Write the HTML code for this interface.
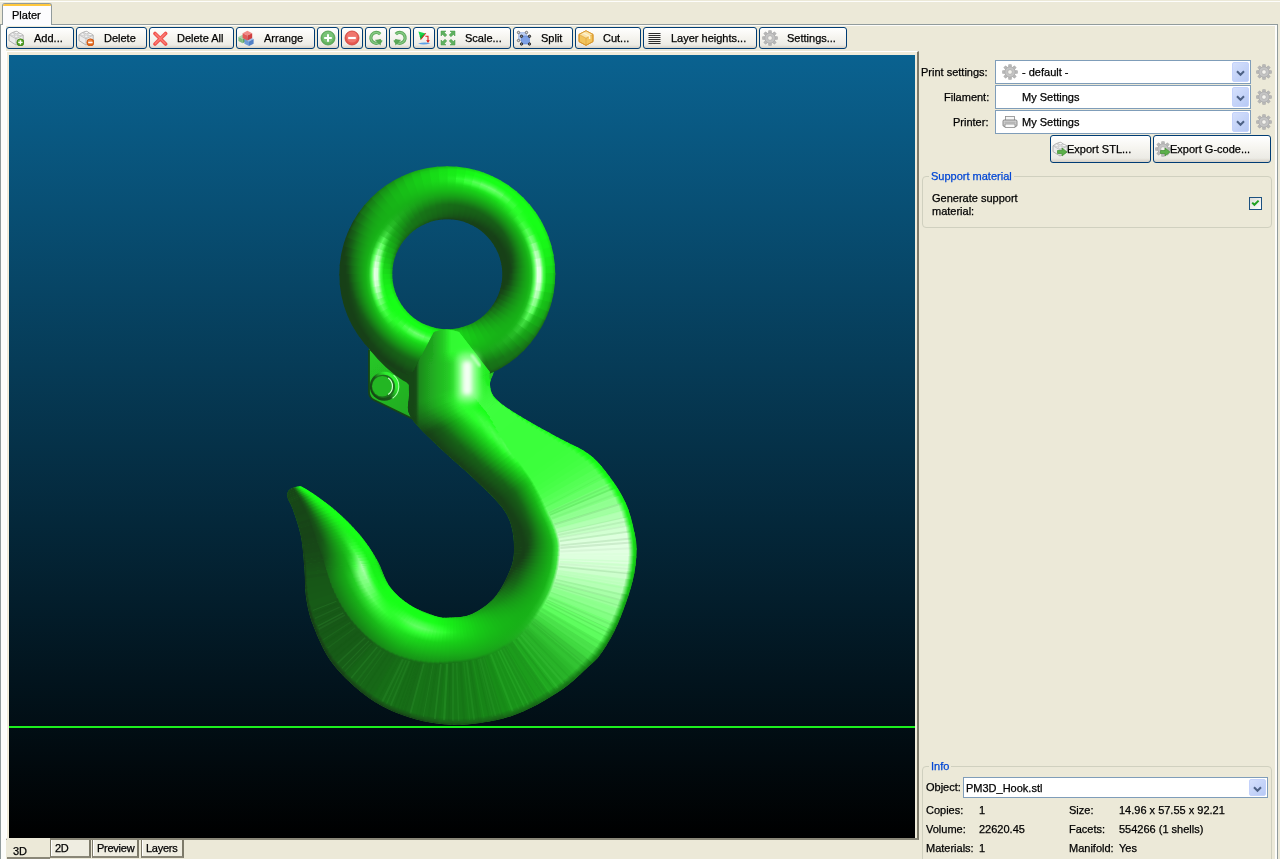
<!DOCTYPE html>
<html>
<head>
<meta charset="utf-8">
<title>Slic3r</title>
<style>
*{box-sizing:border-box;margin:0;padding:0}
html,body{width:1280px;height:859px;overflow:hidden;background:#ece9d8}
body{will-change:transform;-webkit-text-stroke:0.25px currentColor;font-family:"Liberation Sans",sans-serif;font-size:11px;color:#000;position:relative}
.abs{position:absolute}
/* top notebook */
#topline{left:0;top:1px;width:1280px;height:1px;background:#fdfdfb}
#pageborder{left:0;top:24px;width:1278px;height:1px;background:#919b9c}
#pagehl{left:1px;top:25px;width:1276px;height:1px;background:#fcfcfa}
#rightb{left:1277px;top:24px;width:1px;height:835px;background:#919b9c}
#rightw{left:1275px;top:25px;width:2px;height:834px;background:#fdfdfb}
#leftb{left:0;top:24px;width:1px;height:835px;background:#919b9c}
#leftw{left:1px;top:25px;width:5px;height:834px;background:#fdfdfb}
#tab{left:2px;top:3px;width:50px;height:22px;background:#fcfcfe;border:1px solid #919b9c;border-bottom:none;border-radius:3px 3px 0 0;overflow:hidden}
#tab i{position:absolute;left:-1px;top:-1px;width:50px;height:3px;background:#ffc73c;border-top:1px solid #e68b2c;border-radius:3px 3px 0 0}
#tab span{position:absolute;left:9px;top:5px;font-size:11px}
/* toolbar buttons */
.btn{position:absolute;top:27px;height:22px;border:1px solid #003c74;border-radius:3px;background:linear-gradient(#ffffff 0%,#f6f5f0 45%,#ecebe5 85%,#d6d0c5 100%);font-size:11px;line-height:20px;white-space:nowrap}
.btn span{position:absolute;top:0;left:0}
.btn svg{position:absolute;left:2px;top:2px}
/* canvas */
#cvwrap{left:6px;top:51px;width:913px;height:789px;background:#f1ecda;border-top:1px solid #fff;border-left:1px solid #fff;border-right:2px solid #7d7a6a;border-bottom:2px solid #8a8778}
#cvin{left:7px;top:838px;width:43px;height:3px;background:#ece9d8}
#cv{left:9px;top:55px;width:906px;height:783px;overflow:hidden;background:linear-gradient(#0a6290 0%,#000 100%)}
/* bottom tabs */
.btab{position:absolute;top:840px;height:18px;border-left:1px solid #7d7a6a;border-right:2px solid #7d7a6a;border-bottom:2px solid #8a8778;box-shadow:inset 1px 0 0 #fff;font-size:11px;letter-spacing:-0.25px;line-height:17px;padding-left:4px;background:#efede1}
/* right panel */
.lbl{position:absolute;font-size:11px;white-space:nowrap}
.combo{position:absolute;left:995px;width:256px;height:24px;background:#fff;border:1px solid #7f9db9}
.combo .dd{position:absolute;right:1px;top:1px;width:17px;height:20px;border-radius:2px;background:linear-gradient(135deg,#d5e0fc,#b7c9f5);border:1px solid #c4d2fb}
.combo .t{position:absolute;left:26px;top:5px;font-size:11px}
.grp{position:absolute;border:1px solid #d0d0bf;border-radius:4px}
.grp b{position:absolute;left:6px;top:-7px;background:#ece9d8;color:#0046d5;font-weight:normal;padding:0 2px;font-size:11px}
</style>
</head>
<body>
<div class="abs" id="topline"></div>
<div class="abs" id="pageborder"></div>
<div class="abs" id="pagehl"></div>
<div class="abs" id="leftb"></div>
<div class="abs" id="leftw"></div>
<div class="abs" id="rightw"></div>
<div class="abs" id="rightb"></div>
<div class="abs" id="tab"><i></i><span>Plater</span></div>

<!-- TOOLBAR -->
<div id="toolbar">
<div class="btn" style="left:6px;width:68px"><span style="left:27px">Add...</span><svg width="16" height="16" viewBox="0 0 16 16" style="left:1px;top:2px"><path d="M1 4.8L1 10.6L8 15L15.2 11L15.2 5.2L11.6 3.2L8.2 1.2L4.4 2.6Z" fill="#ececec" stroke="#a9a9a9" stroke-width=".9" stroke-linejoin="round"/><path d="M1 4.8L8 8.8L15.2 5.2M8 8.8L8 15" fill="none" stroke="#b9b9b9" stroke-width=".8"/><ellipse cx="4.6" cy="4.2" rx="2" ry="1.1" fill="#fbfbfb" stroke="#b0b0b0" stroke-width=".6"/><ellipse cx="8.4" cy="2.6" rx="2" ry="1.1" fill="#fbfbfb" stroke="#b0b0b0" stroke-width=".6"/><ellipse cx="8.2" cy="6.2" rx="2" ry="1.1" fill="#fbfbfb" stroke="#b0b0b0" stroke-width=".6"/><ellipse cx="12" cy="4.6" rx="2" ry="1.1" fill="#fbfbfb" stroke="#b0b0b0" stroke-width=".6"/><circle cx="12.4" cy="12.4" r="3.6" fill="#4e9c22" stroke="#3a7d14" stroke-width=".6"/><circle cx="12" cy="11.8" r="2.2" fill="#86c85a" opacity=".7"/><path d="M12.4 10.2V14.6M10.2 12.4H14.6" stroke="#fff" stroke-width="1.3"/></svg></div>
<div class="btn" style="left:76px;width:71px"><span style="left:27px">Delete</span><svg width="16" height="16" viewBox="0 0 16 16" style="left:1px;top:2px"><path d="M1 4.8L1 10.6L8 15L15.2 11L15.2 5.2L11.6 3.2L8.2 1.2L4.4 2.6Z" fill="#ececec" stroke="#a9a9a9" stroke-width=".9" stroke-linejoin="round"/><path d="M1 4.8L8 8.8L15.2 5.2M8 8.8L8 15" fill="none" stroke="#b9b9b9" stroke-width=".8"/><ellipse cx="4.6" cy="4.2" rx="2" ry="1.1" fill="#fbfbfb" stroke="#b0b0b0" stroke-width=".6"/><ellipse cx="8.4" cy="2.6" rx="2" ry="1.1" fill="#fbfbfb" stroke="#b0b0b0" stroke-width=".6"/><ellipse cx="8.2" cy="6.2" rx="2" ry="1.1" fill="#fbfbfb" stroke="#b0b0b0" stroke-width=".6"/><ellipse cx="12" cy="4.6" rx="2" ry="1.1" fill="#fbfbfb" stroke="#b0b0b0" stroke-width=".6"/><circle cx="12.4" cy="12.4" r="3.6" fill="#e2661a" stroke="#c2500e" stroke-width=".6"/><circle cx="12" cy="11.6" r="2.2" fill="#f49a5c" opacity=".7"/><path d="M10.2 12.5H14.6" stroke="#fff" stroke-width="1.5"/></svg></div>
<div class="btn" style="left:149px;width:85px"><span style="left:27px">Delete All</span><svg width="16" height="16" viewBox="0 0 16 16" style="left:2px;top:2px"><path d="M3 3.4L13.6 14M13.6 3.4L3 14" stroke="#f0534c" stroke-width="3.6" stroke-linecap="round"/><path d="M3.4 3.8L13.2 13.6M13.2 3.8L3.4 13.6" stroke="#fb7d77" stroke-width="1.4" stroke-linecap="round"/></svg></div>
<div class="btn" style="left:236px;width:79px"><span style="left:27px">Arrange</span><svg width="16" height="16" viewBox="0 0 16 16" style="left:1px;top:2px"><path d="M4.6 4.8L8.8 6.9L4.6 9.0L0.4 6.9Z" fill="#a8d4a8"/><path d="M0.4 6.9L4.6 9.0L4.6 13.2L0.4 11.1Z" fill="#7dbb80"/><path d="M8.8 6.9L4.6 9.0L4.6 13.2L8.8 11.1Z" fill="#5fa565"/><path d="M11.0 6.8L15.6 9.1L11.0 11.4L6.4 9.1Z" fill="#9fc0ea"/><path d="M6.4 9.1L11.0 11.4L11.0 16.0L6.4 13.7Z" fill="#6f9bd8"/><path d="M15.6 9.1L11.0 11.4L11.0 16.0L15.6 13.7Z" fill="#4f7fc6"/><path d="M9.4 0.8L14.2 3.2L9.4 5.6L4.6 3.2Z" fill="#f08a86"/><path d="M4.6 3.2L9.4 5.6L9.4 10.4L4.6 8.0Z" fill="#e25a58"/><path d="M14.2 3.2L9.4 5.6L9.4 10.4L14.2 8.0Z" fill="#cf4040"/></svg></div>
<div class="btn" style="left:317px;width:22px"><svg width="16" height="16" viewBox="0 0 16 16" style="left:2px;top:2px"><circle cx="8" cy="8" r="7" fill="#63b35f" stroke="#4d9a4a" stroke-width=".8"/><circle cx="8" cy="7" r="5.6" fill="#8ed08a" opacity=".55"/><path d="M8 4.2V11.8M4.2 8H11.8" stroke="#fff" stroke-width="2"/></svg></div>
<div class="btn" style="left:341px;width:22px"><svg width="16" height="16" viewBox="0 0 16 16" style="left:2px;top:2px"><circle cx="8" cy="8" r="7" fill="#e6574f" stroke="#cc4038" stroke-width=".8"/><circle cx="8" cy="7" r="5.6" fill="#f59089" opacity=".55"/><path d="M4.2 8H11.8" stroke="#fff" stroke-width="2.2"/></svg></div>
<div class="btn" style="left:365px;width:22px"><svg width="16" height="16" viewBox="0 0 16 16" style="left:2px;top:2px"><path d="M12.2 4.2A5.4 5.4 0 1 0 13.2 10" fill="none" stroke="#5aa858" stroke-width="3.2"/><path d="M12.2 4.2A5.4 5.4 0 1 0 13.2 10" fill="none" stroke="#86c884" stroke-width="1.4"/><path d="M7.4 10.2L12.6 9.4L12.4 15Z" fill="#5aa858" stroke="#4a9848" stroke-width=".5"/></svg></div>
<div class="btn" style="left:389px;width:22px"><svg width="16" height="16" viewBox="0 0 16 16" style="left:2px;top:2px"><path d="M3.8 4.2A5.4 5.4 0 1 1 2.8 10" fill="none" stroke="#5aa858" stroke-width="3.2"/><path d="M3.8 4.2A5.4 5.4 0 1 1 2.8 10" fill="none" stroke="#86c884" stroke-width="1.4"/><path d="M8.6 10.2L3.4 9.4L3.6 15Z" fill="#5aa858" stroke="#4a9848" stroke-width=".5"/></svg></div>
<div class="btn" style="left:413px;width:22px"><svg width="16" height="16" viewBox="0 0 16 16" style="left:2px;top:2px"><path d="M2.4 1.6L9.6 3.4L4.8 9.6Z" fill="#19d84a"/><path d="M9.6 3.4L4.8 9.6L3.6 6Z" fill="#13b03c"/><path d="M4.8 9.6L9.8 3.2" stroke="#e22" stroke-width="1"/><path d="M9.4 6.2H12V11" fill="none" stroke="#d81e1e" stroke-width="1.1"/><path d="M10.2 10.2H13.8L12 13Z" fill="#d81e1e"/><path d="M2 13.6Q8 11.6 14.4 13.2Q8 15.8 2 13.6Z" fill="#5da0e6"/></svg></div>
<div class="btn" style="left:437px;width:74px"><span style="left:27px">Scale...</span><svg width="16" height="16" viewBox="0 0 16 16" style="left:2px;top:2px"><g fill="#5fb160" stroke="#479a49" stroke-width=".5"><path d="M1 1H6L4.4 2.6L6.8 5L5 6.8L2.6 4.4L1 6Z"/><path d="M15 1V6L13.4 4.4L11 6.8L9.2 5L11.6 2.6L10 1Z"/><path d="M1 15V10L2.6 11.6L5 9.2L6.8 11L4.4 13.4L6 15Z"/><path d="M15 15H10L11.6 13.4L9.2 11L11 9.2L13.4 11.6L15 10Z"/></g></svg></div>
<div class="btn" style="left:513px;width:60px"><span style="left:27px">Split</span><svg width="16" height="16" viewBox="0 0 16 16" style="left:2px;top:2px"><rect x="2.5" y="2.5" width="8" height="8" fill="#b9cdf2" stroke="#9fb6e6" stroke-width=".6"/><rect x="5.5" y="6" width="8" height="8" fill="#7fa2e6" stroke="#5f86d6" stroke-width=".6"/><g fill="#ddd" stroke="#666" stroke-width=".9"><circle cx="2.5" cy="2.5" r="1.2"/><circle cx="10.5" cy="2.5" r="1.2"/><circle cx="2.5" cy="10.5" r="1.2"/></g><g fill="#888" stroke="#222" stroke-width=".9"><circle cx="5.5" cy="6.3" r="1.2"/><circle cx="13.5" cy="6.3" r="1.2"/><circle cx="5.5" cy="14" r="1.2"/><circle cx="13.5" cy="14" r="1.2"/></g></svg></div>
<div class="btn" style="left:575px;width:66px"><span style="left:27px">Cut...</span><svg width="16" height="16" viewBox="0 0 16 16" style="left:2px;top:2px"><path d="M8 .8L15 4.4V11.6L8 15.4L1 11.6V4.4Z" fill="#f2c45c" stroke="#d9972b" stroke-width=".9" stroke-linejoin="round"/><path d="M8 .8L15 4.4L8 8.2L1 4.4Z" fill="#fbe3a6"/><path d="M1 4.4L8 8.2V15.4" fill="none" stroke="#e0a43c" stroke-width=".7"/><path d="M8 8.2L15 4.4" stroke="#e0a43c" stroke-width=".7"/><path d="M4.6 2.6L11.6 6.2V9" fill="none" stroke="#fdf2d0" stroke-width="1.5"/><path d="M8 .8L15 4.4V11.6L8 15.4L1 11.6V4.4Z" fill="none" stroke="#d9972b" stroke-width=".9" stroke-linejoin="round"/></svg></div>
<div class="btn" style="left:643px;width:114px"><span style="left:27px">Layer heights...</span><svg width="16" height="16" viewBox="0 0 16 16" style="left:2px;top:2px"><path d="M2.5 3.5H14.5M2.5 5.5H14.5M2.5 7.5H14.5M2.5 9.5H14.5M2.5 11.5H14.5M2.5 13.5H14.5" stroke="#2c2c2c" stroke-width="1"/></svg></div>
<div class="btn" style="left:759px;width:88px"><span style="left:27px">Settings...</span><svg width="16" height="16" viewBox="0 0 16 16" style="left:2px;top:2px"><g transform="translate(8 8)"><g fill="#b8b8b8" stroke="#a0a0a0" stroke-width=".4"><rect x="-1.5" y="-7.6" width="3" height="4" rx=".6" transform="rotate(0)"/><rect x="-1.5" y="-7.6" width="3" height="4" rx=".6" transform="rotate(45)"/><rect x="-1.5" y="-7.6" width="3" height="4" rx=".6" transform="rotate(90)"/><rect x="-1.5" y="-7.6" width="3" height="4" rx=".6" transform="rotate(135)"/><rect x="-1.5" y="-7.6" width="3" height="4" rx=".6" transform="rotate(180)"/><rect x="-1.5" y="-7.6" width="3" height="4" rx=".6" transform="rotate(225)"/><rect x="-1.5" y="-7.6" width="3" height="4" rx=".6" transform="rotate(270)"/><rect x="-1.5" y="-7.6" width="3" height="4" rx=".6" transform="rotate(315)"/></g><circle r="5.2" fill="#c4c4c4" stroke="#a4a4a4" stroke-width=".6"/><circle r="2.3" fill="#f4f3ee" stroke="#a4a4a4" stroke-width=".6"/></g></svg></div>
</div>

<!-- CANVAS -->
<div class="abs" id="cvwrap"></div>
<div class="abs" id="cvin"></div>
<div class="abs" id="cv">
<!--HOOK-->
<svg class="abs" style="left:0;top:0" width="906" height="783" viewBox="9 55 906 783">
<defs><linearGradient id="lp" gradientUnits="userSpaceOnUse" x1="369" y1="355" x2="411" y2="415"><stop offset="0" stop-color="#26c826"/><stop offset="1" stop-color="#20aa20"/></linearGradient>
<clipPath id="clp"><path d="M369 348L369 392Q369 397.5 374 400L412 418.5L412 376L396 352Z"/></clipPath>
<filter id="bl2" x="-20%" y="-20%" width="140%" height="140%"><feGaussianBlur stdDeviation="2"/></filter>
<filter id="bl1" x="-20%" y="-20%" width="140%" height="140%"><feGaussianBlur stdDeviation="1"/></filter>
<filter id="bl07" x="-20%" y="-20%" width="140%" height="140%"><feGaussianBlur stdDeviation="0.7"/></filter>
<linearGradient id="bo" gradientUnits="userSpaceOnUse" x1="372" y1="396" x2="397" y2="377"><stop offset="0" stop-color="#144414"/><stop offset=".42" stop-color="#185818"/><stop offset=".6" stop-color="#22b022"/><stop offset=".78" stop-color="#2eea2e"/><stop offset="1" stop-color="#34f834"/></linearGradient>
<linearGradient id="b0" gradientUnits="userSpaceOnUse" x1="390.0" y1="395.2" x2="469.0" y2="362.2"><stop offset="0.000" stop-color="#174017"/><stop offset="0.044" stop-color="#174417"/><stop offset="0.096" stop-color="#174e17"/><stop offset="0.155" stop-color="#175817"/><stop offset="0.221" stop-color="#176a17"/><stop offset="0.291" stop-color="#178817"/><stop offset="0.363" stop-color="#17a517"/><stop offset="0.436" stop-color="#1bc31b"/><stop offset="0.509" stop-color="#2ae92a"/><stop offset="0.578" stop-color="#2eff2e"/><stop offset="0.643" stop-color="#2aff2a"/><stop offset="0.702" stop-color="#1dff1d"/><stop offset="0.753" stop-color="#17ff17"/><stop offset="0.763" stop-color="#46ff46"/><stop offset="0.975" stop-color="#46ff46"/><stop offset="0.993" stop-color="#19ff19"/><stop offset="1.000" stop-color="#17f617"/></linearGradient>
<linearGradient id="b1" gradientUnits="userSpaceOnUse" x1="396.0" y1="401.8" x2="475.0" y2="368.8"><stop offset="0.000" stop-color="#174017"/><stop offset="0.044" stop-color="#174417"/><stop offset="0.096" stop-color="#174e17"/><stop offset="0.155" stop-color="#175717"/><stop offset="0.221" stop-color="#176a17"/><stop offset="0.291" stop-color="#178817"/><stop offset="0.363" stop-color="#17a517"/><stop offset="0.436" stop-color="#1bc31b"/><stop offset="0.509" stop-color="#2ae92a"/><stop offset="0.578" stop-color="#2eff2e"/><stop offset="0.643" stop-color="#29ff29"/><stop offset="0.702" stop-color="#1cff1c"/><stop offset="0.753" stop-color="#17ff17"/><stop offset="0.763" stop-color="#47ff47"/><stop offset="0.975" stop-color="#47ff47"/><stop offset="0.993" stop-color="#18ff18"/><stop offset="1.000" stop-color="#17f317"/></linearGradient>
<linearGradient id="b2" gradientUnits="userSpaceOnUse" x1="402.0" y1="408.2" x2="481.0" y2="375.2"><stop offset="0.000" stop-color="#174017"/><stop offset="0.044" stop-color="#174417"/><stop offset="0.096" stop-color="#174e17"/><stop offset="0.155" stop-color="#175717"/><stop offset="0.221" stop-color="#176a17"/><stop offset="0.291" stop-color="#178817"/><stop offset="0.363" stop-color="#17a517"/><stop offset="0.436" stop-color="#1bc31b"/><stop offset="0.509" stop-color="#2bea2b"/><stop offset="0.578" stop-color="#2fff2f"/><stop offset="0.643" stop-color="#28ff28"/><stop offset="0.702" stop-color="#1cff1c"/><stop offset="0.753" stop-color="#17ff17"/><stop offset="0.763" stop-color="#48ff48"/><stop offset="0.975" stop-color="#48ff48"/><stop offset="0.993" stop-color="#18ff18"/><stop offset="1.000" stop-color="#17fa17"/></linearGradient>
<linearGradient id="b3" gradientUnits="userSpaceOnUse" x1="408.0" y1="414.8" x2="487.0" y2="381.8"><stop offset="0.000" stop-color="#174017"/><stop offset="0.044" stop-color="#174417"/><stop offset="0.096" stop-color="#174e17"/><stop offset="0.155" stop-color="#175717"/><stop offset="0.221" stop-color="#176a17"/><stop offset="0.291" stop-color="#178817"/><stop offset="0.363" stop-color="#17a517"/><stop offset="0.436" stop-color="#1bc31b"/><stop offset="0.509" stop-color="#2ae92a"/><stop offset="0.578" stop-color="#2eff2e"/><stop offset="0.643" stop-color="#29ff29"/><stop offset="0.702" stop-color="#1cff1c"/><stop offset="0.753" stop-color="#17ff17"/><stop offset="0.763" stop-color="#47ff47"/><stop offset="0.975" stop-color="#47ff47"/><stop offset="0.993" stop-color="#18ff18"/><stop offset="1.000" stop-color="#17f217"/></linearGradient>
<linearGradient id="b4" gradientUnits="userSpaceOnUse" x1="413.1" y1="420.1" x2="490.5" y2="386.5"><stop offset="0.000" stop-color="#174017"/><stop offset="0.044" stop-color="#174417"/><stop offset="0.096" stop-color="#174e17"/><stop offset="0.156" stop-color="#175717"/><stop offset="0.222" stop-color="#176a17"/><stop offset="0.292" stop-color="#178817"/><stop offset="0.365" stop-color="#17a517"/><stop offset="0.439" stop-color="#1bc31b"/><stop offset="0.511" stop-color="#2ae92a"/><stop offset="0.581" stop-color="#2eff2e"/><stop offset="0.646" stop-color="#2aff2a"/><stop offset="0.706" stop-color="#1dff1d"/><stop offset="0.757" stop-color="#17ff17"/><stop offset="0.767" stop-color="#46ff46"/><stop offset="0.976" stop-color="#46ff46"/><stop offset="0.993" stop-color="#19ff19"/><stop offset="1.000" stop-color="#17f917"/></linearGradient>
<linearGradient id="b5" gradientUnits="userSpaceOnUse" x1="417.4" y1="424.4" x2="491.5" y2="389.5"><stop offset="0.000" stop-color="#174017"/><stop offset="0.044" stop-color="#174417"/><stop offset="0.097" stop-color="#174e17"/><stop offset="0.158" stop-color="#175817"/><stop offset="0.225" stop-color="#176a17"/><stop offset="0.296" stop-color="#178817"/><stop offset="0.369" stop-color="#17a517"/><stop offset="0.444" stop-color="#1bc31b"/><stop offset="0.517" stop-color="#2ae82a"/><stop offset="0.588" stop-color="#2eff2e"/><stop offset="0.654" stop-color="#2aff2a"/><stop offset="0.714" stop-color="#1dff1d"/><stop offset="0.766" stop-color="#17ff17"/><stop offset="0.775" stop-color="#46ff46"/><stop offset="0.977" stop-color="#46ff46"/><stop offset="0.993" stop-color="#19ff19"/><stop offset="1.000" stop-color="#17f617"/></linearGradient>
<linearGradient id="b6" gradientUnits="userSpaceOnUse" x1="421.6" y1="428.6" x2="492.5" y2="392.5"><stop offset="0.000" stop-color="#174017"/><stop offset="0.045" stop-color="#174417"/><stop offset="0.098" stop-color="#174e17"/><stop offset="0.160" stop-color="#175817"/><stop offset="0.227" stop-color="#176a17"/><stop offset="0.299" stop-color="#178817"/><stop offset="0.373" stop-color="#17a517"/><stop offset="0.449" stop-color="#1bc31b"/><stop offset="0.523" stop-color="#29e829"/><stop offset="0.594" stop-color="#2eff2e"/><stop offset="0.661" stop-color="#2aff2a"/><stop offset="0.722" stop-color="#1dff1d"/><stop offset="0.775" stop-color="#17ff17"/><stop offset="0.784" stop-color="#46ff46"/><stop offset="0.977" stop-color="#46ff46"/><stop offset="0.993" stop-color="#19ff19"/><stop offset="1.000" stop-color="#17f217"/></linearGradient>
<linearGradient id="b7" gradientUnits="userSpaceOnUse" x1="425.9" y1="432.9" x2="493.5" y2="395.5"><stop offset="0.000" stop-color="#174017"/><stop offset="0.045" stop-color="#174517"/><stop offset="0.100" stop-color="#174e17"/><stop offset="0.162" stop-color="#175817"/><stop offset="0.230" stop-color="#176a17"/><stop offset="0.303" stop-color="#178817"/><stop offset="0.378" stop-color="#17a517"/><stop offset="0.454" stop-color="#1bc31b"/><stop offset="0.529" stop-color="#28e728"/><stop offset="0.601" stop-color="#2dff2d"/><stop offset="0.669" stop-color="#2cff2c"/><stop offset="0.730" stop-color="#1eff1e"/><stop offset="0.784" stop-color="#17ff17"/><stop offset="0.792" stop-color="#44ff44"/><stop offset="0.978" stop-color="#44ff44"/><stop offset="0.994" stop-color="#19ff19"/><stop offset="1.000" stop-color="#17f917"/></linearGradient>
<linearGradient id="b8" gradientUnits="userSpaceOnUse" x1="430.1" y1="437.1" x2="494.6" y2="397.5"><stop offset="0.000" stop-color="#174017"/><stop offset="0.045" stop-color="#174517"/><stop offset="0.100" stop-color="#174f17"/><stop offset="0.162" stop-color="#175817"/><stop offset="0.231" stop-color="#176a17"/><stop offset="0.303" stop-color="#178817"/><stop offset="0.379" stop-color="#17a517"/><stop offset="0.455" stop-color="#1bc31b"/><stop offset="0.531" stop-color="#27e627"/><stop offset="0.603" stop-color="#2dff2d"/><stop offset="0.671" stop-color="#2eff2e"/><stop offset="0.732" stop-color="#1fff1f"/><stop offset="0.786" stop-color="#17ff17"/><stop offset="0.794" stop-color="#43ff43"/><stop offset="0.979" stop-color="#43ff43"/><stop offset="0.994" stop-color="#19ff19"/><stop offset="1.000" stop-color="#17f217"/></linearGradient>
<linearGradient id="b9" gradientUnits="userSpaceOnUse" x1="434.4" y1="441.4" x2="495.9" y2="398.5"><stop offset="0.000" stop-color="#174017"/><stop offset="0.045" stop-color="#174617"/><stop offset="0.099" stop-color="#174f17"/><stop offset="0.161" stop-color="#175817"/><stop offset="0.229" stop-color="#176a17"/><stop offset="0.302" stop-color="#178817"/><stop offset="0.377" stop-color="#17a517"/><stop offset="0.453" stop-color="#1bc31b"/><stop offset="0.528" stop-color="#26e526"/><stop offset="0.600" stop-color="#2cff2c"/><stop offset="0.667" stop-color="#31ff31"/><stop offset="0.728" stop-color="#20ff20"/><stop offset="0.781" stop-color="#18ff18"/><stop offset="0.790" stop-color="#42ff42"/><stop offset="0.978" stop-color="#42ff42"/><stop offset="0.993" stop-color="#19ff19"/><stop offset="1.000" stop-color="#17f817"/></linearGradient>
<linearGradient id="b10" gradientUnits="userSpaceOnUse" x1="438.6" y1="445.6" x2="497.1" y2="399.5"><stop offset="0.000" stop-color="#174017"/><stop offset="0.045" stop-color="#174617"/><stop offset="0.099" stop-color="#175017"/><stop offset="0.160" stop-color="#175917"/><stop offset="0.228" stop-color="#176917"/><stop offset="0.300" stop-color="#178817"/><stop offset="0.375" stop-color="#17a517"/><stop offset="0.450" stop-color="#1ac21a"/><stop offset="0.525" stop-color="#24e424"/><stop offset="0.596" stop-color="#2cfe2c"/><stop offset="0.663" stop-color="#35ff35"/><stop offset="0.724" stop-color="#23ff23"/><stop offset="0.777" stop-color="#18ff18"/><stop offset="0.786" stop-color="#40ff40"/><stop offset="0.978" stop-color="#40ff40"/><stop offset="0.993" stop-color="#1aff1a"/><stop offset="1.000" stop-color="#17f317"/></linearGradient>
<linearGradient id="b11" gradientUnits="userSpaceOnUse" x1="442.9" y1="449.9" x2="498.4" y2="400.5"><stop offset="0.000" stop-color="#174017"/><stop offset="0.045" stop-color="#174717"/><stop offset="0.098" stop-color="#175117"/><stop offset="0.159" stop-color="#175917"/><stop offset="0.227" stop-color="#176917"/><stop offset="0.298" stop-color="#178817"/><stop offset="0.373" stop-color="#17a517"/><stop offset="0.448" stop-color="#1ac21a"/><stop offset="0.522" stop-color="#23e223"/><stop offset="0.593" stop-color="#2cff2c"/><stop offset="0.660" stop-color="#3bff3b"/><stop offset="0.720" stop-color="#26ff26"/><stop offset="0.773" stop-color="#18ff18"/><stop offset="0.782" stop-color="#3eff3e"/><stop offset="0.977" stop-color="#3eff3e"/><stop offset="0.993" stop-color="#1aff1a"/><stop offset="1.000" stop-color="#17f317"/></linearGradient>
<linearGradient id="b12" gradientUnits="userSpaceOnUse" x1="446.6" y1="453.5" x2="501.6" y2="402.9"><stop offset="0.000" stop-color="#174017"/><stop offset="0.043" stop-color="#174717"/><stop offset="0.094" stop-color="#175017"/><stop offset="0.153" stop-color="#175917"/><stop offset="0.218" stop-color="#176617"/><stop offset="0.288" stop-color="#178417"/><stop offset="0.360" stop-color="#17a117"/><stop offset="0.434" stop-color="#19be19"/><stop offset="0.506" stop-color="#21dd21"/><stop offset="0.576" stop-color="#2afa2a"/><stop offset="0.642" stop-color="#40ff40"/><stop offset="0.702" stop-color="#2dff2d"/><stop offset="0.755" stop-color="#19ff19"/><stop offset="0.764" stop-color="#3dff3d"/><stop offset="0.975" stop-color="#3dff3d"/><stop offset="0.993" stop-color="#1bff1b"/><stop offset="1.000" stop-color="#17f817"/></linearGradient>
<linearGradient id="b13" gradientUnits="userSpaceOnUse" x1="449.9" y1="456.5" x2="506.9" y2="406.6"><stop offset="0.000" stop-color="#174017"/><stop offset="0.039" stop-color="#174617"/><stop offset="0.086" stop-color="#174f17"/><stop offset="0.141" stop-color="#175817"/><stop offset="0.203" stop-color="#176017"/><stop offset="0.268" stop-color="#177d17"/><stop offset="0.337" stop-color="#179a17"/><stop offset="0.408" stop-color="#18b718"/><stop offset="0.478" stop-color="#1ed41e"/><stop offset="0.546" stop-color="#25f025"/><stop offset="0.610" stop-color="#40ff40"/><stop offset="0.669" stop-color="#3bff3b"/><stop offset="0.722" stop-color="#1dff1d"/><stop offset="0.733" stop-color="#3cff3c"/><stop offset="0.972" stop-color="#3cff3c"/><stop offset="0.992" stop-color="#1cff1c"/><stop offset="1.000" stop-color="#17fe17"/></linearGradient>
<linearGradient id="b14" gradientUnits="userSpaceOnUse" x1="453.1" y1="459.5" x2="512.1" y2="410.4"><stop offset="0.000" stop-color="#174017"/><stop offset="0.035" stop-color="#174417"/><stop offset="0.079" stop-color="#174d17"/><stop offset="0.130" stop-color="#175617"/><stop offset="0.188" stop-color="#175e17"/><stop offset="0.250" stop-color="#177517"/><stop offset="0.316" stop-color="#179317"/><stop offset="0.383" stop-color="#18af18"/><stop offset="0.450" stop-color="#1ccc1c"/><stop offset="0.516" stop-color="#22e822"/><stop offset="0.579" stop-color="#39ff39"/><stop offset="0.638" stop-color="#46ff46"/><stop offset="0.690" stop-color="#23ff23"/><stop offset="0.702" stop-color="#3cff3c"/><stop offset="0.969" stop-color="#3cff3c"/><stop offset="0.991" stop-color="#1cff1c"/><stop offset="1.000" stop-color="#17f317"/></linearGradient>
<linearGradient id="b15" gradientUnits="userSpaceOnUse" x1="456.4" y1="462.5" x2="517.4" y2="414.1"><stop offset="0.000" stop-color="#174017"/><stop offset="0.032" stop-color="#174217"/><stop offset="0.072" stop-color="#174b17"/><stop offset="0.120" stop-color="#175417"/><stop offset="0.174" stop-color="#175c17"/><stop offset="0.232" stop-color="#176e17"/><stop offset="0.295" stop-color="#178c17"/><stop offset="0.359" stop-color="#17a817"/><stop offset="0.424" stop-color="#1ac51a"/><stop offset="0.488" stop-color="#20e020"/><stop offset="0.549" stop-color="#30ff30"/><stop offset="0.607" stop-color="#4bff4b"/><stop offset="0.659" stop-color="#2eff2e"/><stop offset="0.672" stop-color="#3cff3c"/><stop offset="0.966" stop-color="#3cff3c"/><stop offset="0.990" stop-color="#1cff1c"/><stop offset="1.000" stop-color="#17f517"/></linearGradient>
<linearGradient id="b16" gradientUnits="userSpaceOnUse" x1="459.8" y1="465.6" x2="522.5" y2="417.4"><stop offset="0.000" stop-color="#174017"/><stop offset="0.029" stop-color="#174017"/><stop offset="0.066" stop-color="#174917"/><stop offset="0.110" stop-color="#175217"/><stop offset="0.160" stop-color="#175b17"/><stop offset="0.216" stop-color="#176617"/><stop offset="0.275" stop-color="#178417"/><stop offset="0.336" stop-color="#17a117"/><stop offset="0.399" stop-color="#19bd19"/><stop offset="0.461" stop-color="#1ed91e"/><stop offset="0.521" stop-color="#28f728"/><stop offset="0.577" stop-color="#4aff4a"/><stop offset="0.628" stop-color="#3aff3a"/><stop offset="0.643" stop-color="#3bff3b"/><stop offset="0.963" stop-color="#3bff3b"/><stop offset="0.989" stop-color="#1dff1d"/><stop offset="1.000" stop-color="#17fb17"/></linearGradient>
<linearGradient id="b17" gradientUnits="userSpaceOnUse" x1="463.2" y1="468.9" x2="527.5" y2="420.1"><stop offset="0.000" stop-color="#174017"/><stop offset="0.026" stop-color="#174017"/><stop offset="0.060" stop-color="#174817"/><stop offset="0.100" stop-color="#175017"/><stop offset="0.148" stop-color="#175917"/><stop offset="0.200" stop-color="#176117"/><stop offset="0.256" stop-color="#177d17"/><stop offset="0.315" stop-color="#179a17"/><stop offset="0.375" stop-color="#18b518"/><stop offset="0.435" stop-color="#1dd21d"/><stop offset="0.493" stop-color="#23ed23"/><stop offset="0.548" stop-color="#42ff42"/><stop offset="0.599" stop-color="#47ff47"/><stop offset="0.615" stop-color="#3bff3b"/><stop offset="0.960" stop-color="#3bff3b"/><stop offset="0.988" stop-color="#1dff1d"/><stop offset="1.000" stop-color="#17ff17"/></linearGradient>
<linearGradient id="b18" gradientUnits="userSpaceOnUse" x1="466.8" y1="472.1" x2="532.5" y2="422.9"><stop offset="0.000" stop-color="#174017"/><stop offset="0.023" stop-color="#174017"/><stop offset="0.054" stop-color="#174617"/><stop offset="0.092" stop-color="#174e17"/><stop offset="0.136" stop-color="#175717"/><stop offset="0.185" stop-color="#175f17"/><stop offset="0.238" stop-color="#177517"/><stop offset="0.294" stop-color="#179217"/><stop offset="0.352" stop-color="#18ae18"/><stop offset="0.410" stop-color="#1bca1b"/><stop offset="0.467" stop-color="#20e420"/><stop offset="0.521" stop-color="#37ff37"/><stop offset="0.571" stop-color="#4fff4f"/><stop offset="0.588" stop-color="#3bff3b"/><stop offset="0.957" stop-color="#3bff3b"/><stop offset="0.987" stop-color="#1dff1d"/><stop offset="1.000" stop-color="#17fa17"/></linearGradient>
<linearGradient id="b19" gradientUnits="userSpaceOnUse" x1="470.2" y1="475.4" x2="537.5" y2="425.6"><stop offset="0.000" stop-color="#174017"/><stop offset="0.020" stop-color="#174017"/><stop offset="0.048" stop-color="#174417"/><stop offset="0.083" stop-color="#174c17"/><stop offset="0.124" stop-color="#175517"/><stop offset="0.171" stop-color="#175d17"/><stop offset="0.221" stop-color="#176e17"/><stop offset="0.275" stop-color="#178b17"/><stop offset="0.330" stop-color="#17a717"/><stop offset="0.386" stop-color="#1ac21a"/><stop offset="0.441" stop-color="#1edd1e"/><stop offset="0.494" stop-color="#2dfe2d"/><stop offset="0.544" stop-color="#4fff4f"/><stop offset="0.562" stop-color="#3bff3b"/><stop offset="0.954" stop-color="#3bff3b"/><stop offset="0.986" stop-color="#1dff1d"/><stop offset="1.000" stop-color="#17f717"/></linearGradient>
<linearGradient id="b20" gradientUnits="userSpaceOnUse" x1="473.9" y1="478.8" x2="542.2" y2="428.2"><stop offset="0.000" stop-color="#174017"/><stop offset="0.018" stop-color="#174017"/><stop offset="0.044" stop-color="#174217"/><stop offset="0.076" stop-color="#174a17"/><stop offset="0.115" stop-color="#175317"/><stop offset="0.159" stop-color="#175b17"/><stop offset="0.207" stop-color="#176617"/><stop offset="0.258" stop-color="#178317"/><stop offset="0.312" stop-color="#179f17"/><stop offset="0.366" stop-color="#19ba19"/><stop offset="0.420" stop-color="#1dd61d"/><stop offset="0.472" stop-color="#26f226"/><stop offset="0.522" stop-color="#49ff49"/><stop offset="0.541" stop-color="#3bff3b"/><stop offset="0.952" stop-color="#3bff3b"/><stop offset="0.986" stop-color="#1dff1d"/><stop offset="1.000" stop-color="#17ff17"/></linearGradient>
<linearGradient id="b21" gradientUnits="userSpaceOnUse" x1="477.6" y1="482.2" x2="546.8" y2="430.8"><stop offset="0.000" stop-color="#174017"/><stop offset="0.016" stop-color="#174017"/><stop offset="0.039" stop-color="#174017"/><stop offset="0.069" stop-color="#174817"/><stop offset="0.106" stop-color="#175117"/><stop offset="0.148" stop-color="#175917"/><stop offset="0.194" stop-color="#176117"/><stop offset="0.244" stop-color="#177c17"/><stop offset="0.296" stop-color="#179817"/><stop offset="0.350" stop-color="#18b318"/><stop offset="0.403" stop-color="#1cce1c"/><stop offset="0.455" stop-color="#21e821"/><stop offset="0.504" stop-color="#3eff3e"/><stop offset="0.524" stop-color="#3bff3b"/><stop offset="0.950" stop-color="#3bff3b"/><stop offset="0.985" stop-color="#1dff1d"/><stop offset="1.000" stop-color="#17f117"/></linearGradient>
<linearGradient id="b22" gradientUnits="userSpaceOnUse" x1="481.4" y1="485.8" x2="551.2" y2="433.2"><stop offset="0.000" stop-color="#174017"/><stop offset="0.014" stop-color="#174017"/><stop offset="0.035" stop-color="#174017"/><stop offset="0.063" stop-color="#174617"/><stop offset="0.098" stop-color="#174f17"/><stop offset="0.138" stop-color="#175717"/><stop offset="0.182" stop-color="#175f17"/><stop offset="0.231" stop-color="#177417"/><stop offset="0.281" stop-color="#179017"/><stop offset="0.334" stop-color="#17ab17"/><stop offset="0.386" stop-color="#1ac71a"/><stop offset="0.438" stop-color="#1fe11f"/><stop offset="0.487" stop-color="#32ff32"/><stop offset="0.508" stop-color="#3bff3b"/><stop offset="0.949" stop-color="#3bff3b"/><stop offset="0.985" stop-color="#1dff1d"/><stop offset="1.000" stop-color="#17fe17"/></linearGradient>
<linearGradient id="b23" gradientUnits="userSpaceOnUse" x1="485.1" y1="489.2" x2="555.8" y2="435.8"><stop offset="0.000" stop-color="#174017"/><stop offset="0.012" stop-color="#174017"/><stop offset="0.031" stop-color="#174017"/><stop offset="0.057" stop-color="#174417"/><stop offset="0.090" stop-color="#174c17"/><stop offset="0.128" stop-color="#175517"/><stop offset="0.171" stop-color="#175c17"/><stop offset="0.217" stop-color="#176c17"/><stop offset="0.267" stop-color="#178917"/><stop offset="0.318" stop-color="#17a417"/><stop offset="0.370" stop-color="#19bf19"/><stop offset="0.421" stop-color="#1eda1e"/><stop offset="0.470" stop-color="#29f729"/><stop offset="0.492" stop-color="#3bff3b"/><stop offset="0.947" stop-color="#3bff3b"/><stop offset="0.984" stop-color="#1dff1d"/><stop offset="1.000" stop-color="#17f517"/></linearGradient>
<linearGradient id="b24" gradientUnits="userSpaceOnUse" x1="488.4" y1="492.5" x2="560.4" y2="438.2"><stop offset="0.000" stop-color="#174017"/><stop offset="0.010" stop-color="#174017"/><stop offset="0.027" stop-color="#174017"/><stop offset="0.051" stop-color="#174117"/><stop offset="0.082" stop-color="#174a17"/><stop offset="0.118" stop-color="#175217"/><stop offset="0.159" stop-color="#175a17"/><stop offset="0.204" stop-color="#176417"/><stop offset="0.252" stop-color="#178117"/><stop offset="0.303" stop-color="#179c17"/><stop offset="0.354" stop-color="#18b718"/><stop offset="0.404" stop-color="#1dd31d"/><stop offset="0.454" stop-color="#23ed23"/><stop offset="0.476" stop-color="#3cff3c"/><stop offset="0.945" stop-color="#3cff3c"/><stop offset="0.984" stop-color="#1cff1c"/><stop offset="1.000" stop-color="#17f317"/></linearGradient>
<linearGradient id="b25" gradientUnits="userSpaceOnUse" x1="491.1" y1="495.5" x2="565.1" y2="440.8"><stop offset="0.000" stop-color="#174017"/><stop offset="0.008" stop-color="#174017"/><stop offset="0.023" stop-color="#174017"/><stop offset="0.046" stop-color="#174017"/><stop offset="0.074" stop-color="#174717"/><stop offset="0.109" stop-color="#174f17"/><stop offset="0.148" stop-color="#175817"/><stop offset="0.192" stop-color="#175f17"/><stop offset="0.239" stop-color="#177917"/><stop offset="0.288" stop-color="#179517"/><stop offset="0.338" stop-color="#18b018"/><stop offset="0.388" stop-color="#1ccb1c"/><stop offset="0.438" stop-color="#21e621"/><stop offset="0.460" stop-color="#3cff3c"/><stop offset="0.944" stop-color="#3cff3c"/><stop offset="0.983" stop-color="#1cff1c"/><stop offset="1.000" stop-color="#17f317"/></linearGradient>
<linearGradient id="b26" gradientUnits="userSpaceOnUse" x1="493.9" y1="498.5" x2="569.9" y2="443.2"><stop offset="0.000" stop-color="#174017"/><stop offset="0.006" stop-color="#174017"/><stop offset="0.020" stop-color="#174017"/><stop offset="0.040" stop-color="#174017"/><stop offset="0.067" stop-color="#174417"/><stop offset="0.100" stop-color="#174d17"/><stop offset="0.137" stop-color="#175517"/><stop offset="0.180" stop-color="#175d17"/><stop offset="0.225" stop-color="#177117"/><stop offset="0.274" stop-color="#178d17"/><stop offset="0.323" stop-color="#17a817"/><stop offset="0.373" stop-color="#1ac31a"/><stop offset="0.423" stop-color="#20df20"/><stop offset="0.446" stop-color="#3cff3c"/><stop offset="0.942" stop-color="#3cff3c"/><stop offset="0.983" stop-color="#1cff1c"/><stop offset="1.000" stop-color="#17f617"/></linearGradient>
<linearGradient id="b27" gradientUnits="userSpaceOnUse" x1="496.6" y1="501.5" x2="574.6" y2="445.8"><stop offset="0.000" stop-color="#174017"/><stop offset="0.004" stop-color="#174017"/><stop offset="0.016" stop-color="#174017"/><stop offset="0.035" stop-color="#174017"/><stop offset="0.060" stop-color="#174117"/><stop offset="0.091" stop-color="#174a17"/><stop offset="0.127" stop-color="#175217"/><stop offset="0.168" stop-color="#175a17"/><stop offset="0.213" stop-color="#176917"/><stop offset="0.260" stop-color="#178517"/><stop offset="0.309" stop-color="#17a017"/><stop offset="0.359" stop-color="#19bb19"/><stop offset="0.408" stop-color="#20d820"/><stop offset="0.432" stop-color="#3dff3d"/><stop offset="0.941" stop-color="#3dff3d"/><stop offset="0.982" stop-color="#1bff1b"/><stop offset="1.000" stop-color="#17fe17"/></linearGradient>
<linearGradient id="b28" gradientUnits="userSpaceOnUse" x1="499.0" y1="504.6" x2="579.4" y2="448.8"><stop offset="0.000" stop-color="#174017"/><stop offset="0.004" stop-color="#174017"/><stop offset="0.014" stop-color="#174017"/><stop offset="0.032" stop-color="#174017"/><stop offset="0.055" stop-color="#174017"/><stop offset="0.085" stop-color="#174817"/><stop offset="0.120" stop-color="#175017"/><stop offset="0.160" stop-color="#175917"/><stop offset="0.203" stop-color="#176517"/><stop offset="0.249" stop-color="#178117"/><stop offset="0.297" stop-color="#179c17"/><stop offset="0.346" stop-color="#18b718"/><stop offset="0.395" stop-color="#1fd51f"/><stop offset="0.419" stop-color="#3fff3f"/><stop offset="0.939" stop-color="#3fff3f"/><stop offset="0.982" stop-color="#1aff1a"/><stop offset="1.000" stop-color="#17f417"/></linearGradient>
<linearGradient id="b29" gradientUnits="userSpaceOnUse" x1="501.0" y1="507.9" x2="584.1" y2="452.2"><stop offset="0.000" stop-color="#174017"/><stop offset="0.003" stop-color="#174017"/><stop offset="0.014" stop-color="#174017"/><stop offset="0.031" stop-color="#174017"/><stop offset="0.054" stop-color="#174017"/><stop offset="0.083" stop-color="#174717"/><stop offset="0.117" stop-color="#175017"/><stop offset="0.155" stop-color="#175817"/><stop offset="0.197" stop-color="#176517"/><stop offset="0.242" stop-color="#178117"/><stop offset="0.289" stop-color="#179c17"/><stop offset="0.336" stop-color="#18b718"/><stop offset="0.383" stop-color="#20d620"/><stop offset="0.408" stop-color="#40ff40"/><stop offset="0.938" stop-color="#40ff40"/><stop offset="0.981" stop-color="#1aff1a"/><stop offset="1.000" stop-color="#17fa17"/></linearGradient>
<linearGradient id="b30" gradientUnits="userSpaceOnUse" x1="503.0" y1="511.1" x2="588.9" y2="455.8"><stop offset="0.000" stop-color="#174017"/><stop offset="0.003" stop-color="#174017"/><stop offset="0.013" stop-color="#174017"/><stop offset="0.030" stop-color="#174017"/><stop offset="0.052" stop-color="#174017"/><stop offset="0.080" stop-color="#174617"/><stop offset="0.113" stop-color="#174f17"/><stop offset="0.151" stop-color="#175717"/><stop offset="0.191" stop-color="#176517"/><stop offset="0.235" stop-color="#178117"/><stop offset="0.280" stop-color="#179c17"/><stop offset="0.326" stop-color="#18b718"/><stop offset="0.372" stop-color="#21d621"/><stop offset="0.397" stop-color="#43ff43"/><stop offset="0.937" stop-color="#43ff43"/><stop offset="0.981" stop-color="#19ff19"/><stop offset="1.000" stop-color="#17fb17"/></linearGradient>
<linearGradient id="b31" gradientUnits="userSpaceOnUse" x1="505.0" y1="514.4" x2="593.6" y2="459.2"><stop offset="0.000" stop-color="#174017"/><stop offset="0.003" stop-color="#174017"/><stop offset="0.013" stop-color="#174017"/><stop offset="0.029" stop-color="#174017"/><stop offset="0.051" stop-color="#174017"/><stop offset="0.078" stop-color="#174517"/><stop offset="0.110" stop-color="#174e17"/><stop offset="0.146" stop-color="#175717"/><stop offset="0.186" stop-color="#176517"/><stop offset="0.228" stop-color="#178217"/><stop offset="0.272" stop-color="#179d17"/><stop offset="0.317" stop-color="#18b718"/><stop offset="0.361" stop-color="#23d823"/><stop offset="0.387" stop-color="#47ff47"/><stop offset="0.936" stop-color="#47ff47"/><stop offset="0.981" stop-color="#18ff18"/><stop offset="1.000" stop-color="#17f617"/></linearGradient>
<linearGradient id="b32" gradientUnits="userSpaceOnUse" x1="506.8" y1="517.5" x2="598.1" y2="463.6"><stop offset="0.000" stop-color="#174017"/><stop offset="0.003" stop-color="#174017"/><stop offset="0.013" stop-color="#174017"/><stop offset="0.028" stop-color="#174017"/><stop offset="0.049" stop-color="#174017"/><stop offset="0.076" stop-color="#174417"/><stop offset="0.107" stop-color="#174d17"/><stop offset="0.143" stop-color="#175617"/><stop offset="0.182" stop-color="#176617"/><stop offset="0.223" stop-color="#178217"/><stop offset="0.266" stop-color="#179d17"/><stop offset="0.309" stop-color="#18b718"/><stop offset="0.353" stop-color="#24d924"/><stop offset="0.379" stop-color="#4cff4c"/><stop offset="0.935" stop-color="#4cff4c"/><stop offset="0.981" stop-color="#18ff18"/><stop offset="1.000" stop-color="#17f817"/></linearGradient>
<linearGradient id="b33" gradientUnits="userSpaceOnUse" x1="508.3" y1="520.6" x2="602.3" y2="468.7"><stop offset="0.000" stop-color="#174017"/><stop offset="0.003" stop-color="#174017"/><stop offset="0.012" stop-color="#174017"/><stop offset="0.028" stop-color="#174017"/><stop offset="0.048" stop-color="#174017"/><stop offset="0.075" stop-color="#174317"/><stop offset="0.105" stop-color="#174c17"/><stop offset="0.140" stop-color="#175517"/><stop offset="0.178" stop-color="#176617"/><stop offset="0.218" stop-color="#178217"/><stop offset="0.260" stop-color="#179d17"/><stop offset="0.303" stop-color="#18b718"/><stop offset="0.346" stop-color="#26db26"/><stop offset="0.372" stop-color="#54ff54"/><stop offset="0.935" stop-color="#54ff54"/><stop offset="0.980" stop-color="#18ff18"/><stop offset="1.000" stop-color="#17ef17"/></linearGradient>
<linearGradient id="b34" gradientUnits="userSpaceOnUse" x1="509.9" y1="523.7" x2="606.5" y2="473.8"><stop offset="0.000" stop-color="#174017"/><stop offset="0.003" stop-color="#174017"/><stop offset="0.012" stop-color="#174017"/><stop offset="0.027" stop-color="#174017"/><stop offset="0.047" stop-color="#174017"/><stop offset="0.073" stop-color="#174217"/><stop offset="0.103" stop-color="#174b17"/><stop offset="0.137" stop-color="#175517"/><stop offset="0.174" stop-color="#176717"/><stop offset="0.214" stop-color="#178317"/><stop offset="0.255" stop-color="#179d17"/><stop offset="0.297" stop-color="#19b719"/><stop offset="0.339" stop-color="#28dd28"/><stop offset="0.365" stop-color="#5bff5b"/><stop offset="0.934" stop-color="#5bff5b"/><stop offset="0.980" stop-color="#17ff17"/><stop offset="1.000" stop-color="#17ee17"/></linearGradient>
<linearGradient id="b35" gradientUnits="userSpaceOnUse" x1="511.4" y1="526.8" x2="610.7" y2="478.9"><stop offset="0.000" stop-color="#174017"/><stop offset="0.003" stop-color="#174017"/><stop offset="0.012" stop-color="#174017"/><stop offset="0.026" stop-color="#174017"/><stop offset="0.047" stop-color="#174017"/><stop offset="0.072" stop-color="#174117"/><stop offset="0.101" stop-color="#174b17"/><stop offset="0.134" stop-color="#175417"/><stop offset="0.171" stop-color="#176817"/><stop offset="0.210" stop-color="#178317"/><stop offset="0.250" stop-color="#179d17"/><stop offset="0.291" stop-color="#19b719"/><stop offset="0.332" stop-color="#2ade2a"/><stop offset="0.358" stop-color="#66ff66"/><stop offset="0.933" stop-color="#66ff66"/><stop offset="0.980" stop-color="#17ff17"/><stop offset="1.000" stop-color="#17ee17"/></linearGradient>
<linearGradient id="b36" gradientUnits="userSpaceOnUse" x1="512.6" y1="529.8" x2="614.9" y2="484.8"><stop offset="0.000" stop-color="#174017"/><stop offset="0.003" stop-color="#174017"/><stop offset="0.012" stop-color="#174017"/><stop offset="0.026" stop-color="#174017"/><stop offset="0.046" stop-color="#174017"/><stop offset="0.071" stop-color="#174017"/><stop offset="0.100" stop-color="#174a17"/><stop offset="0.133" stop-color="#175317"/><stop offset="0.170" stop-color="#176917"/><stop offset="0.208" stop-color="#178417"/><stop offset="0.248" stop-color="#179e17"/><stop offset="0.289" stop-color="#19b719"/><stop offset="0.330" stop-color="#2de02d"/><stop offset="0.356" stop-color="#74ff74"/><stop offset="0.933" stop-color="#74ff74"/><stop offset="0.980" stop-color="#17ff17"/><stop offset="1.000" stop-color="#17f217"/></linearGradient>
<linearGradient id="b37" gradientUnits="userSpaceOnUse" x1="513.3" y1="532.5" x2="619.1" y2="491.4"><stop offset="0.000" stop-color="#174017"/><stop offset="0.003" stop-color="#174017"/><stop offset="0.012" stop-color="#174017"/><stop offset="0.027" stop-color="#174017"/><stop offset="0.047" stop-color="#174017"/><stop offset="0.072" stop-color="#174017"/><stop offset="0.101" stop-color="#174917"/><stop offset="0.134" stop-color="#175317"/><stop offset="0.171" stop-color="#176a17"/><stop offset="0.210" stop-color="#178517"/><stop offset="0.250" stop-color="#179e17"/><stop offset="0.291" stop-color="#19b719"/><stop offset="0.332" stop-color="#30e330"/><stop offset="0.359" stop-color="#83ff83"/><stop offset="0.933" stop-color="#83ff83"/><stop offset="0.980" stop-color="#17fe17"/><stop offset="1.000" stop-color="#17eb17"/></linearGradient>
<linearGradient id="b38" gradientUnits="userSpaceOnUse" x1="513.9" y1="535.3" x2="623.0" y2="498.3"><stop offset="0.000" stop-color="#174017"/><stop offset="0.003" stop-color="#174017"/><stop offset="0.012" stop-color="#174017"/><stop offset="0.027" stop-color="#174017"/><stop offset="0.047" stop-color="#174017"/><stop offset="0.072" stop-color="#174017"/><stop offset="0.102" stop-color="#174817"/><stop offset="0.135" stop-color="#175217"/><stop offset="0.172" stop-color="#176b17"/><stop offset="0.211" stop-color="#178617"/><stop offset="0.252" stop-color="#179e17"/><stop offset="0.293" stop-color="#19b719"/><stop offset="0.335" stop-color="#32e432"/><stop offset="0.361" stop-color="#92ff92"/><stop offset="0.933" stop-color="#92ff92"/><stop offset="0.980" stop-color="#17fa17"/><stop offset="1.000" stop-color="#17e617"/></linearGradient>
<linearGradient id="b39" gradientUnits="userSpaceOnUse" x1="514.3" y1="538.1" x2="626.5" y2="505.5"><stop offset="0.000" stop-color="#174017"/><stop offset="0.003" stop-color="#174017"/><stop offset="0.012" stop-color="#174017"/><stop offset="0.027" stop-color="#174017"/><stop offset="0.047" stop-color="#174017"/><stop offset="0.073" stop-color="#174017"/><stop offset="0.103" stop-color="#174817"/><stop offset="0.137" stop-color="#175217"/><stop offset="0.174" stop-color="#176d17"/><stop offset="0.213" stop-color="#178717"/><stop offset="0.254" stop-color="#179f17"/><stop offset="0.296" stop-color="#19b719"/><stop offset="0.337" stop-color="#34e634"/><stop offset="0.364" stop-color="#a1ffa1"/><stop offset="0.934" stop-color="#a1ffa1"/><stop offset="0.980" stop-color="#17fb17"/><stop offset="1.000" stop-color="#17e617"/></linearGradient>
<linearGradient id="b40" gradientUnits="userSpaceOnUse" x1="514.7" y1="540.9" x2="629.2" y2="512.9"><stop offset="0.000" stop-color="#174017"/><stop offset="0.003" stop-color="#174017"/><stop offset="0.012" stop-color="#174017"/><stop offset="0.027" stop-color="#174017"/><stop offset="0.048" stop-color="#174017"/><stop offset="0.074" stop-color="#174017"/><stop offset="0.104" stop-color="#174717"/><stop offset="0.138" stop-color="#175517"/><stop offset="0.176" stop-color="#176f17"/><stop offset="0.216" stop-color="#178817"/><stop offset="0.257" stop-color="#179f17"/><stop offset="0.299" stop-color="#19b719"/><stop offset="0.341" stop-color="#37e837"/><stop offset="0.368" stop-color="#b3ffb3"/><stop offset="0.934" stop-color="#b3ffb3"/><stop offset="0.980" stop-color="#17f517"/><stop offset="1.000" stop-color="#17df17"/></linearGradient>
<linearGradient id="b41" gradientUnits="userSpaceOnUse" x1="514.9" y1="543.7" x2="631.5" y2="520.5"><stop offset="0.000" stop-color="#174017"/><stop offset="0.003" stop-color="#174017"/><stop offset="0.012" stop-color="#174017"/><stop offset="0.028" stop-color="#174017"/><stop offset="0.048" stop-color="#174017"/><stop offset="0.075" stop-color="#174017"/><stop offset="0.105" stop-color="#174717"/><stop offset="0.140" stop-color="#175817"/><stop offset="0.178" stop-color="#177117"/><stop offset="0.218" stop-color="#178917"/><stop offset="0.260" stop-color="#17a017"/><stop offset="0.303" stop-color="#19b619"/><stop offset="0.346" stop-color="#39e939"/><stop offset="0.372" stop-color="#c5ffc5"/><stop offset="0.935" stop-color="#c5ffc5"/><stop offset="0.980" stop-color="#17ef17"/><stop offset="1.000" stop-color="#17d817"/></linearGradient>
<linearGradient id="b42" gradientUnits="userSpaceOnUse" x1="515.0" y1="546.5" x2="633.4" y2="528.2"><stop offset="0.000" stop-color="#174017"/><stop offset="0.003" stop-color="#174017"/><stop offset="0.013" stop-color="#174017"/><stop offset="0.028" stop-color="#174017"/><stop offset="0.049" stop-color="#174017"/><stop offset="0.076" stop-color="#174017"/><stop offset="0.107" stop-color="#174617"/><stop offset="0.142" stop-color="#175b17"/><stop offset="0.180" stop-color="#177417"/><stop offset="0.221" stop-color="#178b17"/><stop offset="0.264" stop-color="#17a117"/><stop offset="0.307" stop-color="#19b619"/><stop offset="0.350" stop-color="#3bea3b"/><stop offset="0.376" stop-color="#d2ffd2"/><stop offset="0.935" stop-color="#d2ffd2"/><stop offset="0.981" stop-color="#17f117"/><stop offset="1.000" stop-color="#17d817"/></linearGradient>
<linearGradient id="b43" gradientUnits="userSpaceOnUse" x1="514.9" y1="549.2" x2="634.8" y2="536.1"><stop offset="0.000" stop-color="#174017"/><stop offset="0.003" stop-color="#174017"/><stop offset="0.013" stop-color="#174017"/><stop offset="0.028" stop-color="#174017"/><stop offset="0.049" stop-color="#174017"/><stop offset="0.076" stop-color="#174017"/><stop offset="0.107" stop-color="#174717"/><stop offset="0.143" stop-color="#175f17"/><stop offset="0.181" stop-color="#177617"/><stop offset="0.222" stop-color="#178d17"/><stop offset="0.265" stop-color="#17a217"/><stop offset="0.309" stop-color="#19b619"/><stop offset="0.352" stop-color="#3cea3c"/><stop offset="0.378" stop-color="#ddffdd"/><stop offset="0.935" stop-color="#ddffdd"/><stop offset="0.981" stop-color="#17eb17"/><stop offset="1.000" stop-color="#17d017"/></linearGradient>
<linearGradient id="b44" gradientUnits="userSpaceOnUse" x1="514.8" y1="551.9" x2="635.8" y2="544.0"><stop offset="0.000" stop-color="#174017"/><stop offset="0.003" stop-color="#174017"/><stop offset="0.013" stop-color="#174017"/><stop offset="0.028" stop-color="#174017"/><stop offset="0.049" stop-color="#174017"/><stop offset="0.076" stop-color="#174017"/><stop offset="0.107" stop-color="#174b17"/><stop offset="0.142" stop-color="#176317"/><stop offset="0.181" stop-color="#177917"/><stop offset="0.222" stop-color="#178f17"/><stop offset="0.265" stop-color="#17a217"/><stop offset="0.308" stop-color="#19b619"/><stop offset="0.351" stop-color="#3de93d"/><stop offset="0.377" stop-color="#e2ffe2"/><stop offset="0.935" stop-color="#e2ffe2"/><stop offset="0.981" stop-color="#17df17"/><stop offset="1.000" stop-color="#17c317"/></linearGradient>
<linearGradient id="b45" gradientUnits="userSpaceOnUse" x1="514.5" y1="554.7" x2="636.2" y2="552.0"><stop offset="0.000" stop-color="#174017"/><stop offset="0.003" stop-color="#174017"/><stop offset="0.013" stop-color="#174017"/><stop offset="0.028" stop-color="#174017"/><stop offset="0.049" stop-color="#174017"/><stop offset="0.075" stop-color="#174017"/><stop offset="0.107" stop-color="#175017"/><stop offset="0.142" stop-color="#176617"/><stop offset="0.180" stop-color="#177c17"/><stop offset="0.221" stop-color="#179117"/><stop offset="0.264" stop-color="#17a317"/><stop offset="0.307" stop-color="#19b619"/><stop offset="0.350" stop-color="#3de83d"/><stop offset="0.376" stop-color="#e2ffe2"/><stop offset="0.935" stop-color="#e2ffe2"/><stop offset="0.981" stop-color="#17de17"/><stop offset="1.000" stop-color="#17c017"/></linearGradient>
<linearGradient id="b46" gradientUnits="userSpaceOnUse" x1="514.0" y1="557.3" x2="635.9" y2="560.0"><stop offset="0.000" stop-color="#174017"/><stop offset="0.003" stop-color="#174017"/><stop offset="0.013" stop-color="#174017"/><stop offset="0.028" stop-color="#174017"/><stop offset="0.049" stop-color="#174017"/><stop offset="0.076" stop-color="#174217"/><stop offset="0.107" stop-color="#175417"/><stop offset="0.142" stop-color="#176a17"/><stop offset="0.180" stop-color="#177f17"/><stop offset="0.221" stop-color="#179217"/><stop offset="0.264" stop-color="#17a417"/><stop offset="0.307" stop-color="#19b519"/><stop offset="0.350" stop-color="#3ce63c"/><stop offset="0.376" stop-color="#deffde"/><stop offset="0.935" stop-color="#deffde"/><stop offset="0.981" stop-color="#17d817"/><stop offset="1.000" stop-color="#17b917"/></linearGradient>
<linearGradient id="b47" gradientUnits="userSpaceOnUse" x1="513.5" y1="560.0" x2="635.1" y2="567.9"><stop offset="0.000" stop-color="#174017"/><stop offset="0.003" stop-color="#174017"/><stop offset="0.013" stop-color="#174017"/><stop offset="0.028" stop-color="#174017"/><stop offset="0.049" stop-color="#174017"/><stop offset="0.076" stop-color="#174717"/><stop offset="0.107" stop-color="#175917"/><stop offset="0.142" stop-color="#176d17"/><stop offset="0.181" stop-color="#178117"/><stop offset="0.222" stop-color="#179417"/><stop offset="0.265" stop-color="#17a517"/><stop offset="0.308" stop-color="#19b519"/><stop offset="0.351" stop-color="#3ce43c"/><stop offset="0.377" stop-color="#d7ffd7"/><stop offset="0.935" stop-color="#d7ffd7"/><stop offset="0.981" stop-color="#17d717"/><stop offset="1.000" stop-color="#17b617"/></linearGradient>
<linearGradient id="b48" gradientUnits="userSpaceOnUse" x1="512.8" y1="562.5" x2="633.8" y2="575.8"><stop offset="0.000" stop-color="#174017"/><stop offset="0.003" stop-color="#174017"/><stop offset="0.013" stop-color="#174017"/><stop offset="0.028" stop-color="#174017"/><stop offset="0.049" stop-color="#174117"/><stop offset="0.076" stop-color="#174c17"/><stop offset="0.107" stop-color="#175d17"/><stop offset="0.143" stop-color="#177117"/><stop offset="0.181" stop-color="#178417"/><stop offset="0.223" stop-color="#179617"/><stop offset="0.266" stop-color="#17a617"/><stop offset="0.309" stop-color="#19b519"/><stop offset="0.353" stop-color="#3ae23a"/><stop offset="0.379" stop-color="#cdffcd"/><stop offset="0.935" stop-color="#cdffcd"/><stop offset="0.981" stop-color="#17d017"/><stop offset="1.000" stop-color="#17ae17"/></linearGradient>
<linearGradient id="b49" gradientUnits="userSpaceOnUse" x1="512.0" y1="565.1" x2="632.0" y2="583.5"><stop offset="0.000" stop-color="#174017"/><stop offset="0.003" stop-color="#174017"/><stop offset="0.013" stop-color="#174017"/><stop offset="0.028" stop-color="#174017"/><stop offset="0.050" stop-color="#174617"/><stop offset="0.076" stop-color="#175017"/><stop offset="0.108" stop-color="#176117"/><stop offset="0.143" stop-color="#177517"/><stop offset="0.182" stop-color="#178717"/><stop offset="0.224" stop-color="#179717"/><stop offset="0.267" stop-color="#17a617"/><stop offset="0.311" stop-color="#19b519"/><stop offset="0.354" stop-color="#39df39"/><stop offset="0.380" stop-color="#c2ffc2"/><stop offset="0.935" stop-color="#c2ffc2"/><stop offset="0.981" stop-color="#17c517"/><stop offset="1.000" stop-color="#17a317"/></linearGradient>
<linearGradient id="b50" gradientUnits="userSpaceOnUse" x1="511.1" y1="567.5" x2="629.9" y2="591.2"><stop offset="0.000" stop-color="#174017"/><stop offset="0.003" stop-color="#174017"/><stop offset="0.013" stop-color="#174017"/><stop offset="0.028" stop-color="#174117"/><stop offset="0.050" stop-color="#174b17"/><stop offset="0.077" stop-color="#175517"/><stop offset="0.108" stop-color="#176517"/><stop offset="0.144" stop-color="#177817"/><stop offset="0.183" stop-color="#178917"/><stop offset="0.225" stop-color="#179917"/><stop offset="0.268" stop-color="#17a717"/><stop offset="0.312" stop-color="#19b519"/><stop offset="0.356" stop-color="#37dc37"/><stop offset="0.382" stop-color="#b5ffb5"/><stop offset="0.936" stop-color="#b5ffb5"/><stop offset="0.981" stop-color="#17c817"/><stop offset="1.000" stop-color="#17a317"/></linearGradient>
<linearGradient id="b51" gradientUnits="userSpaceOnUse" x1="510.1" y1="570.0" x2="627.5" y2="598.7"><stop offset="0.000" stop-color="#174017"/><stop offset="0.003" stop-color="#174017"/><stop offset="0.013" stop-color="#174017"/><stop offset="0.029" stop-color="#174717"/><stop offset="0.050" stop-color="#175017"/><stop offset="0.077" stop-color="#175917"/><stop offset="0.109" stop-color="#176a17"/><stop offset="0.145" stop-color="#177b17"/><stop offset="0.184" stop-color="#178c17"/><stop offset="0.226" stop-color="#179b17"/><stop offset="0.269" stop-color="#17a817"/><stop offset="0.313" stop-color="#19b419"/><stop offset="0.357" stop-color="#35d935"/><stop offset="0.383" stop-color="#a8ffa8"/><stop offset="0.936" stop-color="#a8ffa8"/><stop offset="0.981" stop-color="#17b917"/><stop offset="1.000" stop-color="#179417"/></linearGradient>
<linearGradient id="b52" gradientUnits="userSpaceOnUse" x1="509.3" y1="572.4" x2="625.0" y2="606.1"><stop offset="0.000" stop-color="#174017"/><stop offset="0.003" stop-color="#174017"/><stop offset="0.013" stop-color="#174217"/><stop offset="0.029" stop-color="#174b17"/><stop offset="0.050" stop-color="#175517"/><stop offset="0.077" stop-color="#175d17"/><stop offset="0.109" stop-color="#176d17"/><stop offset="0.144" stop-color="#177e17"/><stop offset="0.184" stop-color="#178e17"/><stop offset="0.225" stop-color="#179c17"/><stop offset="0.269" stop-color="#17a917"/><stop offset="0.313" stop-color="#19b419"/><stop offset="0.357" stop-color="#34d734"/><stop offset="0.383" stop-color="#9bff9b"/><stop offset="0.936" stop-color="#9bff9b"/><stop offset="0.981" stop-color="#17b817"/><stop offset="1.000" stop-color="#179117"/></linearGradient>
<linearGradient id="b53" gradientUnits="userSpaceOnUse" x1="508.6" y1="574.9" x2="622.3" y2="613.5"><stop offset="0.000" stop-color="#174017"/><stop offset="0.003" stop-color="#174017"/><stop offset="0.013" stop-color="#174717"/><stop offset="0.028" stop-color="#175017"/><stop offset="0.050" stop-color="#175917"/><stop offset="0.077" stop-color="#176117"/><stop offset="0.108" stop-color="#177117"/><stop offset="0.144" stop-color="#178217"/><stop offset="0.183" stop-color="#179117"/><stop offset="0.225" stop-color="#179e17"/><stop offset="0.268" stop-color="#17a917"/><stop offset="0.312" stop-color="#19b419"/><stop offset="0.356" stop-color="#32d432"/><stop offset="0.382" stop-color="#8fff8f"/><stop offset="0.936" stop-color="#8fff8f"/><stop offset="0.981" stop-color="#17b817"/><stop offset="1.000" stop-color="#178e17"/></linearGradient>
<linearGradient id="b54" gradientUnits="userSpaceOnUse" x1="507.7" y1="577.3" x2="619.3" y2="620.7"><stop offset="0.000" stop-color="#174017"/><stop offset="0.003" stop-color="#174317"/><stop offset="0.013" stop-color="#174c17"/><stop offset="0.028" stop-color="#175517"/><stop offset="0.050" stop-color="#175d17"/><stop offset="0.076" stop-color="#176517"/><stop offset="0.108" stop-color="#177517"/><stop offset="0.144" stop-color="#178517"/><stop offset="0.183" stop-color="#179317"/><stop offset="0.224" stop-color="#179f17"/><stop offset="0.267" stop-color="#17aa17"/><stop offset="0.311" stop-color="#19b419"/><stop offset="0.355" stop-color="#30d130"/><stop offset="0.381" stop-color="#83ff83"/><stop offset="0.935" stop-color="#83ff83"/><stop offset="0.981" stop-color="#17ac17"/><stop offset="1.000" stop-color="#178317"/></linearGradient>
<linearGradient id="b55" gradientUnits="userSpaceOnUse" x1="506.7" y1="579.6" x2="616.0" y2="627.7"><stop offset="0.000" stop-color="#174017"/><stop offset="0.003" stop-color="#174917"/><stop offset="0.013" stop-color="#175217"/><stop offset="0.028" stop-color="#175a17"/><stop offset="0.050" stop-color="#176217"/><stop offset="0.076" stop-color="#176917"/><stop offset="0.108" stop-color="#177917"/><stop offset="0.143" stop-color="#178817"/><stop offset="0.182" stop-color="#179617"/><stop offset="0.223" stop-color="#17a117"/><stop offset="0.266" stop-color="#17ab17"/><stop offset="0.310" stop-color="#19b419"/><stop offset="0.354" stop-color="#2ece2e"/><stop offset="0.379" stop-color="#75ff75"/><stop offset="0.935" stop-color="#75ff75"/><stop offset="0.981" stop-color="#17ab17"/><stop offset="1.000" stop-color="#177f17"/></linearGradient>
<linearGradient id="b56" gradientUnits="userSpaceOnUse" x1="505.6" y1="582.0" x2="612.4" y2="634.6"><stop offset="0.000" stop-color="#174617"/><stop offset="0.003" stop-color="#174f17"/><stop offset="0.013" stop-color="#175817"/><stop offset="0.028" stop-color="#176017"/><stop offset="0.049" stop-color="#176717"/><stop offset="0.076" stop-color="#176e17"/><stop offset="0.107" stop-color="#177e17"/><stop offset="0.143" stop-color="#178c17"/><stop offset="0.181" stop-color="#179817"/><stop offset="0.223" stop-color="#17a317"/><stop offset="0.265" stop-color="#17ac17"/><stop offset="0.309" stop-color="#19b319"/><stop offset="0.352" stop-color="#2cca2c"/><stop offset="0.378" stop-color="#69ff69"/><stop offset="0.935" stop-color="#69ff69"/><stop offset="0.981" stop-color="#17a117"/><stop offset="1.000" stop-color="#177517"/></linearGradient>
<linearGradient id="b57" gradientUnits="userSpaceOnUse" x1="504.5" y1="584.2" x2="608.6" y2="641.4"><stop offset="0.000" stop-color="#174b17"/><stop offset="0.003" stop-color="#175417"/><stop offset="0.013" stop-color="#175d17"/><stop offset="0.028" stop-color="#176517"/><stop offset="0.049" stop-color="#176c17"/><stop offset="0.076" stop-color="#177317"/><stop offset="0.107" stop-color="#178217"/><stop offset="0.142" stop-color="#178f17"/><stop offset="0.181" stop-color="#179b17"/><stop offset="0.222" stop-color="#17a517"/><stop offset="0.264" stop-color="#17ac17"/><stop offset="0.308" stop-color="#19b319"/><stop offset="0.351" stop-color="#2ac72a"/><stop offset="0.377" stop-color="#5efd5e"/><stop offset="0.935" stop-color="#5efd5e"/><stop offset="0.981" stop-color="#17a217"/><stop offset="1.000" stop-color="#177417"/></linearGradient>
<linearGradient id="b58" gradientUnits="userSpaceOnUse" x1="503.2" y1="586.4" x2="604.5" y2="647.9"><stop offset="0.000" stop-color="#175217"/><stop offset="0.003" stop-color="#175a17"/><stop offset="0.012" stop-color="#176317"/><stop offset="0.028" stop-color="#176a17"/><stop offset="0.049" stop-color="#177117"/><stop offset="0.075" stop-color="#177917"/><stop offset="0.106" stop-color="#178717"/><stop offset="0.141" stop-color="#179317"/><stop offset="0.179" stop-color="#179e17"/><stop offset="0.220" stop-color="#17a717"/><stop offset="0.263" stop-color="#17ad17"/><stop offset="0.306" stop-color="#19b319"/><stop offset="0.349" stop-color="#28c428"/><stop offset="0.375" stop-color="#52f052"/><stop offset="0.935" stop-color="#52f052"/><stop offset="0.980" stop-color="#179d17"/><stop offset="1.000" stop-color="#177417"/></linearGradient>
<linearGradient id="b59" gradientUnits="userSpaceOnUse" x1="501.8" y1="588.6" x2="600.0" y2="654.2"><stop offset="0.000" stop-color="#175717"/><stop offset="0.003" stop-color="#176017"/><stop offset="0.012" stop-color="#176817"/><stop offset="0.027" stop-color="#177017"/><stop offset="0.048" stop-color="#177617"/><stop offset="0.074" stop-color="#177e17"/><stop offset="0.105" stop-color="#178b17"/><stop offset="0.140" stop-color="#179717"/><stop offset="0.179" stop-color="#17a117"/><stop offset="0.220" stop-color="#17a817"/><stop offset="0.263" stop-color="#17ae17"/><stop offset="0.307" stop-color="#18b318"/><stop offset="0.350" stop-color="#26c126"/><stop offset="0.376" stop-color="#49e149"/><stop offset="0.935" stop-color="#49e149"/><stop offset="0.981" stop-color="#179617"/><stop offset="1.000" stop-color="#177117"/></linearGradient>
<linearGradient id="b60" gradientUnits="userSpaceOnUse" x1="500.3" y1="590.7" x2="595.0" y2="660.1"><stop offset="0.000" stop-color="#175d17"/><stop offset="0.003" stop-color="#176617"/><stop offset="0.012" stop-color="#176e17"/><stop offset="0.027" stop-color="#177517"/><stop offset="0.048" stop-color="#177b17"/><stop offset="0.074" stop-color="#178417"/><stop offset="0.105" stop-color="#179017"/><stop offset="0.141" stop-color="#179b17"/><stop offset="0.180" stop-color="#17a417"/><stop offset="0.222" stop-color="#17aa17"/><stop offset="0.265" stop-color="#17af17"/><stop offset="0.309" stop-color="#18b218"/><stop offset="0.354" stop-color="#24be24"/><stop offset="0.380" stop-color="#40d940"/><stop offset="0.935" stop-color="#40d940"/><stop offset="0.981" stop-color="#179317"/><stop offset="1.000" stop-color="#177217"/></linearGradient>
<linearGradient id="b61" gradientUnits="userSpaceOnUse" x1="498.8" y1="592.7" x2="589.5" y2="665.6"><stop offset="0.000" stop-color="#176317"/><stop offset="0.003" stop-color="#176c17"/><stop offset="0.012" stop-color="#177417"/><stop offset="0.027" stop-color="#177a17"/><stop offset="0.048" stop-color="#178017"/><stop offset="0.074" stop-color="#178917"/><stop offset="0.106" stop-color="#179517"/><stop offset="0.142" stop-color="#179f17"/><stop offset="0.181" stop-color="#17a617"/><stop offset="0.224" stop-color="#17ac17"/><stop offset="0.268" stop-color="#17b017"/><stop offset="0.313" stop-color="#18b218"/><stop offset="0.358" stop-color="#22bb22"/><stop offset="0.384" stop-color="#38c938"/><stop offset="0.936" stop-color="#38c938"/><stop offset="0.981" stop-color="#178917"/><stop offset="1.000" stop-color="#176d17"/></linearGradient>
<linearGradient id="b62" gradientUnits="userSpaceOnUse" x1="497.1" y1="594.7" x2="584.1" y2="670.9"><stop offset="0.000" stop-color="#176917"/><stop offset="0.003" stop-color="#177217"/><stop offset="0.012" stop-color="#177917"/><stop offset="0.027" stop-color="#178017"/><stop offset="0.048" stop-color="#178517"/><stop offset="0.074" stop-color="#178e17"/><stop offset="0.106" stop-color="#179917"/><stop offset="0.142" stop-color="#17a217"/><stop offset="0.182" stop-color="#17a917"/><stop offset="0.225" stop-color="#17ae17"/><stop offset="0.270" stop-color="#17b117"/><stop offset="0.316" stop-color="#18b218"/><stop offset="0.362" stop-color="#21b821"/><stop offset="0.387" stop-color="#32c332"/><stop offset="0.936" stop-color="#32c332"/><stop offset="0.981" stop-color="#178617"/><stop offset="1.000" stop-color="#176e17"/></linearGradient>
<linearGradient id="b63" gradientUnits="userSpaceOnUse" x1="495.4" y1="596.6" x2="578.6" y2="676.2"><stop offset="0.000" stop-color="#176f17"/><stop offset="0.003" stop-color="#177717"/><stop offset="0.011" stop-color="#177f17"/><stop offset="0.026" stop-color="#178517"/><stop offset="0.047" stop-color="#178917"/><stop offset="0.074" stop-color="#179417"/><stop offset="0.106" stop-color="#179e17"/><stop offset="0.142" stop-color="#17a617"/><stop offset="0.183" stop-color="#17ac17"/><stop offset="0.226" stop-color="#17b017"/><stop offset="0.271" stop-color="#17b117"/><stop offset="0.318" stop-color="#18b218"/><stop offset="0.364" stop-color="#20b520"/><stop offset="0.390" stop-color="#2cba2c"/><stop offset="0.936" stop-color="#2cba2c"/><stop offset="0.981" stop-color="#178017"/><stop offset="1.000" stop-color="#176b17"/></linearGradient>
<linearGradient id="b64" gradientUnits="userSpaceOnUse" x1="493.7" y1="598.5" x2="572.9" y2="681.3"><stop offset="0.000" stop-color="#177417"/><stop offset="0.003" stop-color="#177d17"/><stop offset="0.011" stop-color="#178417"/><stop offset="0.026" stop-color="#178a17"/><stop offset="0.047" stop-color="#178e17"/><stop offset="0.073" stop-color="#179917"/><stop offset="0.105" stop-color="#17a317"/><stop offset="0.142" stop-color="#17aa17"/><stop offset="0.183" stop-color="#17af17"/><stop offset="0.226" stop-color="#17b217"/><stop offset="0.272" stop-color="#17b217"/><stop offset="0.319" stop-color="#18b118"/><stop offset="0.366" stop-color="#1eb31e"/><stop offset="0.392" stop-color="#28b328"/><stop offset="0.937" stop-color="#28b328"/><stop offset="0.981" stop-color="#177a17"/><stop offset="1.000" stop-color="#176a17"/></linearGradient>
<linearGradient id="b65" gradientUnits="userSpaceOnUse" x1="491.9" y1="600.4" x2="567.0" y2="686.0"><stop offset="0.000" stop-color="#177917"/><stop offset="0.003" stop-color="#178217"/><stop offset="0.011" stop-color="#178917"/><stop offset="0.026" stop-color="#178e17"/><stop offset="0.046" stop-color="#179317"/><stop offset="0.073" stop-color="#179e17"/><stop offset="0.105" stop-color="#17a717"/><stop offset="0.142" stop-color="#17ad17"/><stop offset="0.183" stop-color="#17b217"/><stop offset="0.227" stop-color="#17b417"/><stop offset="0.273" stop-color="#17b317"/><stop offset="0.320" stop-color="#18b118"/><stop offset="0.368" stop-color="#1db11d"/><stop offset="0.393" stop-color="#24ac24"/><stop offset="0.937" stop-color="#24ac24"/><stop offset="0.981" stop-color="#177817"/><stop offset="1.000" stop-color="#176817"/></linearGradient>
<linearGradient id="b66" gradientUnits="userSpaceOnUse" x1="490.1" y1="602.2" x2="560.9" y2="690.5"><stop offset="0.000" stop-color="#177e17"/><stop offset="0.002" stop-color="#178617"/><stop offset="0.011" stop-color="#178d17"/><stop offset="0.025" stop-color="#179217"/><stop offset="0.046" stop-color="#179817"/><stop offset="0.073" stop-color="#17a217"/><stop offset="0.105" stop-color="#17aa17"/><stop offset="0.142" stop-color="#17b017"/><stop offset="0.183" stop-color="#17b417"/><stop offset="0.227" stop-color="#17b517"/><stop offset="0.274" stop-color="#17b417"/><stop offset="0.322" stop-color="#18b118"/><stop offset="0.370" stop-color="#1daf1d"/><stop offset="0.395" stop-color="#22ab22"/><stop offset="0.937" stop-color="#22ab22"/><stop offset="0.981" stop-color="#177a17"/><stop offset="1.000" stop-color="#176917"/></linearGradient>
<linearGradient id="b67" gradientUnits="userSpaceOnUse" x1="488.2" y1="604.0" x2="554.7" y2="694.7"><stop offset="0.000" stop-color="#178217"/><stop offset="0.002" stop-color="#178a17"/><stop offset="0.011" stop-color="#179117"/><stop offset="0.025" stop-color="#179617"/><stop offset="0.046" stop-color="#179d17"/><stop offset="0.072" stop-color="#17a717"/><stop offset="0.104" stop-color="#17ae17"/><stop offset="0.142" stop-color="#17b317"/><stop offset="0.183" stop-color="#17b617"/><stop offset="0.228" stop-color="#17b617"/><stop offset="0.275" stop-color="#17b417"/><stop offset="0.323" stop-color="#18b118"/><stop offset="0.372" stop-color="#1cad1c"/><stop offset="0.397" stop-color="#20a820"/><stop offset="0.937" stop-color="#20a820"/><stop offset="0.981" stop-color="#177a17"/><stop offset="1.000" stop-color="#176817"/></linearGradient>
<linearGradient id="b68" gradientUnits="userSpaceOnUse" x1="486.2" y1="605.6" x2="548.2" y2="698.5"><stop offset="0.000" stop-color="#178717"/><stop offset="0.002" stop-color="#178f17"/><stop offset="0.010" stop-color="#179617"/><stop offset="0.025" stop-color="#179a17"/><stop offset="0.045" stop-color="#17a217"/><stop offset="0.072" stop-color="#17ab17"/><stop offset="0.104" stop-color="#17b217"/><stop offset="0.141" stop-color="#17b717"/><stop offset="0.183" stop-color="#17b917"/><stop offset="0.228" stop-color="#17b817"/><stop offset="0.276" stop-color="#17b517"/><stop offset="0.325" stop-color="#18b118"/><stop offset="0.374" stop-color="#1bac1b"/><stop offset="0.399" stop-color="#1e9f1e"/><stop offset="0.937" stop-color="#1e9f1e"/><stop offset="0.981" stop-color="#177517"/><stop offset="1.000" stop-color="#176317"/></linearGradient>
<linearGradient id="b69" gradientUnits="userSpaceOnUse" x1="484.1" y1="607.2" x2="541.7" y2="702.2"><stop offset="0.000" stop-color="#178c17"/><stop offset="0.002" stop-color="#179417"/><stop offset="0.010" stop-color="#179a17"/><stop offset="0.024" stop-color="#179f17"/><stop offset="0.045" stop-color="#17a817"/><stop offset="0.071" stop-color="#17b017"/><stop offset="0.104" stop-color="#17b717"/><stop offset="0.141" stop-color="#17ba17"/><stop offset="0.183" stop-color="#17bb17"/><stop offset="0.229" stop-color="#17ba17"/><stop offset="0.277" stop-color="#17b617"/><stop offset="0.326" stop-color="#18b018"/><stop offset="0.376" stop-color="#1aaa1a"/><stop offset="0.401" stop-color="#1c9c1c"/><stop offset="0.938" stop-color="#1c9c1c"/><stop offset="0.981" stop-color="#177517"/><stop offset="1.000" stop-color="#176317"/></linearGradient>
<linearGradient id="b70" gradientUnits="userSpaceOnUse" x1="481.9" y1="608.7" x2="535.2" y2="705.8"><stop offset="0.000" stop-color="#179117"/><stop offset="0.002" stop-color="#179917"/><stop offset="0.010" stop-color="#179f17"/><stop offset="0.024" stop-color="#17a317"/><stop offset="0.044" stop-color="#17ae17"/><stop offset="0.071" stop-color="#17b617"/><stop offset="0.103" stop-color="#17bb17"/><stop offset="0.141" stop-color="#17be17"/><stop offset="0.183" stop-color="#17be17"/><stop offset="0.229" stop-color="#17bc17"/><stop offset="0.277" stop-color="#17b717"/><stop offset="0.327" stop-color="#18b018"/><stop offset="0.377" stop-color="#1aa81a"/><stop offset="0.402" stop-color="#1b931b"/><stop offset="0.938" stop-color="#1b931b"/><stop offset="0.981" stop-color="#176f17"/><stop offset="1.000" stop-color="#175d17"/></linearGradient>
<linearGradient id="b71" gradientUnits="userSpaceOnUse" x1="479.7" y1="610.1" x2="528.5" y2="709.1"><stop offset="0.000" stop-color="#179517"/><stop offset="0.002" stop-color="#179e17"/><stop offset="0.010" stop-color="#17a417"/><stop offset="0.024" stop-color="#17a917"/><stop offset="0.044" stop-color="#17b317"/><stop offset="0.070" stop-color="#17bb17"/><stop offset="0.102" stop-color="#17bf17"/><stop offset="0.140" stop-color="#17c117"/><stop offset="0.182" stop-color="#17c117"/><stop offset="0.228" stop-color="#17bd17"/><stop offset="0.277" stop-color="#17b717"/><stop offset="0.328" stop-color="#18b018"/><stop offset="0.378" stop-color="#19a619"/><stop offset="0.403" stop-color="#1a951a"/><stop offset="0.938" stop-color="#1a951a"/><stop offset="0.981" stop-color="#177217"/><stop offset="1.000" stop-color="#175f17"/></linearGradient>
<linearGradient id="b72" gradientUnits="userSpaceOnUse" x1="477.4" y1="611.4" x2="521.7" y2="712.1"><stop offset="0.000" stop-color="#179a17"/><stop offset="0.002" stop-color="#17a217"/><stop offset="0.010" stop-color="#17a817"/><stop offset="0.023" stop-color="#17af17"/><stop offset="0.043" stop-color="#17b917"/><stop offset="0.070" stop-color="#17bf17"/><stop offset="0.102" stop-color="#17c317"/><stop offset="0.140" stop-color="#17c517"/><stop offset="0.182" stop-color="#17c317"/><stop offset="0.228" stop-color="#17bf17"/><stop offset="0.277" stop-color="#17b817"/><stop offset="0.328" stop-color="#18b018"/><stop offset="0.379" stop-color="#19a519"/><stop offset="0.404" stop-color="#199219"/><stop offset="0.938" stop-color="#199219"/><stop offset="0.981" stop-color="#177017"/><stop offset="1.000" stop-color="#175d17"/></linearGradient>
<linearGradient id="b73" gradientUnits="userSpaceOnUse" x1="475.0" y1="612.6" x2="514.7" y2="714.8"><stop offset="0.000" stop-color="#179e17"/><stop offset="0.002" stop-color="#17a617"/><stop offset="0.009" stop-color="#17ac17"/><stop offset="0.023" stop-color="#17b517"/><stop offset="0.043" stop-color="#17be17"/><stop offset="0.069" stop-color="#17c417"/><stop offset="0.101" stop-color="#17c717"/><stop offset="0.139" stop-color="#17c817"/><stop offset="0.182" stop-color="#17c617"/><stop offset="0.228" stop-color="#17c117"/><stop offset="0.278" stop-color="#17b917"/><stop offset="0.329" stop-color="#18af18"/><stop offset="0.380" stop-color="#19a319"/><stop offset="0.405" stop-color="#199219"/><stop offset="0.938" stop-color="#199219"/><stop offset="0.981" stop-color="#177117"/><stop offset="1.000" stop-color="#175d17"/></linearGradient>
<linearGradient id="b74" gradientUnits="userSpaceOnUse" x1="472.6" y1="613.7" x2="507.7" y2="717.1"><stop offset="0.000" stop-color="#17a217"/><stop offset="0.002" stop-color="#17aa17"/><stop offset="0.009" stop-color="#17b017"/><stop offset="0.022" stop-color="#17ba17"/><stop offset="0.042" stop-color="#17c317"/><stop offset="0.068" stop-color="#17c917"/><stop offset="0.101" stop-color="#17cb17"/><stop offset="0.139" stop-color="#17cb17"/><stop offset="0.181" stop-color="#17c817"/><stop offset="0.228" stop-color="#17c217"/><stop offset="0.278" stop-color="#17ba17"/><stop offset="0.330" stop-color="#18af18"/><stop offset="0.382" stop-color="#18a218"/><stop offset="0.407" stop-color="#188d18"/><stop offset="0.938" stop-color="#188d18"/><stop offset="0.981" stop-color="#176f17"/><stop offset="1.000" stop-color="#175a17"/></linearGradient>
<linearGradient id="b75" gradientUnits="userSpaceOnUse" x1="470.1" y1="614.6" x2="500.5" y2="719.0"><stop offset="0.000" stop-color="#17a717"/><stop offset="0.002" stop-color="#17af17"/><stop offset="0.009" stop-color="#17b517"/><stop offset="0.022" stop-color="#17c017"/><stop offset="0.042" stop-color="#17c817"/><stop offset="0.068" stop-color="#17cd17"/><stop offset="0.100" stop-color="#17d017"/><stop offset="0.138" stop-color="#17cf17"/><stop offset="0.182" stop-color="#17cb17"/><stop offset="0.229" stop-color="#17c417"/><stop offset="0.279" stop-color="#17ba17"/><stop offset="0.331" stop-color="#18af18"/><stop offset="0.384" stop-color="#18a118"/><stop offset="0.409" stop-color="#188618"/><stop offset="0.938" stop-color="#188618"/><stop offset="0.982" stop-color="#176917"/><stop offset="1.000" stop-color="#175517"/></linearGradient>
<linearGradient id="b76" gradientUnits="userSpaceOnUse" x1="467.5" y1="615.4" x2="493.3" y2="720.7"><stop offset="0.000" stop-color="#17ab17"/><stop offset="0.002" stop-color="#17b317"/><stop offset="0.009" stop-color="#17bc17"/><stop offset="0.022" stop-color="#17c617"/><stop offset="0.042" stop-color="#17ce17"/><stop offset="0.068" stop-color="#17d217"/><stop offset="0.100" stop-color="#17d417"/><stop offset="0.138" stop-color="#18d318"/><stop offset="0.182" stop-color="#18ce18"/><stop offset="0.229" stop-color="#17c617"/><stop offset="0.280" stop-color="#17bb17"/><stop offset="0.333" stop-color="#18af18"/><stop offset="0.386" stop-color="#189f18"/><stop offset="0.411" stop-color="#188418"/><stop offset="0.939" stop-color="#188418"/><stop offset="0.982" stop-color="#176817"/><stop offset="1.000" stop-color="#175317"/></linearGradient>
<linearGradient id="b77" gradientUnits="userSpaceOnUse" x1="464.9" y1="616.0" x2="486.0" y2="722.1"><stop offset="0.000" stop-color="#17af17"/><stop offset="0.002" stop-color="#17b717"/><stop offset="0.009" stop-color="#17c217"/><stop offset="0.022" stop-color="#17cc17"/><stop offset="0.041" stop-color="#17d317"/><stop offset="0.067" stop-color="#17d717"/><stop offset="0.100" stop-color="#17d817"/><stop offset="0.138" stop-color="#18d618"/><stop offset="0.182" stop-color="#18d118"/><stop offset="0.230" stop-color="#17c717"/><stop offset="0.281" stop-color="#17bc17"/><stop offset="0.334" stop-color="#18af18"/><stop offset="0.388" stop-color="#189e18"/><stop offset="0.413" stop-color="#178417"/><stop offset="0.939" stop-color="#178417"/><stop offset="0.982" stop-color="#176817"/><stop offset="1.000" stop-color="#175317"/></linearGradient>
<linearGradient id="b78" gradientUnits="userSpaceOnUse" x1="462.3" y1="616.5" x2="478.7" y2="723.3"><stop offset="0.000" stop-color="#17b317"/><stop offset="0.002" stop-color="#17bb17"/><stop offset="0.008" stop-color="#17c717"/><stop offset="0.021" stop-color="#17d117"/><stop offset="0.041" stop-color="#17d817"/><stop offset="0.067" stop-color="#17db17"/><stop offset="0.099" stop-color="#17dc17"/><stop offset="0.138" stop-color="#19da19"/><stop offset="0.182" stop-color="#19d419"/><stop offset="0.230" stop-color="#17c917"/><stop offset="0.281" stop-color="#17bd17"/><stop offset="0.335" stop-color="#18ae18"/><stop offset="0.390" stop-color="#189d18"/><stop offset="0.414" stop-color="#177d17"/><stop offset="0.939" stop-color="#177d17"/><stop offset="0.982" stop-color="#176317"/><stop offset="1.000" stop-color="#174d17"/></linearGradient>
<linearGradient id="b79" gradientUnits="userSpaceOnUse" x1="459.7" y1="617.0" x2="471.4" y2="724.1"><stop offset="0.000" stop-color="#17b617"/><stop offset="0.002" stop-color="#17c017"/><stop offset="0.008" stop-color="#17cd17"/><stop offset="0.021" stop-color="#17d617"/><stop offset="0.040" stop-color="#17dc17"/><stop offset="0.066" stop-color="#17df17"/><stop offset="0.099" stop-color="#18e018"/><stop offset="0.137" stop-color="#1adf1a"/><stop offset="0.181" stop-color="#1ad71a"/><stop offset="0.230" stop-color="#17cb17"/><stop offset="0.282" stop-color="#17bd17"/><stop offset="0.336" stop-color="#18ae18"/><stop offset="0.391" stop-color="#179c17"/><stop offset="0.416" stop-color="#177e17"/><stop offset="0.939" stop-color="#177e17"/><stop offset="0.982" stop-color="#176417"/><stop offset="1.000" stop-color="#174d17"/></linearGradient>
<linearGradient id="b80" gradientUnits="userSpaceOnUse" x1="457.0" y1="617.3" x2="464.1" y2="724.7"><stop offset="0.000" stop-color="#17b917"/><stop offset="0.002" stop-color="#17c517"/><stop offset="0.008" stop-color="#17d217"/><stop offset="0.021" stop-color="#17db17"/><stop offset="0.040" stop-color="#17e117"/><stop offset="0.066" stop-color="#17e317"/><stop offset="0.098" stop-color="#19e419"/><stop offset="0.137" stop-color="#1ce31c"/><stop offset="0.181" stop-color="#1bda1b"/><stop offset="0.230" stop-color="#18cc18"/><stop offset="0.283" stop-color="#17be17"/><stop offset="0.337" stop-color="#18ae18"/><stop offset="0.393" stop-color="#179b17"/><stop offset="0.417" stop-color="#177a17"/><stop offset="0.939" stop-color="#177a17"/><stop offset="0.982" stop-color="#176017"/><stop offset="1.000" stop-color="#174a17"/></linearGradient>
<linearGradient id="b81" gradientUnits="userSpaceOnUse" x1="454.3" y1="617.4" x2="456.7" y2="724.8"><stop offset="0.000" stop-color="#17bc17"/><stop offset="0.002" stop-color="#17ca17"/><stop offset="0.008" stop-color="#17d617"/><stop offset="0.020" stop-color="#17df17"/><stop offset="0.040" stop-color="#17e517"/><stop offset="0.065" stop-color="#17e717"/><stop offset="0.098" stop-color="#1ae81a"/><stop offset="0.137" stop-color="#1fe91f"/><stop offset="0.181" stop-color="#1cdd1c"/><stop offset="0.231" stop-color="#18ce18"/><stop offset="0.283" stop-color="#17bf17"/><stop offset="0.339" stop-color="#18ae18"/><stop offset="0.395" stop-color="#179a17"/><stop offset="0.419" stop-color="#177817"/><stop offset="0.940" stop-color="#177817"/><stop offset="0.982" stop-color="#175e17"/><stop offset="1.000" stop-color="#174717"/></linearGradient>
<linearGradient id="b82" gradientUnits="userSpaceOnUse" x1="451.7" y1="617.5" x2="449.3" y2="724.6"><stop offset="0.000" stop-color="#17c017"/><stop offset="0.002" stop-color="#17cf17"/><stop offset="0.008" stop-color="#17db17"/><stop offset="0.020" stop-color="#17e417"/><stop offset="0.039" stop-color="#17e917"/><stop offset="0.066" stop-color="#17eb17"/><stop offset="0.098" stop-color="#1bed1b"/><stop offset="0.138" stop-color="#23ef23"/><stop offset="0.183" stop-color="#1ee11e"/><stop offset="0.233" stop-color="#18cf18"/><stop offset="0.286" stop-color="#18bf18"/><stop offset="0.342" stop-color="#18ae18"/><stop offset="0.400" stop-color="#179917"/><stop offset="0.424" stop-color="#177517"/><stop offset="0.940" stop-color="#177517"/><stop offset="0.982" stop-color="#175d17"/><stop offset="1.000" stop-color="#174517"/></linearGradient>
<linearGradient id="b83" gradientUnits="userSpaceOnUse" x1="449.0" y1="617.5" x2="442.0" y2="724.0"><stop offset="0.000" stop-color="#17c517"/><stop offset="0.002" stop-color="#17d417"/><stop offset="0.008" stop-color="#17e017"/><stop offset="0.020" stop-color="#17e817"/><stop offset="0.040" stop-color="#17ed17"/><stop offset="0.066" stop-color="#18ef18"/><stop offset="0.099" stop-color="#1ef31e"/><stop offset="0.139" stop-color="#28f628"/><stop offset="0.185" stop-color="#20e520"/><stop offset="0.236" stop-color="#18d018"/><stop offset="0.291" stop-color="#18c018"/><stop offset="0.348" stop-color="#18ae18"/><stop offset="0.407" stop-color="#179817"/><stop offset="0.431" stop-color="#177917"/><stop offset="0.941" stop-color="#177917"/><stop offset="0.982" stop-color="#175f17"/><stop offset="1.000" stop-color="#174617"/></linearGradient>
<linearGradient id="b84" gradientUnits="userSpaceOnUse" x1="446.3" y1="617.4" x2="434.7" y2="723.1"><stop offset="0.000" stop-color="#17c917"/><stop offset="0.001" stop-color="#17d817"/><stop offset="0.008" stop-color="#17e417"/><stop offset="0.020" stop-color="#17ec17"/><stop offset="0.040" stop-color="#17f117"/><stop offset="0.066" stop-color="#18f218"/><stop offset="0.100" stop-color="#21f921"/><stop offset="0.141" stop-color="#2eff2e"/><stop offset="0.187" stop-color="#22e922"/><stop offset="0.239" stop-color="#18d218"/><stop offset="0.295" stop-color="#18c118"/><stop offset="0.354" stop-color="#18ad18"/><stop offset="0.414" stop-color="#179717"/><stop offset="0.437" stop-color="#177217"/><stop offset="0.941" stop-color="#177217"/><stop offset="0.982" stop-color="#175a17"/><stop offset="1.000" stop-color="#174117"/></linearGradient>
<linearGradient id="b85" gradientUnits="userSpaceOnUse" x1="443.6" y1="617.3" x2="427.5" y2="721.9"><stop offset="0.000" stop-color="#17cd17"/><stop offset="0.001" stop-color="#17dc17"/><stop offset="0.008" stop-color="#17e817"/><stop offset="0.020" stop-color="#17f017"/><stop offset="0.040" stop-color="#17f417"/><stop offset="0.067" stop-color="#18f618"/><stop offset="0.101" stop-color="#26ff26"/><stop offset="0.142" stop-color="#35ff35"/><stop offset="0.190" stop-color="#25ee25"/><stop offset="0.242" stop-color="#19d319"/><stop offset="0.300" stop-color="#18c118"/><stop offset="0.360" stop-color="#18ad18"/><stop offset="0.421" stop-color="#179717"/><stop offset="0.444" stop-color="#177217"/><stop offset="0.942" stop-color="#177217"/><stop offset="0.983" stop-color="#175917"/><stop offset="1.000" stop-color="#174017"/></linearGradient>
<linearGradient id="b86" gradientUnits="userSpaceOnUse" x1="440.9" y1="617.0" x2="420.3" y2="720.4"><stop offset="0.000" stop-color="#17d117"/><stop offset="0.001" stop-color="#17e017"/><stop offset="0.008" stop-color="#17eb17"/><stop offset="0.020" stop-color="#17f317"/><stop offset="0.040" stop-color="#17f717"/><stop offset="0.067" stop-color="#19fa19"/><stop offset="0.102" stop-color="#2bff2b"/><stop offset="0.144" stop-color="#3dff3d"/><stop offset="0.192" stop-color="#28f228"/><stop offset="0.246" stop-color="#19d419"/><stop offset="0.304" stop-color="#18c218"/><stop offset="0.365" stop-color="#18ad18"/><stop offset="0.428" stop-color="#179617"/><stop offset="0.451" stop-color="#177117"/><stop offset="0.943" stop-color="#177117"/><stop offset="0.983" stop-color="#175817"/><stop offset="1.000" stop-color="#173f17"/></linearGradient>
<linearGradient id="b87" gradientUnits="userSpaceOnUse" x1="438.2" y1="616.6" x2="413.2" y2="718.5"><stop offset="0.000" stop-color="#17d517"/><stop offset="0.001" stop-color="#17e317"/><stop offset="0.008" stop-color="#17ef17"/><stop offset="0.020" stop-color="#17f617"/><stop offset="0.040" stop-color="#17fa17"/><stop offset="0.067" stop-color="#1afd1a"/><stop offset="0.103" stop-color="#30ff30"/><stop offset="0.145" stop-color="#46ff46"/><stop offset="0.194" stop-color="#2bf62b"/><stop offset="0.249" stop-color="#19d619"/><stop offset="0.309" stop-color="#18c218"/><stop offset="0.371" stop-color="#18ad18"/><stop offset="0.435" stop-color="#179517"/><stop offset="0.458" stop-color="#177317"/><stop offset="0.944" stop-color="#177317"/><stop offset="0.983" stop-color="#175917"/><stop offset="1.000" stop-color="#174117"/></linearGradient>
<linearGradient id="b88" gradientUnits="userSpaceOnUse" x1="435.5" y1="616.0" x2="406.3" y2="716.3"><stop offset="0.000" stop-color="#17d817"/><stop offset="0.001" stop-color="#17e717"/><stop offset="0.008" stop-color="#17f217"/><stop offset="0.020" stop-color="#17f917"/><stop offset="0.040" stop-color="#17fd17"/><stop offset="0.068" stop-color="#1bff1b"/><stop offset="0.103" stop-color="#36ff36"/><stop offset="0.147" stop-color="#4fff4f"/><stop offset="0.196" stop-color="#2efb2e"/><stop offset="0.252" stop-color="#1ad71a"/><stop offset="0.313" stop-color="#18c318"/><stop offset="0.377" stop-color="#18ad18"/><stop offset="0.443" stop-color="#179517"/><stop offset="0.465" stop-color="#176d17"/><stop offset="0.944" stop-color="#176d17"/><stop offset="0.983" stop-color="#175317"/><stop offset="1.000" stop-color="#173e17"/></linearGradient>
<linearGradient id="b89" gradientUnits="userSpaceOnUse" x1="432.8" y1="615.4" x2="399.4" y2="713.9"><stop offset="0.000" stop-color="#17db17"/><stop offset="0.001" stop-color="#17ea17"/><stop offset="0.007" stop-color="#17f517"/><stop offset="0.020" stop-color="#17fc17"/><stop offset="0.040" stop-color="#17ff17"/><stop offset="0.068" stop-color="#1cff1c"/><stop offset="0.104" stop-color="#3cff3c"/><stop offset="0.148" stop-color="#57ff57"/><stop offset="0.199" stop-color="#30fe30"/><stop offset="0.256" stop-color="#1ad81a"/><stop offset="0.317" stop-color="#19c419"/><stop offset="0.383" stop-color="#18ad18"/><stop offset="0.450" stop-color="#179417"/><stop offset="0.472" stop-color="#176e17"/><stop offset="0.945" stop-color="#176e17"/><stop offset="0.983" stop-color="#175317"/><stop offset="1.000" stop-color="#174017"/></linearGradient>
<linearGradient id="b90" gradientUnits="userSpaceOnUse" x1="430.2" y1="614.7" x2="392.7" y2="711.2"><stop offset="0.000" stop-color="#17de17"/><stop offset="0.001" stop-color="#17ed17"/><stop offset="0.007" stop-color="#17f817"/><stop offset="0.020" stop-color="#17ff17"/><stop offset="0.040" stop-color="#17ff17"/><stop offset="0.068" stop-color="#1cff1c"/><stop offset="0.105" stop-color="#41ff41"/><stop offset="0.149" stop-color="#5eff5e"/><stop offset="0.201" stop-color="#32ff32"/><stop offset="0.259" stop-color="#1ad91a"/><stop offset="0.322" stop-color="#19c419"/><stop offset="0.388" stop-color="#18ad18"/><stop offset="0.457" stop-color="#179417"/><stop offset="0.478" stop-color="#176e17"/><stop offset="0.946" stop-color="#176e17"/><stop offset="0.984" stop-color="#175217"/><stop offset="1.000" stop-color="#174017"/></linearGradient>
<linearGradient id="b91" gradientUnits="userSpaceOnUse" x1="427.5" y1="613.9" x2="386.1" y2="708.1"><stop offset="0.000" stop-color="#17e017"/><stop offset="0.001" stop-color="#17ef17"/><stop offset="0.007" stop-color="#17fa17"/><stop offset="0.020" stop-color="#17ff17"/><stop offset="0.040" stop-color="#17ff17"/><stop offset="0.069" stop-color="#1dff1d"/><stop offset="0.106" stop-color="#43ff43"/><stop offset="0.151" stop-color="#61ff61"/><stop offset="0.203" stop-color="#33ff33"/><stop offset="0.262" stop-color="#1bda1b"/><stop offset="0.326" stop-color="#19c519"/><stop offset="0.394" stop-color="#17ad17"/><stop offset="0.464" stop-color="#179317"/><stop offset="0.485" stop-color="#176f17"/><stop offset="0.946" stop-color="#176f17"/><stop offset="0.984" stop-color="#175217"/><stop offset="1.000" stop-color="#174117"/></linearGradient>
<linearGradient id="b92" gradientUnits="userSpaceOnUse" x1="424.9" y1="613.0" x2="379.7" y2="704.7"><stop offset="0.000" stop-color="#17e317"/><stop offset="0.001" stop-color="#17f117"/><stop offset="0.007" stop-color="#17fc17"/><stop offset="0.020" stop-color="#17ff17"/><stop offset="0.040" stop-color="#17ff17"/><stop offset="0.069" stop-color="#1dff1d"/><stop offset="0.106" stop-color="#44ff44"/><stop offset="0.152" stop-color="#62ff62"/><stop offset="0.205" stop-color="#34ff34"/><stop offset="0.265" stop-color="#1cdc1c"/><stop offset="0.331" stop-color="#19c519"/><stop offset="0.400" stop-color="#17ac17"/><stop offset="0.471" stop-color="#179317"/><stop offset="0.492" stop-color="#176e17"/><stop offset="0.947" stop-color="#176e17"/><stop offset="0.984" stop-color="#175017"/><stop offset="1.000" stop-color="#174117"/></linearGradient>
<linearGradient id="b93" gradientUnits="userSpaceOnUse" x1="422.3" y1="611.9" x2="373.5" y2="701.0"><stop offset="0.000" stop-color="#17e417"/><stop offset="0.001" stop-color="#17f317"/><stop offset="0.007" stop-color="#17fe17"/><stop offset="0.020" stop-color="#17ff17"/><stop offset="0.040" stop-color="#17ff17"/><stop offset="0.069" stop-color="#1dff1d"/><stop offset="0.107" stop-color="#42ff42"/><stop offset="0.154" stop-color="#60ff60"/><stop offset="0.208" stop-color="#33ff33"/><stop offset="0.269" stop-color="#1cdd1c"/><stop offset="0.336" stop-color="#1ac61a"/><stop offset="0.406" stop-color="#17ac17"/><stop offset="0.480" stop-color="#179217"/><stop offset="0.500" stop-color="#176d17"/><stop offset="0.948" stop-color="#176d17"/><stop offset="0.984" stop-color="#174f17"/><stop offset="1.000" stop-color="#174117"/></linearGradient>
<linearGradient id="b94" gradientUnits="userSpaceOnUse" x1="419.8" y1="610.7" x2="367.5" y2="696.9"><stop offset="0.000" stop-color="#17e617"/><stop offset="0.001" stop-color="#17f417"/><stop offset="0.007" stop-color="#17ff17"/><stop offset="0.020" stop-color="#17ff17"/><stop offset="0.041" stop-color="#17ff17"/><stop offset="0.070" stop-color="#1cff1c"/><stop offset="0.108" stop-color="#40ff40"/><stop offset="0.156" stop-color="#5bff5b"/><stop offset="0.211" stop-color="#32ff32"/><stop offset="0.273" stop-color="#1ddd1d"/><stop offset="0.341" stop-color="#1ac51a"/><stop offset="0.414" stop-color="#17ac17"/><stop offset="0.488" stop-color="#179117"/><stop offset="0.509" stop-color="#176817"/><stop offset="0.949" stop-color="#176817"/><stop offset="0.985" stop-color="#174b17"/><stop offset="1.000" stop-color="#173f17"/></linearGradient>
<linearGradient id="b95" gradientUnits="userSpaceOnUse" x1="417.3" y1="609.4" x2="361.8" y2="692.6"><stop offset="0.000" stop-color="#17e717"/><stop offset="0.001" stop-color="#17f517"/><stop offset="0.007" stop-color="#17ff17"/><stop offset="0.020" stop-color="#17ff17"/><stop offset="0.041" stop-color="#17ff17"/><stop offset="0.071" stop-color="#1cff1c"/><stop offset="0.110" stop-color="#3dff3d"/><stop offset="0.158" stop-color="#54ff54"/><stop offset="0.214" stop-color="#2fff2f"/><stop offset="0.278" stop-color="#1edd1e"/><stop offset="0.347" stop-color="#1ac41a"/><stop offset="0.421" stop-color="#17aa17"/><stop offset="0.497" stop-color="#178f17"/><stop offset="0.517" stop-color="#176717"/><stop offset="0.950" stop-color="#176717"/><stop offset="0.985" stop-color="#174a17"/><stop offset="1.000" stop-color="#173f17"/></linearGradient>
<linearGradient id="b96" gradientUnits="userSpaceOnUse" x1="414.9" y1="608.0" x2="356.2" y2="688.0"><stop offset="0.000" stop-color="#17e817"/><stop offset="0.001" stop-color="#17f617"/><stop offset="0.007" stop-color="#17ff17"/><stop offset="0.020" stop-color="#17ff17"/><stop offset="0.041" stop-color="#17ff17"/><stop offset="0.071" stop-color="#1bff1b"/><stop offset="0.111" stop-color="#38ff38"/><stop offset="0.160" stop-color="#4cff4c"/><stop offset="0.217" stop-color="#2cfd2c"/><stop offset="0.282" stop-color="#1fde1f"/><stop offset="0.353" stop-color="#1ac31a"/><stop offset="0.428" stop-color="#17a817"/><stop offset="0.505" stop-color="#178d17"/><stop offset="0.525" stop-color="#176517"/><stop offset="0.951" stop-color="#176517"/><stop offset="0.985" stop-color="#174817"/><stop offset="1.000" stop-color="#173f17"/></linearGradient>
<linearGradient id="b97" gradientUnits="userSpaceOnUse" x1="412.5" y1="606.5" x2="350.9" y2="683.3"><stop offset="0.000" stop-color="#17e817"/><stop offset="0.001" stop-color="#17f717"/><stop offset="0.007" stop-color="#17ff17"/><stop offset="0.020" stop-color="#17ff17"/><stop offset="0.041" stop-color="#17ff17"/><stop offset="0.072" stop-color="#1bff1b"/><stop offset="0.112" stop-color="#32ff32"/><stop offset="0.161" stop-color="#43ff43"/><stop offset="0.219" stop-color="#2afb2a"/><stop offset="0.285" stop-color="#20de20"/><stop offset="0.357" stop-color="#1ac21a"/><stop offset="0.433" stop-color="#17a617"/><stop offset="0.512" stop-color="#178b17"/><stop offset="0.532" stop-color="#176617"/><stop offset="0.951" stop-color="#176617"/><stop offset="0.985" stop-color="#174917"/><stop offset="1.000" stop-color="#174117"/></linearGradient>
<linearGradient id="b98" gradientUnits="userSpaceOnUse" x1="410.1" y1="604.9" x2="345.7" y2="678.3"><stop offset="0.000" stop-color="#17e817"/><stop offset="0.001" stop-color="#17f717"/><stop offset="0.007" stop-color="#17ff17"/><stop offset="0.020" stop-color="#17ff17"/><stop offset="0.041" stop-color="#17ff17"/><stop offset="0.072" stop-color="#1aff1a"/><stop offset="0.113" stop-color="#2dff2d"/><stop offset="0.163" stop-color="#3aff3a"/><stop offset="0.221" stop-color="#2af92a"/><stop offset="0.288" stop-color="#22df22"/><stop offset="0.361" stop-color="#1ac11a"/><stop offset="0.438" stop-color="#17a517"/><stop offset="0.518" stop-color="#178917"/><stop offset="0.538" stop-color="#176517"/><stop offset="0.952" stop-color="#176517"/><stop offset="0.986" stop-color="#174817"/><stop offset="1.000" stop-color="#174217"/></linearGradient>
<linearGradient id="b99" gradientUnits="userSpaceOnUse" x1="407.6" y1="603.4" x2="340.9" y2="673.2"><stop offset="0.000" stop-color="#17e817"/><stop offset="0.001" stop-color="#17f717"/><stop offset="0.007" stop-color="#17ff17"/><stop offset="0.020" stop-color="#17ff17"/><stop offset="0.041" stop-color="#17ff17"/><stop offset="0.072" stop-color="#19ff19"/><stop offset="0.113" stop-color="#28ff28"/><stop offset="0.164" stop-color="#33ff33"/><stop offset="0.223" stop-color="#2af92a"/><stop offset="0.291" stop-color="#24df24"/><stop offset="0.365" stop-color="#1abf1a"/><stop offset="0.443" stop-color="#17a317"/><stop offset="0.524" stop-color="#178717"/><stop offset="0.543" stop-color="#175e17"/><stop offset="0.952" stop-color="#175e17"/><stop offset="0.986" stop-color="#174317"/><stop offset="1.000" stop-color="#173e17"/></linearGradient>
<linearGradient id="b100" gradientUnits="userSpaceOnUse" x1="405.2" y1="601.7" x2="336.2" y2="667.8"><stop offset="0.000" stop-color="#17e717"/><stop offset="0.001" stop-color="#17f717"/><stop offset="0.007" stop-color="#17ff17"/><stop offset="0.020" stop-color="#17ff17"/><stop offset="0.041" stop-color="#17ff17"/><stop offset="0.072" stop-color="#18ff18"/><stop offset="0.114" stop-color="#23ff23"/><stop offset="0.165" stop-color="#2eff2e"/><stop offset="0.225" stop-color="#2dfb2d"/><stop offset="0.293" stop-color="#25e025"/><stop offset="0.368" stop-color="#1abd1a"/><stop offset="0.447" stop-color="#17a117"/><stop offset="0.529" stop-color="#178617"/><stop offset="0.548" stop-color="#175d17"/><stop offset="0.953" stop-color="#175d17"/><stop offset="0.986" stop-color="#174217"/><stop offset="1.000" stop-color="#173f17"/></linearGradient>
<linearGradient id="b101" gradientUnits="userSpaceOnUse" x1="402.9" y1="600.0" x2="331.8" y2="662.3"><stop offset="0.000" stop-color="#17e717"/><stop offset="0.001" stop-color="#17f617"/><stop offset="0.007" stop-color="#17ff17"/><stop offset="0.020" stop-color="#17ff17"/><stop offset="0.041" stop-color="#17ff17"/><stop offset="0.073" stop-color="#18ff18"/><stop offset="0.114" stop-color="#20ff20"/><stop offset="0.166" stop-color="#2aff2a"/><stop offset="0.227" stop-color="#30fd30"/><stop offset="0.296" stop-color="#27e027"/><stop offset="0.372" stop-color="#19bc19"/><stop offset="0.452" stop-color="#17a017"/><stop offset="0.535" stop-color="#178417"/><stop offset="0.553" stop-color="#175c17"/><stop offset="0.953" stop-color="#175c17"/><stop offset="0.986" stop-color="#174217"/><stop offset="1.000" stop-color="#173f17"/></linearGradient>
<linearGradient id="b102" gradientUnits="userSpaceOnUse" x1="400.6" y1="598.1" x2="327.9" y2="656.4"><stop offset="0.000" stop-color="#17e517"/><stop offset="0.001" stop-color="#17f517"/><stop offset="0.007" stop-color="#17ff17"/><stop offset="0.020" stop-color="#17ff17"/><stop offset="0.041" stop-color="#17ff17"/><stop offset="0.073" stop-color="#18ff18"/><stop offset="0.115" stop-color="#1dff1d"/><stop offset="0.167" stop-color="#29ff29"/><stop offset="0.229" stop-color="#36ff36"/><stop offset="0.299" stop-color="#29e129"/><stop offset="0.376" stop-color="#19ba19"/><stop offset="0.458" stop-color="#179e17"/><stop offset="0.541" stop-color="#178217"/><stop offset="0.560" stop-color="#175b17"/><stop offset="0.954" stop-color="#175b17"/><stop offset="0.986" stop-color="#174117"/><stop offset="1.000" stop-color="#173f17"/></linearGradient>
<linearGradient id="b103" gradientUnits="userSpaceOnUse" x1="398.4" y1="596.1" x2="324.3" y2="650.4"><stop offset="0.000" stop-color="#17e417"/><stop offset="0.001" stop-color="#17f317"/><stop offset="0.007" stop-color="#17fe17"/><stop offset="0.020" stop-color="#17ff17"/><stop offset="0.042" stop-color="#17ff17"/><stop offset="0.074" stop-color="#17ff17"/><stop offset="0.116" stop-color="#1cff1c"/><stop offset="0.169" stop-color="#2bff2b"/><stop offset="0.232" stop-color="#3dff3d"/><stop offset="0.304" stop-color="#2ae02a"/><stop offset="0.382" stop-color="#19b819"/><stop offset="0.465" stop-color="#179d17"/><stop offset="0.550" stop-color="#178117"/><stop offset="0.568" stop-color="#175b17"/><stop offset="0.955" stop-color="#175b17"/><stop offset="0.987" stop-color="#174117"/><stop offset="1.000" stop-color="#174017"/></linearGradient>
<linearGradient id="b104" gradientUnits="userSpaceOnUse" x1="396.2" y1="593.9" x2="321.1" y2="644.2"><stop offset="0.000" stop-color="#17e217"/><stop offset="0.001" stop-color="#17f217"/><stop offset="0.007" stop-color="#17fd17"/><stop offset="0.020" stop-color="#17ff17"/><stop offset="0.042" stop-color="#17ff17"/><stop offset="0.074" stop-color="#17ff17"/><stop offset="0.118" stop-color="#1bff1b"/><stop offset="0.172" stop-color="#2fff2f"/><stop offset="0.236" stop-color="#45ff45"/><stop offset="0.309" stop-color="#2be02b"/><stop offset="0.388" stop-color="#18b718"/><stop offset="0.473" stop-color="#179b17"/><stop offset="0.560" stop-color="#177f17"/><stop offset="0.577" stop-color="#175b17"/><stop offset="0.956" stop-color="#175b17"/><stop offset="0.987" stop-color="#174017"/><stop offset="1.000" stop-color="#174017"/></linearGradient>
<linearGradient id="b105" gradientUnits="userSpaceOnUse" x1="394.1" y1="591.7" x2="318.1" y2="637.9"><stop offset="0.000" stop-color="#17e017"/><stop offset="0.001" stop-color="#17f017"/><stop offset="0.007" stop-color="#17fb17"/><stop offset="0.020" stop-color="#17ff17"/><stop offset="0.042" stop-color="#17ff17"/><stop offset="0.075" stop-color="#17ff17"/><stop offset="0.119" stop-color="#1bfe1b"/><stop offset="0.174" stop-color="#35ff35"/><stop offset="0.240" stop-color="#4fff4f"/><stop offset="0.314" stop-color="#2bdf2b"/><stop offset="0.395" stop-color="#18b518"/><stop offset="0.481" stop-color="#179a17"/><stop offset="0.570" stop-color="#177e17"/><stop offset="0.587" stop-color="#175917"/><stop offset="0.957" stop-color="#175917"/><stop offset="0.987" stop-color="#173f17"/><stop offset="1.000" stop-color="#173f17"/></linearGradient>
<linearGradient id="b106" gradientUnits="userSpaceOnUse" x1="392.2" y1="589.4" x2="315.5" y2="631.5"><stop offset="0.000" stop-color="#17de17"/><stop offset="0.001" stop-color="#17ed17"/><stop offset="0.007" stop-color="#17f917"/><stop offset="0.020" stop-color="#17ff17"/><stop offset="0.043" stop-color="#17ff17"/><stop offset="0.076" stop-color="#17ff17"/><stop offset="0.121" stop-color="#1cfd1c"/><stop offset="0.177" stop-color="#3fff3f"/><stop offset="0.244" stop-color="#59ff59"/><stop offset="0.320" stop-color="#2bde2b"/><stop offset="0.403" stop-color="#18b418"/><stop offset="0.490" stop-color="#179917"/><stop offset="0.580" stop-color="#177d17"/><stop offset="0.597" stop-color="#175717"/><stop offset="0.958" stop-color="#175717"/><stop offset="0.987" stop-color="#173e17"/><stop offset="1.000" stop-color="#173e17"/></linearGradient>
<linearGradient id="b107" gradientUnits="userSpaceOnUse" x1="390.3" y1="586.9" x2="313.1" y2="625.0"><stop offset="0.000" stop-color="#17db17"/><stop offset="0.001" stop-color="#17ea17"/><stop offset="0.007" stop-color="#17f617"/><stop offset="0.021" stop-color="#17fd17"/><stop offset="0.044" stop-color="#17ff17"/><stop offset="0.078" stop-color="#17fd17"/><stop offset="0.124" stop-color="#1efd1e"/><stop offset="0.181" stop-color="#4cff4c"/><stop offset="0.249" stop-color="#64ff64"/><stop offset="0.326" stop-color="#2bdc2b"/><stop offset="0.410" stop-color="#18b218"/><stop offset="0.500" stop-color="#179817"/><stop offset="0.591" stop-color="#177c17"/><stop offset="0.607" stop-color="#175917"/><stop offset="0.959" stop-color="#175917"/><stop offset="0.988" stop-color="#173f17"/><stop offset="1.000" stop-color="#173f17"/></linearGradient>
<linearGradient id="b108" gradientUnits="userSpaceOnUse" x1="388.4" y1="584.4" x2="311.0" y2="618.5"><stop offset="0.000" stop-color="#17d817"/><stop offset="0.001" stop-color="#17e817"/><stop offset="0.007" stop-color="#17f317"/><stop offset="0.021" stop-color="#17fa17"/><stop offset="0.045" stop-color="#17fd17"/><stop offset="0.080" stop-color="#17fb17"/><stop offset="0.127" stop-color="#20fd20"/><stop offset="0.185" stop-color="#5bff5b"/><stop offset="0.254" stop-color="#6eff6e"/><stop offset="0.333" stop-color="#2ada2a"/><stop offset="0.418" stop-color="#18b118"/><stop offset="0.509" stop-color="#179717"/><stop offset="0.601" stop-color="#177b17"/><stop offset="0.617" stop-color="#175817"/><stop offset="0.960" stop-color="#175817"/><stop offset="0.988" stop-color="#173f17"/><stop offset="1.000" stop-color="#173f17"/></linearGradient>
<linearGradient id="b109" gradientUnits="userSpaceOnUse" x1="386.6" y1="581.8" x2="309.1" y2="612.0"><stop offset="0.000" stop-color="#17d517"/><stop offset="0.001" stop-color="#17e517"/><stop offset="0.007" stop-color="#17f117"/><stop offset="0.021" stop-color="#17f817"/><stop offset="0.046" stop-color="#17fb17"/><stop offset="0.081" stop-color="#17f917"/><stop offset="0.129" stop-color="#23ff23"/><stop offset="0.189" stop-color="#68ff68"/><stop offset="0.259" stop-color="#74ff74"/><stop offset="0.339" stop-color="#29d729"/><stop offset="0.426" stop-color="#17af17"/><stop offset="0.518" stop-color="#179517"/><stop offset="0.611" stop-color="#177a17"/><stop offset="0.627" stop-color="#175917"/><stop offset="0.961" stop-color="#175917"/><stop offset="0.988" stop-color="#174017"/><stop offset="1.000" stop-color="#174017"/></linearGradient>
<linearGradient id="b110" gradientUnits="userSpaceOnUse" x1="384.9" y1="579.1" x2="307.6" y2="605.4"><stop offset="0.000" stop-color="#17d317"/><stop offset="0.001" stop-color="#17e317"/><stop offset="0.007" stop-color="#17ef17"/><stop offset="0.022" stop-color="#17f617"/><stop offset="0.047" stop-color="#17f917"/><stop offset="0.083" stop-color="#17f817"/><stop offset="0.132" stop-color="#27ff27"/><stop offset="0.193" stop-color="#77ff77"/><stop offset="0.265" stop-color="#79ff79"/><stop offset="0.346" stop-color="#28d428"/><stop offset="0.435" stop-color="#17ae17"/><stop offset="0.528" stop-color="#179417"/><stop offset="0.623" stop-color="#177917"/><stop offset="0.638" stop-color="#175b17"/><stop offset="0.962" stop-color="#175b17"/><stop offset="0.989" stop-color="#174117"/><stop offset="1.000" stop-color="#174117"/></linearGradient>
<linearGradient id="b111" gradientUnits="userSpaceOnUse" x1="383.4" y1="576.3" x2="306.3" y2="598.8"><stop offset="0.000" stop-color="#17d017"/><stop offset="0.001" stop-color="#17e017"/><stop offset="0.008" stop-color="#17ec17"/><stop offset="0.023" stop-color="#17f417"/><stop offset="0.048" stop-color="#17f717"/><stop offset="0.085" stop-color="#17f617"/><stop offset="0.135" stop-color="#2bff2b"/><stop offset="0.197" stop-color="#85ff85"/><stop offset="0.271" stop-color="#7cff7c"/><stop offset="0.354" stop-color="#26d226"/><stop offset="0.444" stop-color="#17ad17"/><stop offset="0.539" stop-color="#179317"/><stop offset="0.636" stop-color="#177817"/><stop offset="0.650" stop-color="#175917"/><stop offset="0.964" stop-color="#175917"/><stop offset="0.989" stop-color="#174017"/><stop offset="1.000" stop-color="#174017"/></linearGradient>
<linearGradient id="b112" gradientUnits="userSpaceOnUse" x1="381.9" y1="573.4" x2="305.4" y2="592.1"><stop offset="0.000" stop-color="#17cd17"/><stop offset="0.001" stop-color="#17de17"/><stop offset="0.008" stop-color="#17ea17"/><stop offset="0.023" stop-color="#17f217"/><stop offset="0.049" stop-color="#17f517"/><stop offset="0.088" stop-color="#18f418"/><stop offset="0.139" stop-color="#2fff2f"/><stop offset="0.202" stop-color="#93ff93"/><stop offset="0.278" stop-color="#7eff7e"/><stop offset="0.362" stop-color="#24cf24"/><stop offset="0.455" stop-color="#17ab17"/><stop offset="0.551" stop-color="#179217"/><stop offset="0.650" stop-color="#177717"/><stop offset="0.664" stop-color="#175817"/><stop offset="0.965" stop-color="#175817"/><stop offset="0.989" stop-color="#174017"/><stop offset="1.000" stop-color="#174017"/></linearGradient>
<linearGradient id="b113" gradientUnits="userSpaceOnUse" x1="380.6" y1="570.4" x2="304.9" y2="585.5"><stop offset="0.000" stop-color="#17cc17"/><stop offset="0.001" stop-color="#17dc17"/><stop offset="0.008" stop-color="#17e917"/><stop offset="0.024" stop-color="#17f117"/><stop offset="0.051" stop-color="#17f417"/><stop offset="0.090" stop-color="#18f318"/><stop offset="0.143" stop-color="#34ff34"/><stop offset="0.208" stop-color="#9dff9d"/><stop offset="0.285" stop-color="#7aff7a"/><stop offset="0.372" stop-color="#22cb22"/><stop offset="0.466" stop-color="#17aa17"/><stop offset="0.565" stop-color="#179117"/><stop offset="0.664" stop-color="#177517"/><stop offset="0.678" stop-color="#175717"/><stop offset="0.966" stop-color="#175717"/><stop offset="0.990" stop-color="#174017"/><stop offset="1.000" stop-color="#174017"/></linearGradient>
<linearGradient id="b114" gradientUnits="userSpaceOnUse" x1="379.7" y1="568.1" x2="304.7" y2="580.5"><stop offset="0.000" stop-color="#17cb17"/><stop offset="0.001" stop-color="#17db17"/><stop offset="0.008" stop-color="#17e817"/><stop offset="0.024" stop-color="#17f017"/><stop offset="0.052" stop-color="#17f317"/><stop offset="0.092" stop-color="#18f218"/><stop offset="0.146" stop-color="#39ff39"/><stop offset="0.213" stop-color="#a6ffa6"/><stop offset="0.292" stop-color="#71ff71"/><stop offset="0.380" stop-color="#1fc61f"/><stop offset="0.476" stop-color="#17a717"/><stop offset="0.576" stop-color="#178e17"/><stop offset="0.676" stop-color="#177217"/><stop offset="0.689" stop-color="#175617"/><stop offset="0.968" stop-color="#175617"/><stop offset="0.990" stop-color="#174017"/><stop offset="1.000" stop-color="#174017"/></linearGradient>
<linearGradient id="b115" gradientUnits="userSpaceOnUse" x1="379.1" y1="566.5" x2="304.6" y2="577.2"><stop offset="0.000" stop-color="#17ca17"/><stop offset="0.001" stop-color="#17db17"/><stop offset="0.008" stop-color="#17e717"/><stop offset="0.025" stop-color="#17ef17"/><stop offset="0.053" stop-color="#17f217"/><stop offset="0.094" stop-color="#18f218"/><stop offset="0.149" stop-color="#3fff3f"/><stop offset="0.217" stop-color="#aaffaa"/><stop offset="0.297" stop-color="#64ff64"/><stop offset="0.387" stop-color="#1dc11d"/><stop offset="0.483" stop-color="#17a517"/><stop offset="0.584" stop-color="#178b17"/><stop offset="0.685" stop-color="#176f17"/><stop offset="0.697" stop-color="#175217"/><stop offset="0.968" stop-color="#175217"/><stop offset="0.991" stop-color="#173e17"/><stop offset="1.000" stop-color="#173e17"/></linearGradient>
<linearGradient id="b116" gradientUnits="userSpaceOnUse" x1="378.6" y1="565.0" x2="304.6" y2="573.9"><stop offset="0.000" stop-color="#17ca17"/><stop offset="0.001" stop-color="#17db17"/><stop offset="0.009" stop-color="#17e717"/><stop offset="0.026" stop-color="#17ef17"/><stop offset="0.054" stop-color="#17f217"/><stop offset="0.097" stop-color="#19f219"/><stop offset="0.152" stop-color="#45ff45"/><stop offset="0.222" stop-color="#aaffaa"/><stop offset="0.303" stop-color="#58ff58"/><stop offset="0.394" stop-color="#1bbd1b"/><stop offset="0.491" stop-color="#17a217"/><stop offset="0.593" stop-color="#178817"/><stop offset="0.694" stop-color="#176b17"/><stop offset="0.706" stop-color="#175517"/><stop offset="0.969" stop-color="#175517"/><stop offset="0.991" stop-color="#174117"/><stop offset="1.000" stop-color="#174117"/></linearGradient>
<linearGradient id="b117" gradientUnits="userSpaceOnUse" x1="378.1" y1="563.4" x2="304.6" y2="570.6"><stop offset="0.000" stop-color="#17cb17"/><stop offset="0.001" stop-color="#17dc17"/><stop offset="0.009" stop-color="#17e917"/><stop offset="0.026" stop-color="#17f017"/><stop offset="0.056" stop-color="#17f317"/><stop offset="0.099" stop-color="#19f319"/><stop offset="0.156" stop-color="#48ff48"/><stop offset="0.226" stop-color="#a3ffa3"/><stop offset="0.309" stop-color="#4cff4c"/><stop offset="0.401" stop-color="#19ba19"/><stop offset="0.500" stop-color="#179f17"/><stop offset="0.602" stop-color="#178417"/><stop offset="0.703" stop-color="#176717"/><stop offset="0.715" stop-color="#175217"/><stop offset="0.970" stop-color="#175217"/><stop offset="0.991" stop-color="#174117"/><stop offset="1.000" stop-color="#174117"/></linearGradient>
<linearGradient id="b118" gradientUnits="userSpaceOnUse" x1="377.0" y1="561.0" x2="304.5" y2="567.9"><stop offset="0.000" stop-color="#17cd17"/><stop offset="0.001" stop-color="#17de17"/><stop offset="0.009" stop-color="#17eb17"/><stop offset="0.027" stop-color="#17f217"/><stop offset="0.057" stop-color="#17f417"/><stop offset="0.100" stop-color="#19f419"/><stop offset="0.158" stop-color="#47ff47"/><stop offset="0.230" stop-color="#93ff93"/><stop offset="0.313" stop-color="#3ff33f"/><stop offset="0.406" stop-color="#19b719"/><stop offset="0.505" stop-color="#179c17"/><stop offset="0.607" stop-color="#178017"/><stop offset="0.708" stop-color="#176217"/><stop offset="0.720" stop-color="#175017"/><stop offset="0.971" stop-color="#175017"/><stop offset="0.991" stop-color="#174117"/><stop offset="1.000" stop-color="#174117"/></linearGradient>
<linearGradient id="b119" gradientUnits="userSpaceOnUse" x1="375.2" y1="557.9" x2="304.4" y2="565.6"><stop offset="0.000" stop-color="#17d017"/><stop offset="0.001" stop-color="#17e117"/><stop offset="0.009" stop-color="#17ed17"/><stop offset="0.027" stop-color="#17f517"/><stop offset="0.057" stop-color="#17f717"/><stop offset="0.102" stop-color="#19f519"/><stop offset="0.160" stop-color="#42ff42"/><stop offset="0.232" stop-color="#7bff7b"/><stop offset="0.316" stop-color="#33e633"/><stop offset="0.409" stop-color="#18b418"/><stop offset="0.509" stop-color="#179917"/><stop offset="0.610" stop-color="#177c17"/><stop offset="0.711" stop-color="#175d17"/><stop offset="0.722" stop-color="#174f17"/><stop offset="0.971" stop-color="#174f17"/><stop offset="0.991" stop-color="#174117"/><stop offset="1.000" stop-color="#174117"/></linearGradient>
<linearGradient id="b120" gradientUnits="userSpaceOnUse" x1="373.5" y1="554.7" x2="304.2" y2="563.4"><stop offset="0.000" stop-color="#17d217"/><stop offset="0.001" stop-color="#17e317"/><stop offset="0.009" stop-color="#17f017"/><stop offset="0.027" stop-color="#17f717"/><stop offset="0.058" stop-color="#17f817"/><stop offset="0.103" stop-color="#19f619"/><stop offset="0.162" stop-color="#3dff3d"/><stop offset="0.234" stop-color="#66ff66"/><stop offset="0.319" stop-color="#2adb2a"/><stop offset="0.412" stop-color="#17b117"/><stop offset="0.512" stop-color="#179517"/><stop offset="0.613" stop-color="#177817"/><stop offset="0.713" stop-color="#175817"/><stop offset="0.724" stop-color="#174c17"/><stop offset="0.971" stop-color="#174c17"/><stop offset="0.991" stop-color="#173f17"/><stop offset="1.000" stop-color="#173f17"/></linearGradient>
<linearGradient id="b121" gradientUnits="userSpaceOnUse" x1="371.9" y1="551.6" x2="304.1" y2="561.1"><stop offset="0.000" stop-color="#17d517"/><stop offset="0.001" stop-color="#17e617"/><stop offset="0.009" stop-color="#17f317"/><stop offset="0.028" stop-color="#17f917"/><stop offset="0.059" stop-color="#17fa17"/><stop offset="0.104" stop-color="#19f719"/><stop offset="0.164" stop-color="#36ff36"/><stop offset="0.237" stop-color="#52ff52"/><stop offset="0.322" stop-color="#23d323"/><stop offset="0.416" stop-color="#17ae17"/><stop offset="0.515" stop-color="#179217"/><stop offset="0.616" stop-color="#177317"/><stop offset="0.715" stop-color="#175317"/><stop offset="0.726" stop-color="#174c17"/><stop offset="0.971" stop-color="#174c17"/><stop offset="0.991" stop-color="#173f17"/><stop offset="1.000" stop-color="#173f17"/></linearGradient>
<linearGradient id="b122" gradientUnits="userSpaceOnUse" x1="369.9" y1="548.4" x2="303.8" y2="558.6"><stop offset="0.000" stop-color="#17d717"/><stop offset="0.002" stop-color="#17e917"/><stop offset="0.010" stop-color="#17f517"/><stop offset="0.029" stop-color="#17fc17"/><stop offset="0.060" stop-color="#17fc17"/><stop offset="0.106" stop-color="#18f818"/><stop offset="0.167" stop-color="#30ff30"/><stop offset="0.241" stop-color="#42ff42"/><stop offset="0.326" stop-color="#1fcd1f"/><stop offset="0.420" stop-color="#17ac17"/><stop offset="0.519" stop-color="#178e17"/><stop offset="0.620" stop-color="#176e17"/><stop offset="0.717" stop-color="#175117"/><stop offset="0.728" stop-color="#174a17"/><stop offset="0.972" stop-color="#174a17"/><stop offset="0.992" stop-color="#173e17"/><stop offset="1.000" stop-color="#173e17"/></linearGradient>
<linearGradient id="b123" gradientUnits="userSpaceOnUse" x1="367.6" y1="545.1" x2="303.4" y2="555.9"><stop offset="0.000" stop-color="#17d917"/><stop offset="0.002" stop-color="#17eb17"/><stop offset="0.010" stop-color="#17f717"/><stop offset="0.030" stop-color="#17fe17"/><stop offset="0.062" stop-color="#17fe17"/><stop offset="0.110" stop-color="#18f918"/><stop offset="0.171" stop-color="#2cff2c"/><stop offset="0.246" stop-color="#38fb38"/><stop offset="0.332" stop-color="#1cc91c"/><stop offset="0.426" stop-color="#17a917"/><stop offset="0.524" stop-color="#178b17"/><stop offset="0.623" stop-color="#176a17"/><stop offset="0.719" stop-color="#175017"/><stop offset="0.730" stop-color="#174b17"/><stop offset="0.972" stop-color="#174b17"/><stop offset="0.992" stop-color="#174017"/><stop offset="1.000" stop-color="#174017"/></linearGradient>
<linearGradient id="b124" gradientUnits="userSpaceOnUse" x1="365.4" y1="541.9" x2="303.1" y2="553.1"><stop offset="0.000" stop-color="#17db17"/><stop offset="0.002" stop-color="#17ec17"/><stop offset="0.011" stop-color="#17f917"/><stop offset="0.031" stop-color="#17ff17"/><stop offset="0.065" stop-color="#17fe17"/><stop offset="0.113" stop-color="#18f918"/><stop offset="0.175" stop-color="#29fd29"/><stop offset="0.251" stop-color="#30f230"/><stop offset="0.337" stop-color="#1ac51a"/><stop offset="0.431" stop-color="#17a617"/><stop offset="0.529" stop-color="#178717"/><stop offset="0.627" stop-color="#176617"/><stop offset="0.721" stop-color="#174f17"/><stop offset="0.732" stop-color="#174817"/><stop offset="0.972" stop-color="#174817"/><stop offset="0.992" stop-color="#173e17"/><stop offset="1.000" stop-color="#173e17"/></linearGradient>
<linearGradient id="b125" gradientUnits="userSpaceOnUse" x1="363.1" y1="538.6" x2="302.7" y2="550.4"><stop offset="0.000" stop-color="#17dc17"/><stop offset="0.002" stop-color="#17ee17"/><stop offset="0.011" stop-color="#17fa17"/><stop offset="0.032" stop-color="#17ff17"/><stop offset="0.067" stop-color="#17ff17"/><stop offset="0.116" stop-color="#18f918"/><stop offset="0.180" stop-color="#25f925"/><stop offset="0.256" stop-color="#29ea29"/><stop offset="0.343" stop-color="#19c219"/><stop offset="0.437" stop-color="#17a317"/><stop offset="0.534" stop-color="#178317"/><stop offset="0.631" stop-color="#176117"/><stop offset="0.723" stop-color="#174d17"/><stop offset="0.734" stop-color="#174717"/><stop offset="0.972" stop-color="#174717"/><stop offset="0.992" stop-color="#173e17"/><stop offset="1.000" stop-color="#173e17"/></linearGradient>
<linearGradient id="b126" gradientUnits="userSpaceOnUse" x1="360.6" y1="535.5" x2="302.2" y2="547.6"><stop offset="0.000" stop-color="#17dd17"/><stop offset="0.002" stop-color="#17f017"/><stop offset="0.012" stop-color="#17fc17"/><stop offset="0.034" stop-color="#17ff17"/><stop offset="0.069" stop-color="#17ff17"/><stop offset="0.119" stop-color="#18fa18"/><stop offset="0.184" stop-color="#22f622"/><stop offset="0.260" stop-color="#24e424"/><stop offset="0.347" stop-color="#18bf18"/><stop offset="0.441" stop-color="#17a017"/><stop offset="0.538" stop-color="#178017"/><stop offset="0.633" stop-color="#175d17"/><stop offset="0.722" stop-color="#174c17"/><stop offset="0.734" stop-color="#174717"/><stop offset="0.972" stop-color="#174717"/><stop offset="0.992" stop-color="#173f17"/><stop offset="1.000" stop-color="#173f17"/></linearGradient>
<linearGradient id="b127" gradientUnits="userSpaceOnUse" x1="357.9" y1="532.5" x2="301.8" y2="544.9"><stop offset="0.000" stop-color="#17df17"/><stop offset="0.002" stop-color="#17f117"/><stop offset="0.013" stop-color="#17fd17"/><stop offset="0.035" stop-color="#17ff17"/><stop offset="0.071" stop-color="#17ff17"/><stop offset="0.122" stop-color="#18fa18"/><stop offset="0.187" stop-color="#20f420"/><stop offset="0.264" stop-color="#20df20"/><stop offset="0.351" stop-color="#18bd18"/><stop offset="0.444" stop-color="#179e17"/><stop offset="0.539" stop-color="#177c17"/><stop offset="0.633" stop-color="#175817"/><stop offset="0.720" stop-color="#174b17"/><stop offset="0.731" stop-color="#174617"/><stop offset="0.972" stop-color="#174617"/><stop offset="0.992" stop-color="#173e17"/><stop offset="1.000" stop-color="#173e17"/></linearGradient>
<linearGradient id="b128" gradientUnits="userSpaceOnUse" x1="355.1" y1="529.5" x2="301.2" y2="542.1"><stop offset="0.000" stop-color="#17df17"/><stop offset="0.002" stop-color="#17f217"/><stop offset="0.013" stop-color="#17fe17"/><stop offset="0.036" stop-color="#17ff17"/><stop offset="0.073" stop-color="#17ff17"/><stop offset="0.125" stop-color="#18fa18"/><stop offset="0.190" stop-color="#1ff11f"/><stop offset="0.268" stop-color="#1edb1e"/><stop offset="0.354" stop-color="#17ba17"/><stop offset="0.446" stop-color="#179b17"/><stop offset="0.540" stop-color="#177817"/><stop offset="0.632" stop-color="#175617"/><stop offset="0.717" stop-color="#174a17"/><stop offset="0.728" stop-color="#174617"/><stop offset="0.972" stop-color="#174617"/><stop offset="0.992" stop-color="#173f17"/><stop offset="1.000" stop-color="#173f17"/></linearGradient>
<linearGradient id="b129" gradientUnits="userSpaceOnUse" x1="352.4" y1="526.5" x2="300.8" y2="539.4"><stop offset="0.000" stop-color="#17e117"/><stop offset="0.002" stop-color="#17f317"/><stop offset="0.014" stop-color="#17ff17"/><stop offset="0.038" stop-color="#17ff17"/><stop offset="0.076" stop-color="#17ff17"/><stop offset="0.128" stop-color="#18fa18"/><stop offset="0.194" stop-color="#1def1d"/><stop offset="0.271" stop-color="#1cd81c"/><stop offset="0.357" stop-color="#17b817"/><stop offset="0.449" stop-color="#179817"/><stop offset="0.541" stop-color="#177517"/><stop offset="0.631" stop-color="#175517"/><stop offset="0.713" stop-color="#174917"/><stop offset="0.725" stop-color="#174417"/><stop offset="0.971" stop-color="#174417"/><stop offset="0.991" stop-color="#173e17"/><stop offset="1.000" stop-color="#173e17"/></linearGradient>
<linearGradient id="b130" gradientUnits="userSpaceOnUse" x1="349.5" y1="523.6" x2="300.1" y2="536.5"><stop offset="0.000" stop-color="#17e217"/><stop offset="0.003" stop-color="#17f417"/><stop offset="0.014" stop-color="#17ff17"/><stop offset="0.039" stop-color="#17ff17"/><stop offset="0.077" stop-color="#17ff17"/><stop offset="0.130" stop-color="#18fa18"/><stop offset="0.196" stop-color="#1ced1c"/><stop offset="0.273" stop-color="#1bd51b"/><stop offset="0.359" stop-color="#17b617"/><stop offset="0.449" stop-color="#179517"/><stop offset="0.540" stop-color="#177217"/><stop offset="0.628" stop-color="#175517"/><stop offset="0.708" stop-color="#174817"/><stop offset="0.720" stop-color="#174417"/><stop offset="0.971" stop-color="#174417"/><stop offset="0.991" stop-color="#173e17"/><stop offset="1.000" stop-color="#173e17"/></linearGradient>
<linearGradient id="b131" gradientUnits="userSpaceOnUse" x1="346.5" y1="520.7" x2="299.2" y2="533.5"><stop offset="0.000" stop-color="#17e217"/><stop offset="0.003" stop-color="#17f517"/><stop offset="0.015" stop-color="#17ff17"/><stop offset="0.040" stop-color="#17ff17"/><stop offset="0.078" stop-color="#17ff17"/><stop offset="0.131" stop-color="#18fa18"/><stop offset="0.197" stop-color="#1bed1b"/><stop offset="0.274" stop-color="#1ad41a"/><stop offset="0.358" stop-color="#17b517"/><stop offset="0.447" stop-color="#179417"/><stop offset="0.537" stop-color="#177017"/><stop offset="0.623" stop-color="#175417"/><stop offset="0.701" stop-color="#174817"/><stop offset="0.713" stop-color="#174517"/><stop offset="0.970" stop-color="#174517"/><stop offset="0.991" stop-color="#173e17"/><stop offset="1.000" stop-color="#173e17"/></linearGradient>
<linearGradient id="b132" gradientUnits="userSpaceOnUse" x1="343.5" y1="517.8" x2="298.3" y2="530.5"><stop offset="0.000" stop-color="#17e317"/><stop offset="0.003" stop-color="#17f617"/><stop offset="0.015" stop-color="#17ff17"/><stop offset="0.041" stop-color="#17ff17"/><stop offset="0.080" stop-color="#17ff17"/><stop offset="0.132" stop-color="#18fa18"/><stop offset="0.198" stop-color="#1bec1b"/><stop offset="0.274" stop-color="#1ad41a"/><stop offset="0.357" stop-color="#17b417"/><stop offset="0.445" stop-color="#179317"/><stop offset="0.533" stop-color="#176f17"/><stop offset="0.616" stop-color="#175417"/><stop offset="0.692" stop-color="#174817"/><stop offset="0.705" stop-color="#174417"/><stop offset="0.969" stop-color="#174417"/><stop offset="0.991" stop-color="#173e17"/><stop offset="1.000" stop-color="#173e17"/></linearGradient>
<linearGradient id="b133" gradientUnits="userSpaceOnUse" x1="340.5" y1="514.9" x2="297.4" y2="527.5"><stop offset="0.000" stop-color="#17e317"/><stop offset="0.003" stop-color="#17f617"/><stop offset="0.016" stop-color="#17ff17"/><stop offset="0.041" stop-color="#17ff17"/><stop offset="0.081" stop-color="#17ff17"/><stop offset="0.134" stop-color="#18fa18"/><stop offset="0.199" stop-color="#1bec1b"/><stop offset="0.274" stop-color="#19d319"/><stop offset="0.356" stop-color="#17b317"/><stop offset="0.442" stop-color="#179217"/><stop offset="0.528" stop-color="#176d17"/><stop offset="0.610" stop-color="#175417"/><stop offset="0.683" stop-color="#174717"/><stop offset="0.696" stop-color="#174617"/><stop offset="0.968" stop-color="#174617"/><stop offset="0.991" stop-color="#174017"/><stop offset="1.000" stop-color="#173f17"/></linearGradient>
<linearGradient id="b134" gradientUnits="userSpaceOnUse" x1="337.4" y1="512.1" x2="296.5" y2="524.5"><stop offset="0.000" stop-color="#17e417"/><stop offset="0.003" stop-color="#17f717"/><stop offset="0.017" stop-color="#17ff17"/><stop offset="0.043" stop-color="#17ff17"/><stop offset="0.082" stop-color="#17ff17"/><stop offset="0.135" stop-color="#18fa18"/><stop offset="0.200" stop-color="#1aeb1a"/><stop offset="0.274" stop-color="#19d219"/><stop offset="0.355" stop-color="#17b317"/><stop offset="0.439" stop-color="#179117"/><stop offset="0.523" stop-color="#176c17"/><stop offset="0.602" stop-color="#175417"/><stop offset="0.673" stop-color="#174717"/><stop offset="0.686" stop-color="#174417"/><stop offset="0.967" stop-color="#174417"/><stop offset="0.990" stop-color="#173f17"/><stop offset="1.000" stop-color="#173e17"/></linearGradient>
<linearGradient id="b135" gradientUnits="userSpaceOnUse" x1="334.1" y1="509.4" x2="295.5" y2="521.5"><stop offset="0.000" stop-color="#17e417"/><stop offset="0.004" stop-color="#17f717"/><stop offset="0.018" stop-color="#17ff17"/><stop offset="0.044" stop-color="#17ff17"/><stop offset="0.085" stop-color="#17ff17"/><stop offset="0.137" stop-color="#18fb18"/><stop offset="0.201" stop-color="#1aeb1a"/><stop offset="0.274" stop-color="#19d219"/><stop offset="0.353" stop-color="#17b317"/><stop offset="0.435" stop-color="#179117"/><stop offset="0.516" stop-color="#176c17"/><stop offset="0.592" stop-color="#175417"/><stop offset="0.661" stop-color="#174817"/><stop offset="0.675" stop-color="#174817"/><stop offset="0.966" stop-color="#174817"/><stop offset="0.990" stop-color="#174217"/><stop offset="1.000" stop-color="#174117"/></linearGradient>
<linearGradient id="b136" gradientUnits="userSpaceOnUse" x1="330.9" y1="506.6" x2="294.5" y2="518.5"><stop offset="0.000" stop-color="#17e517"/><stop offset="0.004" stop-color="#17f717"/><stop offset="0.019" stop-color="#17ff17"/><stop offset="0.046" stop-color="#17ff17"/><stop offset="0.087" stop-color="#17ff17"/><stop offset="0.139" stop-color="#18fb18"/><stop offset="0.202" stop-color="#1aeb1a"/><stop offset="0.274" stop-color="#19d219"/><stop offset="0.351" stop-color="#17b317"/><stop offset="0.430" stop-color="#179117"/><stop offset="0.508" stop-color="#176c17"/><stop offset="0.582" stop-color="#175417"/><stop offset="0.648" stop-color="#174817"/><stop offset="0.662" stop-color="#174717"/><stop offset="0.965" stop-color="#174717"/><stop offset="0.989" stop-color="#174117"/><stop offset="1.000" stop-color="#174017"/></linearGradient>
<linearGradient id="b137" gradientUnits="userSpaceOnUse" x1="327.6" y1="503.9" x2="293.5" y2="515.5"><stop offset="0.000" stop-color="#17e517"/><stop offset="0.004" stop-color="#17f817"/><stop offset="0.020" stop-color="#17ff17"/><stop offset="0.048" stop-color="#17ff17"/><stop offset="0.088" stop-color="#17ff17"/><stop offset="0.141" stop-color="#18fb18"/><stop offset="0.203" stop-color="#1aeb1a"/><stop offset="0.273" stop-color="#19d219"/><stop offset="0.347" stop-color="#17b317"/><stop offset="0.424" stop-color="#179117"/><stop offset="0.499" stop-color="#176c17"/><stop offset="0.570" stop-color="#175417"/><stop offset="0.633" stop-color="#174817"/><stop offset="0.647" stop-color="#174517"/><stop offset="0.963" stop-color="#174517"/><stop offset="0.989" stop-color="#174017"/><stop offset="1.000" stop-color="#173e17"/></linearGradient>
<linearGradient id="b138" gradientUnits="userSpaceOnUse" x1="324.5" y1="501.4" x2="292.6" y2="512.6"><stop offset="0.000" stop-color="#17e517"/><stop offset="0.004" stop-color="#17f817"/><stop offset="0.020" stop-color="#17ff17"/><stop offset="0.048" stop-color="#17ff17"/><stop offset="0.089" stop-color="#17ff17"/><stop offset="0.140" stop-color="#18fb18"/><stop offset="0.201" stop-color="#1aeb1a"/><stop offset="0.270" stop-color="#19d219"/><stop offset="0.343" stop-color="#17b317"/><stop offset="0.417" stop-color="#179117"/><stop offset="0.491" stop-color="#176c17"/><stop offset="0.559" stop-color="#175417"/><stop offset="0.620" stop-color="#174817"/><stop offset="0.635" stop-color="#174617"/><stop offset="0.962" stop-color="#174617"/><stop offset="0.989" stop-color="#174017"/><stop offset="1.000" stop-color="#173f17"/></linearGradient>
<linearGradient id="b139" gradientUnits="userSpaceOnUse" x1="321.5" y1="499.1" x2="291.7" y2="509.9"><stop offset="0.000" stop-color="#17e517"/><stop offset="0.004" stop-color="#17f817"/><stop offset="0.020" stop-color="#17ff17"/><stop offset="0.047" stop-color="#17ff17"/><stop offset="0.087" stop-color="#17ff17"/><stop offset="0.138" stop-color="#18fb18"/><stop offset="0.198" stop-color="#1aeb1a"/><stop offset="0.266" stop-color="#19d219"/><stop offset="0.337" stop-color="#17b317"/><stop offset="0.411" stop-color="#179117"/><stop offset="0.483" stop-color="#176c17"/><stop offset="0.550" stop-color="#175417"/><stop offset="0.611" stop-color="#174817"/><stop offset="0.626" stop-color="#174617"/><stop offset="0.961" stop-color="#174617"/><stop offset="0.988" stop-color="#174117"/><stop offset="1.000" stop-color="#173f17"/></linearGradient>
<linearGradient id="b140" gradientUnits="userSpaceOnUse" x1="318.5" y1="496.9" x2="290.8" y2="507.1"><stop offset="0.000" stop-color="#17e517"/><stop offset="0.004" stop-color="#17f817"/><stop offset="0.019" stop-color="#17ff17"/><stop offset="0.047" stop-color="#17ff17"/><stop offset="0.086" stop-color="#17ff17"/><stop offset="0.135" stop-color="#18fb18"/><stop offset="0.195" stop-color="#1aeb1a"/><stop offset="0.261" stop-color="#19d219"/><stop offset="0.331" stop-color="#17b317"/><stop offset="0.403" stop-color="#179117"/><stop offset="0.474" stop-color="#176c17"/><stop offset="0.540" stop-color="#175417"/><stop offset="0.599" stop-color="#174817"/><stop offset="0.616" stop-color="#174717"/><stop offset="0.960" stop-color="#174717"/><stop offset="0.988" stop-color="#174117"/><stop offset="1.000" stop-color="#173f17"/></linearGradient>
<linearGradient id="b141" gradientUnits="userSpaceOnUse" x1="315.5" y1="494.6" x2="289.9" y2="504.4"><stop offset="0.000" stop-color="#17e617"/><stop offset="0.004" stop-color="#17f817"/><stop offset="0.019" stop-color="#17ff17"/><stop offset="0.046" stop-color="#17ff17"/><stop offset="0.084" stop-color="#17ff17"/><stop offset="0.133" stop-color="#18fb18"/><stop offset="0.190" stop-color="#1aeb1a"/><stop offset="0.255" stop-color="#19d219"/><stop offset="0.324" stop-color="#17b317"/><stop offset="0.395" stop-color="#179117"/><stop offset="0.464" stop-color="#176c17"/><stop offset="0.529" stop-color="#175517"/><stop offset="0.587" stop-color="#174817"/><stop offset="0.603" stop-color="#174617"/><stop offset="0.959" stop-color="#174617"/><stop offset="0.988" stop-color="#174017"/><stop offset="1.000" stop-color="#173e17"/></linearGradient>
<linearGradient id="b142" gradientUnits="userSpaceOnUse" x1="312.9" y1="492.8" x2="289.2" y2="502.0"><stop offset="0.000" stop-color="#17e617"/><stop offset="0.004" stop-color="#17f817"/><stop offset="0.019" stop-color="#17ff17"/><stop offset="0.046" stop-color="#17ff17"/><stop offset="0.084" stop-color="#17ff17"/><stop offset="0.133" stop-color="#18fb18"/><stop offset="0.190" stop-color="#1aeb1a"/><stop offset="0.253" stop-color="#19d219"/><stop offset="0.321" stop-color="#17b317"/><stop offset="0.390" stop-color="#179117"/><stop offset="0.458" stop-color="#176b17"/><stop offset="0.521" stop-color="#175517"/><stop offset="0.577" stop-color="#174817"/><stop offset="0.594" stop-color="#174917"/><stop offset="0.958" stop-color="#174917"/><stop offset="0.987" stop-color="#174317"/><stop offset="1.000" stop-color="#174117"/></linearGradient>
<linearGradient id="b143" gradientUnits="userSpaceOnUse" x1="310.6" y1="491.4" x2="288.8" y2="500.0"><stop offset="0.000" stop-color="#17e617"/><stop offset="0.005" stop-color="#17f817"/><stop offset="0.021" stop-color="#17ff17"/><stop offset="0.048" stop-color="#17ff17"/><stop offset="0.087" stop-color="#17ff17"/><stop offset="0.136" stop-color="#18fc18"/><stop offset="0.193" stop-color="#1aeb1a"/><stop offset="0.256" stop-color="#19d219"/><stop offset="0.322" stop-color="#17b317"/><stop offset="0.390" stop-color="#179117"/><stop offset="0.456" stop-color="#176b17"/><stop offset="0.517" stop-color="#175517"/><stop offset="0.572" stop-color="#174917"/><stop offset="0.589" stop-color="#174a17"/><stop offset="0.957" stop-color="#174a17"/><stop offset="0.987" stop-color="#174417"/><stop offset="1.000" stop-color="#174217"/></linearGradient>
<linearGradient id="b144" gradientUnits="userSpaceOnUse" x1="308.4" y1="489.9" x2="288.2" y2="498.0"><stop offset="0.000" stop-color="#17e617"/><stop offset="0.005" stop-color="#17f917"/><stop offset="0.022" stop-color="#17ff17"/><stop offset="0.051" stop-color="#17ff17"/><stop offset="0.090" stop-color="#17ff17"/><stop offset="0.139" stop-color="#18fc18"/><stop offset="0.196" stop-color="#1aeb1a"/><stop offset="0.258" stop-color="#19d219"/><stop offset="0.323" stop-color="#17b317"/><stop offset="0.389" stop-color="#179117"/><stop offset="0.453" stop-color="#176b17"/><stop offset="0.513" stop-color="#175517"/><stop offset="0.566" stop-color="#174917"/><stop offset="0.583" stop-color="#174717"/><stop offset="0.957" stop-color="#174717"/><stop offset="0.987" stop-color="#174217"/><stop offset="1.000" stop-color="#174017"/></linearGradient>
<linearGradient id="b145" gradientUnits="userSpaceOnUse" x1="306.1" y1="488.5" x2="287.8" y2="496.0"><stop offset="0.000" stop-color="#17e617"/><stop offset="0.006" stop-color="#17f917"/><stop offset="0.024" stop-color="#17ff17"/><stop offset="0.053" stop-color="#17ff17"/><stop offset="0.093" stop-color="#17ff17"/><stop offset="0.142" stop-color="#18fc18"/><stop offset="0.198" stop-color="#1aeb1a"/><stop offset="0.260" stop-color="#19d219"/><stop offset="0.324" stop-color="#17b317"/><stop offset="0.388" stop-color="#179117"/><stop offset="0.450" stop-color="#176b17"/><stop offset="0.508" stop-color="#175517"/><stop offset="0.559" stop-color="#174917"/><stop offset="0.576" stop-color="#174717"/><stop offset="0.956" stop-color="#174717"/><stop offset="0.987" stop-color="#174217"/><stop offset="1.000" stop-color="#174017"/></linearGradient>
<linearGradient id="b146" gradientUnits="userSpaceOnUse" x1="304.1" y1="487.3" x2="287.3" y2="494.1"><stop offset="0.000" stop-color="#17e617"/><stop offset="0.006" stop-color="#17f917"/><stop offset="0.024" stop-color="#17ff17"/><stop offset="0.054" stop-color="#17ff17"/><stop offset="0.093" stop-color="#17ff17"/><stop offset="0.142" stop-color="#18fc18"/><stop offset="0.197" stop-color="#1aeb1a"/><stop offset="0.257" stop-color="#19d219"/><stop offset="0.320" stop-color="#17b317"/><stop offset="0.382" stop-color="#179117"/><stop offset="0.443" stop-color="#176b17"/><stop offset="0.499" stop-color="#175517"/><stop offset="0.548" stop-color="#174917"/><stop offset="0.566" stop-color="#174617"/><stop offset="0.955" stop-color="#174617"/><stop offset="0.986" stop-color="#174017"/><stop offset="1.000" stop-color="#173e17"/></linearGradient>
<linearGradient id="b147" gradientUnits="userSpaceOnUse" x1="302.4" y1="486.4" x2="286.9" y2="492.4"><stop offset="0.000" stop-color="#17e617"/><stop offset="0.006" stop-color="#17f917"/><stop offset="0.024" stop-color="#17ff17"/><stop offset="0.052" stop-color="#17ff17"/><stop offset="0.091" stop-color="#17ff17"/><stop offset="0.138" stop-color="#18fc18"/><stop offset="0.192" stop-color="#1aeb1a"/><stop offset="0.250" stop-color="#19d219"/><stop offset="0.311" stop-color="#17b317"/><stop offset="0.372" stop-color="#179117"/><stop offset="0.431" stop-color="#176b17"/><stop offset="0.485" stop-color="#175517"/><stop offset="0.533" stop-color="#174917"/><stop offset="0.552" stop-color="#174617"/><stop offset="0.953" stop-color="#174617"/><stop offset="0.986" stop-color="#174017"/><stop offset="1.000" stop-color="#173e17"/></linearGradient>
<linearGradient id="b148" gradientUnits="userSpaceOnUse" x1="300.6" y1="485.4" x2="286.6" y2="490.6"><stop offset="0.000" stop-color="#17e617"/><stop offset="0.006" stop-color="#17f917"/><stop offset="0.023" stop-color="#17ff17"/><stop offset="0.050" stop-color="#17ff17"/><stop offset="0.088" stop-color="#17ff17"/><stop offset="0.133" stop-color="#18fc18"/><stop offset="0.185" stop-color="#1aeb1a"/><stop offset="0.241" stop-color="#19d219"/><stop offset="0.300" stop-color="#17b317"/><stop offset="0.359" stop-color="#179117"/><stop offset="0.416" stop-color="#176b17"/><stop offset="0.469" stop-color="#175517"/><stop offset="0.515" stop-color="#174917"/><stop offset="0.534" stop-color="#174717"/><stop offset="0.951" stop-color="#174717"/><stop offset="0.985" stop-color="#174117"/><stop offset="1.000" stop-color="#173f17"/></linearGradient>
<linearGradient id="b149" gradientUnits="userSpaceOnUse" x1="298.9" y1="484.5" x2="286.2" y2="488.9"><stop offset="0.000" stop-color="#17e617"/><stop offset="0.006" stop-color="#17f917"/><stop offset="0.022" stop-color="#17ff17"/><stop offset="0.048" stop-color="#17ff17"/><stop offset="0.084" stop-color="#17ff17"/><stop offset="0.128" stop-color="#18fc18"/><stop offset="0.177" stop-color="#1aeb1a"/><stop offset="0.231" stop-color="#19d219"/><stop offset="0.288" stop-color="#17b317"/><stop offset="0.344" stop-color="#179117"/><stop offset="0.399" stop-color="#176b17"/><stop offset="0.449" stop-color="#175517"/><stop offset="0.493" stop-color="#174917"/><stop offset="0.514" stop-color="#174617"/><stop offset="0.949" stop-color="#174617"/><stop offset="0.985" stop-color="#174117"/><stop offset="1.000" stop-color="#173f17"/></linearGradient>
<radialGradient id="r0" gradientUnits="userSpaceOnUse" cx="447.3" cy="274.3" r="108"><stop offset="0.509" stop-color="#174017"/><stop offset="0.537" stop-color="#174017"/><stop offset="0.564" stop-color="#174017"/><stop offset="0.591" stop-color="#174517"/><stop offset="0.618" stop-color="#175c17"/><stop offset="0.646" stop-color="#177017"/><stop offset="0.673" stop-color="#178317"/><stop offset="0.700" stop-color="#179417"/><stop offset="0.727" stop-color="#17a317"/><stop offset="0.755" stop-color="#17b117"/><stop offset="0.782" stop-color="#20c720"/><stop offset="0.809" stop-color="#61ff61"/><stop offset="0.836" stop-color="#e7ffe7"/><stop offset="0.864" stop-color="#d8ffd8"/><stop offset="0.891" stop-color="#48ff48"/><stop offset="0.918" stop-color="#19e519"/><stop offset="0.945" stop-color="#17e317"/><stop offset="0.973" stop-color="#17dd17"/><stop offset="1.000" stop-color="#17b617"/></radialGradient>
<radialGradient id="r1" gradientUnits="userSpaceOnUse" cx="447.3" cy="274.3" r="108"><stop offset="0.509" stop-color="#174017"/><stop offset="0.537" stop-color="#174017"/><stop offset="0.564" stop-color="#174017"/><stop offset="0.591" stop-color="#174417"/><stop offset="0.618" stop-color="#175617"/><stop offset="0.646" stop-color="#176c17"/><stop offset="0.673" stop-color="#177f17"/><stop offset="0.700" stop-color="#179117"/><stop offset="0.727" stop-color="#17a217"/><stop offset="0.755" stop-color="#17b117"/><stop offset="0.782" stop-color="#20c720"/><stop offset="0.809" stop-color="#5eff5e"/><stop offset="0.836" stop-color="#d7ffd7"/><stop offset="0.864" stop-color="#c5ffc5"/><stop offset="0.891" stop-color="#42ff42"/><stop offset="0.918" stop-color="#19eb19"/><stop offset="0.945" stop-color="#17eb17"/><stop offset="0.973" stop-color="#17e617"/><stop offset="1.000" stop-color="#17c017"/></radialGradient>
<radialGradient id="r2" gradientUnits="userSpaceOnUse" cx="447.3" cy="274.3" r="108"><stop offset="0.509" stop-color="#174017"/><stop offset="0.537" stop-color="#174017"/><stop offset="0.564" stop-color="#174017"/><stop offset="0.591" stop-color="#174517"/><stop offset="0.618" stop-color="#175117"/><stop offset="0.646" stop-color="#176817"/><stop offset="0.673" stop-color="#177c17"/><stop offset="0.700" stop-color="#178f17"/><stop offset="0.727" stop-color="#17a117"/><stop offset="0.755" stop-color="#17b117"/><stop offset="0.782" stop-color="#20c820"/><stop offset="0.809" stop-color="#56ff56"/><stop offset="0.836" stop-color="#bcffbc"/><stop offset="0.864" stop-color="#a4ffa4"/><stop offset="0.891" stop-color="#38ff38"/><stop offset="0.918" stop-color="#18f118"/><stop offset="0.945" stop-color="#17f217"/><stop offset="0.973" stop-color="#17ee17"/><stop offset="1.000" stop-color="#17c917"/></radialGradient>
<radialGradient id="r3" gradientUnits="userSpaceOnUse" cx="447.3" cy="274.3" r="108"><stop offset="0.509" stop-color="#174017"/><stop offset="0.537" stop-color="#174017"/><stop offset="0.564" stop-color="#174017"/><stop offset="0.591" stop-color="#174517"/><stop offset="0.618" stop-color="#174f17"/><stop offset="0.646" stop-color="#176417"/><stop offset="0.673" stop-color="#177a17"/><stop offset="0.700" stop-color="#178e17"/><stop offset="0.727" stop-color="#17a017"/><stop offset="0.755" stop-color="#17b117"/><stop offset="0.782" stop-color="#1fc81f"/><stop offset="0.809" stop-color="#4dff4d"/><stop offset="0.836" stop-color="#9aff9a"/><stop offset="0.864" stop-color="#7fff7f"/><stop offset="0.891" stop-color="#2dff2d"/><stop offset="0.918" stop-color="#18f618"/><stop offset="0.945" stop-color="#17f817"/><stop offset="0.973" stop-color="#17f517"/><stop offset="1.000" stop-color="#17d117"/></radialGradient>
<radialGradient id="r4" gradientUnits="userSpaceOnUse" cx="447.3" cy="274.3" r="108"><stop offset="0.509" stop-color="#174017"/><stop offset="0.537" stop-color="#174017"/><stop offset="0.564" stop-color="#174017"/><stop offset="0.591" stop-color="#174617"/><stop offset="0.618" stop-color="#175017"/><stop offset="0.646" stop-color="#176117"/><stop offset="0.673" stop-color="#177817"/><stop offset="0.700" stop-color="#178c17"/><stop offset="0.727" stop-color="#179f17"/><stop offset="0.755" stop-color="#17b117"/><stop offset="0.782" stop-color="#1ec81e"/><stop offset="0.809" stop-color="#43fc43"/><stop offset="0.836" stop-color="#77ff77"/><stop offset="0.864" stop-color="#5cff5c"/><stop offset="0.891" stop-color="#24ff24"/><stop offset="0.918" stop-color="#17fa17"/><stop offset="0.945" stop-color="#17fd17"/><stop offset="0.973" stop-color="#17fb17"/><stop offset="1.000" stop-color="#17d817"/></radialGradient>
<radialGradient id="r5" gradientUnits="userSpaceOnUse" cx="447.3" cy="274.3" r="108"><stop offset="0.509" stop-color="#174017"/><stop offset="0.537" stop-color="#174017"/><stop offset="0.564" stop-color="#174017"/><stop offset="0.591" stop-color="#174817"/><stop offset="0.618" stop-color="#175117"/><stop offset="0.646" stop-color="#175f17"/><stop offset="0.673" stop-color="#177617"/><stop offset="0.700" stop-color="#178b17"/><stop offset="0.727" stop-color="#179e17"/><stop offset="0.755" stop-color="#17b117"/><stop offset="0.782" stop-color="#1dc81d"/><stop offset="0.809" stop-color="#39f339"/><stop offset="0.836" stop-color="#59ff59"/><stop offset="0.864" stop-color="#41ff41"/><stop offset="0.891" stop-color="#1ffd1f"/><stop offset="0.918" stop-color="#17fd17"/><stop offset="0.945" stop-color="#17ff17"/><stop offset="0.973" stop-color="#17ff17"/><stop offset="1.000" stop-color="#17de17"/></radialGradient>
<radialGradient id="r6" gradientUnits="userSpaceOnUse" cx="447.3" cy="274.3" r="108"><stop offset="0.509" stop-color="#174017"/><stop offset="0.537" stop-color="#174017"/><stop offset="0.564" stop-color="#174017"/><stop offset="0.591" stop-color="#174917"/><stop offset="0.618" stop-color="#175217"/><stop offset="0.646" stop-color="#175d17"/><stop offset="0.673" stop-color="#177417"/><stop offset="0.700" stop-color="#178a17"/><stop offset="0.727" stop-color="#179e17"/><stop offset="0.755" stop-color="#17b117"/><stop offset="0.782" stop-color="#1cc71c"/><stop offset="0.809" stop-color="#30eb30"/><stop offset="0.836" stop-color="#42ff42"/><stop offset="0.864" stop-color="#30ff30"/><stop offset="0.891" stop-color="#1dfe1d"/><stop offset="0.918" stop-color="#17ff17"/><stop offset="0.945" stop-color="#17ff17"/><stop offset="0.973" stop-color="#17ff17"/><stop offset="1.000" stop-color="#17e217"/></radialGradient>
<radialGradient id="r7" gradientUnits="userSpaceOnUse" cx="447.3" cy="274.3" r="108"><stop offset="0.509" stop-color="#174017"/><stop offset="0.537" stop-color="#174017"/><stop offset="0.564" stop-color="#174017"/><stop offset="0.591" stop-color="#174b17"/><stop offset="0.618" stop-color="#175317"/><stop offset="0.646" stop-color="#175b17"/><stop offset="0.673" stop-color="#177317"/><stop offset="0.700" stop-color="#178917"/><stop offset="0.727" stop-color="#179e17"/><stop offset="0.755" stop-color="#17b117"/><stop offset="0.782" stop-color="#1bc71b"/><stop offset="0.809" stop-color="#29e529"/><stop offset="0.836" stop-color="#32fc32"/><stop offset="0.864" stop-color="#29ff29"/><stop offset="0.891" stop-color="#20ff20"/><stop offset="0.918" stop-color="#19ff19"/><stop offset="0.945" stop-color="#17ff17"/><stop offset="0.973" stop-color="#17ff17"/><stop offset="1.000" stop-color="#17e517"/></radialGradient>
<radialGradient id="r8" gradientUnits="userSpaceOnUse" cx="447.3" cy="274.3" r="108"><stop offset="0.509" stop-color="#174017"/><stop offset="0.537" stop-color="#174017"/><stop offset="0.564" stop-color="#174317"/><stop offset="0.591" stop-color="#174d17"/><stop offset="0.618" stop-color="#175517"/><stop offset="0.646" stop-color="#175c17"/><stop offset="0.673" stop-color="#177217"/><stop offset="0.700" stop-color="#178917"/><stop offset="0.727" stop-color="#179d17"/><stop offset="0.755" stop-color="#17b117"/><stop offset="0.782" stop-color="#1bc61b"/><stop offset="0.809" stop-color="#23df23"/><stop offset="0.836" stop-color="#28f328"/><stop offset="0.864" stop-color="#2aff2a"/><stop offset="0.891" stop-color="#29ff29"/><stop offset="0.918" stop-color="#1cff1c"/><stop offset="0.945" stop-color="#17ff17"/><stop offset="0.973" stop-color="#17ff17"/><stop offset="1.000" stop-color="#17e717"/></radialGradient>
<radialGradient id="r9" gradientUnits="userSpaceOnUse" cx="447.3" cy="274.3" r="108"><stop offset="0.509" stop-color="#174017"/><stop offset="0.537" stop-color="#174017"/><stop offset="0.564" stop-color="#174517"/><stop offset="0.591" stop-color="#174f17"/><stop offset="0.618" stop-color="#175717"/><stop offset="0.646" stop-color="#175e17"/><stop offset="0.673" stop-color="#177217"/><stop offset="0.700" stop-color="#178817"/><stop offset="0.727" stop-color="#179d17"/><stop offset="0.755" stop-color="#17b117"/><stop offset="0.782" stop-color="#1ac61a"/><stop offset="0.809" stop-color="#1fdb1f"/><stop offset="0.836" stop-color="#23ef23"/><stop offset="0.864" stop-color="#32ff32"/><stop offset="0.891" stop-color="#39ff39"/><stop offset="0.918" stop-color="#22ff22"/><stop offset="0.945" stop-color="#17ff17"/><stop offset="0.973" stop-color="#17ff17"/><stop offset="1.000" stop-color="#17e817"/></radialGradient>
<radialGradient id="r10" gradientUnits="userSpaceOnUse" cx="447.3" cy="274.3" r="108"><stop offset="0.509" stop-color="#174017"/><stop offset="0.537" stop-color="#174017"/><stop offset="0.564" stop-color="#174817"/><stop offset="0.591" stop-color="#175117"/><stop offset="0.618" stop-color="#175917"/><stop offset="0.646" stop-color="#175f17"/><stop offset="0.673" stop-color="#177217"/><stop offset="0.700" stop-color="#178917"/><stop offset="0.727" stop-color="#179d17"/><stop offset="0.755" stop-color="#17b117"/><stop offset="0.782" stop-color="#19c519"/><stop offset="0.809" stop-color="#1cd81c"/><stop offset="0.836" stop-color="#22ed22"/><stop offset="0.864" stop-color="#3cff3c"/><stop offset="0.891" stop-color="#4fff4f"/><stop offset="0.918" stop-color="#2bff2b"/><stop offset="0.945" stop-color="#18ff18"/><stop offset="0.973" stop-color="#17ff17"/><stop offset="1.000" stop-color="#17e817"/></radialGradient>
<radialGradient id="r11" gradientUnits="userSpaceOnUse" cx="447.3" cy="274.3" r="108"><stop offset="0.509" stop-color="#174017"/><stop offset="0.537" stop-color="#174017"/><stop offset="0.564" stop-color="#174a17"/><stop offset="0.591" stop-color="#175317"/><stop offset="0.618" stop-color="#175b17"/><stop offset="0.646" stop-color="#176117"/><stop offset="0.673" stop-color="#177317"/><stop offset="0.700" stop-color="#178917"/><stop offset="0.727" stop-color="#179e17"/><stop offset="0.755" stop-color="#17b117"/><stop offset="0.782" stop-color="#19c419"/><stop offset="0.809" stop-color="#1ad61a"/><stop offset="0.836" stop-color="#21ec21"/><stop offset="0.864" stop-color="#46ff46"/><stop offset="0.891" stop-color="#64ff64"/><stop offset="0.918" stop-color="#34ff34"/><stop offset="0.945" stop-color="#18ff18"/><stop offset="0.973" stop-color="#17ff17"/><stop offset="1.000" stop-color="#17e617"/></radialGradient>
<radialGradient id="r12" gradientUnits="userSpaceOnUse" cx="447.3" cy="274.3" r="108"><stop offset="0.509" stop-color="#174017"/><stop offset="0.537" stop-color="#174217"/><stop offset="0.564" stop-color="#174d17"/><stop offset="0.591" stop-color="#175617"/><stop offset="0.618" stop-color="#175d17"/><stop offset="0.646" stop-color="#176317"/><stop offset="0.673" stop-color="#177417"/><stop offset="0.700" stop-color="#178a17"/><stop offset="0.727" stop-color="#179e17"/><stop offset="0.755" stop-color="#17b117"/><stop offset="0.782" stop-color="#18c318"/><stop offset="0.809" stop-color="#19d419"/><stop offset="0.836" stop-color="#21eb21"/><stop offset="0.864" stop-color="#4bff4b"/><stop offset="0.891" stop-color="#6eff6e"/><stop offset="0.918" stop-color="#39ff39"/><stop offset="0.945" stop-color="#18ff18"/><stop offset="0.973" stop-color="#17ff17"/><stop offset="1.000" stop-color="#17e317"/></radialGradient>
<radialGradient id="r13" gradientUnits="userSpaceOnUse" cx="447.3" cy="274.3" r="108"><stop offset="0.509" stop-color="#174017"/><stop offset="0.537" stop-color="#174617"/><stop offset="0.564" stop-color="#175017"/><stop offset="0.591" stop-color="#175917"/><stop offset="0.618" stop-color="#175f17"/><stop offset="0.646" stop-color="#176417"/><stop offset="0.673" stop-color="#177517"/><stop offset="0.700" stop-color="#178b17"/><stop offset="0.727" stop-color="#179e17"/><stop offset="0.755" stop-color="#17b117"/><stop offset="0.782" stop-color="#18c318"/><stop offset="0.809" stop-color="#18d318"/><stop offset="0.836" stop-color="#20e820"/><stop offset="0.864" stop-color="#48ff48"/><stop offset="0.891" stop-color="#69ff69"/><stop offset="0.918" stop-color="#36ff36"/><stop offset="0.945" stop-color="#18ff18"/><stop offset="0.973" stop-color="#17ff17"/><stop offset="1.000" stop-color="#17de17"/></radialGradient>
<radialGradient id="r14" gradientUnits="userSpaceOnUse" cx="447.3" cy="274.3" r="108"><stop offset="0.509" stop-color="#174017"/><stop offset="0.537" stop-color="#174917"/><stop offset="0.564" stop-color="#175417"/><stop offset="0.591" stop-color="#175b17"/><stop offset="0.618" stop-color="#176117"/><stop offset="0.646" stop-color="#176617"/><stop offset="0.673" stop-color="#177717"/><stop offset="0.700" stop-color="#178c17"/><stop offset="0.727" stop-color="#179f17"/><stop offset="0.755" stop-color="#17b117"/><stop offset="0.782" stop-color="#18c218"/><stop offset="0.809" stop-color="#18d118"/><stop offset="0.836" stop-color="#1fe51f"/><stop offset="0.864" stop-color="#40ff40"/><stop offset="0.891" stop-color="#57ff57"/><stop offset="0.918" stop-color="#2eff2e"/><stop offset="0.945" stop-color="#18ff18"/><stop offset="0.973" stop-color="#17fc17"/><stop offset="1.000" stop-color="#17d917"/></radialGradient>
<radialGradient id="r15" gradientUnits="userSpaceOnUse" cx="447.3" cy="274.3" r="108"><stop offset="0.509" stop-color="#174017"/><stop offset="0.537" stop-color="#174d17"/><stop offset="0.564" stop-color="#175717"/><stop offset="0.591" stop-color="#175e17"/><stop offset="0.618" stop-color="#176417"/><stop offset="0.646" stop-color="#176817"/><stop offset="0.673" stop-color="#177917"/><stop offset="0.700" stop-color="#178d17"/><stop offset="0.727" stop-color="#17a017"/><stop offset="0.755" stop-color="#17b117"/><stop offset="0.782" stop-color="#18c118"/><stop offset="0.809" stop-color="#18cf18"/><stop offset="0.836" stop-color="#1de11d"/><stop offset="0.864" stop-color="#34ff34"/><stop offset="0.891" stop-color="#41ff41"/><stop offset="0.918" stop-color="#25ff25"/><stop offset="0.945" stop-color="#17f917"/><stop offset="0.973" stop-color="#17f617"/><stop offset="1.000" stop-color="#17d217"/></radialGradient>
<radialGradient id="r16" gradientUnits="userSpaceOnUse" cx="447.3" cy="274.3" r="108"><stop offset="0.509" stop-color="#174017"/><stop offset="0.537" stop-color="#175117"/><stop offset="0.564" stop-color="#175a17"/><stop offset="0.591" stop-color="#176117"/><stop offset="0.618" stop-color="#176617"/><stop offset="0.646" stop-color="#176a17"/><stop offset="0.673" stop-color="#177c17"/><stop offset="0.700" stop-color="#178f17"/><stop offset="0.727" stop-color="#17a117"/><stop offset="0.755" stop-color="#17b117"/><stop offset="0.782" stop-color="#17c017"/><stop offset="0.809" stop-color="#17cd17"/><stop offset="0.836" stop-color="#1bdd1b"/><stop offset="0.864" stop-color="#29f429"/><stop offset="0.891" stop-color="#2eff2e"/><stop offset="0.918" stop-color="#1ef71e"/><stop offset="0.945" stop-color="#17f317"/><stop offset="0.973" stop-color="#17ef17"/><stop offset="1.000" stop-color="#17ca17"/></radialGradient>
<radialGradient id="r17" gradientUnits="userSpaceOnUse" cx="447.3" cy="274.3" r="108"><stop offset="0.509" stop-color="#174017"/><stop offset="0.537" stop-color="#175517"/><stop offset="0.564" stop-color="#175e17"/><stop offset="0.591" stop-color="#176417"/><stop offset="0.618" stop-color="#176917"/><stop offset="0.646" stop-color="#176c17"/><stop offset="0.673" stop-color="#177f17"/><stop offset="0.700" stop-color="#179117"/><stop offset="0.727" stop-color="#17a217"/><stop offset="0.755" stop-color="#17b117"/><stop offset="0.782" stop-color="#17bf17"/><stop offset="0.809" stop-color="#17cb17"/><stop offset="0.836" stop-color="#1ad81a"/><stop offset="0.864" stop-color="#20e820"/><stop offset="0.891" stop-color="#21f021"/><stop offset="0.918" stop-color="#19ed19"/><stop offset="0.945" stop-color="#17ec17"/><stop offset="0.973" stop-color="#17e717"/><stop offset="1.000" stop-color="#17c117"/></radialGradient>
<radialGradient id="r18" gradientUnits="userSpaceOnUse" cx="447.3" cy="274.3" r="108"><stop offset="0.509" stop-color="#174217"/><stop offset="0.537" stop-color="#175917"/><stop offset="0.564" stop-color="#176117"/><stop offset="0.591" stop-color="#176717"/><stop offset="0.618" stop-color="#176b17"/><stop offset="0.646" stop-color="#177017"/><stop offset="0.673" stop-color="#178217"/><stop offset="0.700" stop-color="#179317"/><stop offset="0.727" stop-color="#17a317"/><stop offset="0.755" stop-color="#17b117"/><stop offset="0.782" stop-color="#17be17"/><stop offset="0.809" stop-color="#17c917"/><stop offset="0.836" stop-color="#18d418"/><stop offset="0.864" stop-color="#1bdf1b"/><stop offset="0.891" stop-color="#1be41b"/><stop offset="0.918" stop-color="#18e518"/><stop offset="0.945" stop-color="#17e417"/><stop offset="0.973" stop-color="#17de17"/><stop offset="1.000" stop-color="#17ba17"/></radialGradient>
<radialGradient id="r19" gradientUnits="userSpaceOnUse" cx="447.3" cy="274.3" r="108"><stop offset="0.509" stop-color="#174617"/><stop offset="0.537" stop-color="#175d17"/><stop offset="0.564" stop-color="#176517"/><stop offset="0.591" stop-color="#176a17"/><stop offset="0.618" stop-color="#176d17"/><stop offset="0.646" stop-color="#177417"/><stop offset="0.673" stop-color="#178617"/><stop offset="0.700" stop-color="#179617"/><stop offset="0.727" stop-color="#17a417"/><stop offset="0.755" stop-color="#17b117"/><stop offset="0.782" stop-color="#17bc17"/><stop offset="0.809" stop-color="#17c617"/><stop offset="0.836" stop-color="#18cf18"/><stop offset="0.864" stop-color="#19d719"/><stop offset="0.891" stop-color="#18dc18"/><stop offset="0.918" stop-color="#17dd17"/><stop offset="0.945" stop-color="#17dc17"/><stop offset="0.973" stop-color="#17d417"/><stop offset="1.000" stop-color="#17b317"/></radialGradient>
<radialGradient id="r20" gradientUnits="userSpaceOnUse" cx="447.3" cy="274.3" r="108"><stop offset="0.509" stop-color="#174b17"/><stop offset="0.537" stop-color="#176117"/><stop offset="0.564" stop-color="#176817"/><stop offset="0.591" stop-color="#176d17"/><stop offset="0.618" stop-color="#177017"/><stop offset="0.646" stop-color="#177a17"/><stop offset="0.673" stop-color="#178a17"/><stop offset="0.700" stop-color="#179817"/><stop offset="0.727" stop-color="#18a618"/><stop offset="0.755" stop-color="#17b117"/><stop offset="0.782" stop-color="#17bb17"/><stop offset="0.809" stop-color="#17c417"/><stop offset="0.836" stop-color="#17cb17"/><stop offset="0.864" stop-color="#18d118"/><stop offset="0.891" stop-color="#17d417"/><stop offset="0.918" stop-color="#17d517"/><stop offset="0.945" stop-color="#17d317"/><stop offset="0.973" stop-color="#17ca17"/><stop offset="1.000" stop-color="#17ac17"/></radialGradient>
<radialGradient id="r21" gradientUnits="userSpaceOnUse" cx="447.3" cy="274.3" r="108"><stop offset="0.509" stop-color="#174f17"/><stop offset="0.537" stop-color="#176417"/><stop offset="0.564" stop-color="#176b17"/><stop offset="0.591" stop-color="#177017"/><stop offset="0.618" stop-color="#177217"/><stop offset="0.646" stop-color="#177f17"/><stop offset="0.673" stop-color="#178e17"/><stop offset="0.700" stop-color="#179b17"/><stop offset="0.727" stop-color="#18a718"/><stop offset="0.755" stop-color="#17b117"/><stop offset="0.782" stop-color="#17ba17"/><stop offset="0.809" stop-color="#17c117"/><stop offset="0.836" stop-color="#17c717"/><stop offset="0.864" stop-color="#17cb17"/><stop offset="0.891" stop-color="#17cd17"/><stop offset="0.918" stop-color="#17cd17"/><stop offset="0.945" stop-color="#17c917"/><stop offset="0.973" stop-color="#17bf17"/><stop offset="1.000" stop-color="#17a417"/></radialGradient>
<radialGradient id="r22" gradientUnits="userSpaceOnUse" cx="447.3" cy="274.3" r="108"><stop offset="0.509" stop-color="#175317"/><stop offset="0.537" stop-color="#176817"/><stop offset="0.564" stop-color="#176f17"/><stop offset="0.591" stop-color="#177217"/><stop offset="0.618" stop-color="#177617"/><stop offset="0.646" stop-color="#178517"/><stop offset="0.673" stop-color="#179217"/><stop offset="0.700" stop-color="#189f18"/><stop offset="0.727" stop-color="#18a918"/><stop offset="0.755" stop-color="#17b117"/><stop offset="0.782" stop-color="#17b817"/><stop offset="0.809" stop-color="#17be17"/><stop offset="0.836" stop-color="#17c217"/><stop offset="0.864" stop-color="#17c517"/><stop offset="0.891" stop-color="#17c617"/><stop offset="0.918" stop-color="#17c417"/><stop offset="0.945" stop-color="#17bf17"/><stop offset="0.973" stop-color="#17b417"/><stop offset="1.000" stop-color="#179b17"/></radialGradient>
<radialGradient id="r23" gradientUnits="userSpaceOnUse" cx="447.3" cy="274.3" r="108"><stop offset="0.509" stop-color="#175717"/><stop offset="0.537" stop-color="#176c17"/><stop offset="0.564" stop-color="#177217"/><stop offset="0.591" stop-color="#177517"/><stop offset="0.618" stop-color="#177d17"/><stop offset="0.646" stop-color="#178b17"/><stop offset="0.673" stop-color="#189718"/><stop offset="0.700" stop-color="#19a319"/><stop offset="0.727" stop-color="#18ab18"/><stop offset="0.755" stop-color="#17b117"/><stop offset="0.782" stop-color="#17b717"/><stop offset="0.809" stop-color="#17bb17"/><stop offset="0.836" stop-color="#17be17"/><stop offset="0.864" stop-color="#17bf17"/><stop offset="0.891" stop-color="#17be17"/><stop offset="0.918" stop-color="#17bb17"/><stop offset="0.945" stop-color="#17b417"/><stop offset="0.973" stop-color="#17a817"/><stop offset="1.000" stop-color="#179217"/></radialGradient>
<radialGradient id="r24" gradientUnits="userSpaceOnUse" cx="447.3" cy="274.3" r="108"><stop offset="0.509" stop-color="#175b17"/><stop offset="0.537" stop-color="#176f17"/><stop offset="0.564" stop-color="#177517"/><stop offset="0.591" stop-color="#177717"/><stop offset="0.618" stop-color="#178517"/><stop offset="0.646" stop-color="#179117"/><stop offset="0.673" stop-color="#199d19"/><stop offset="0.700" stop-color="#1aa71a"/><stop offset="0.727" stop-color="#19ad19"/><stop offset="0.755" stop-color="#17b117"/><stop offset="0.782" stop-color="#17b517"/><stop offset="0.809" stop-color="#17b817"/><stop offset="0.836" stop-color="#17b917"/><stop offset="0.864" stop-color="#17b917"/><stop offset="0.891" stop-color="#17b617"/><stop offset="0.918" stop-color="#17b217"/><stop offset="0.945" stop-color="#17a917"/><stop offset="0.973" stop-color="#179c17"/><stop offset="1.000" stop-color="#178817"/></radialGradient>
<radialGradient id="r25" gradientUnits="userSpaceOnUse" cx="447.3" cy="274.3" r="108"><stop offset="0.509" stop-color="#175e17"/><stop offset="0.537" stop-color="#177217"/><stop offset="0.564" stop-color="#177717"/><stop offset="0.591" stop-color="#178017"/><stop offset="0.618" stop-color="#178d17"/><stop offset="0.646" stop-color="#189818"/><stop offset="0.673" stop-color="#1aa41a"/><stop offset="0.700" stop-color="#1cac1c"/><stop offset="0.727" stop-color="#19af19"/><stop offset="0.755" stop-color="#17b117"/><stop offset="0.782" stop-color="#17b317"/><stop offset="0.809" stop-color="#17b517"/><stop offset="0.836" stop-color="#17b417"/><stop offset="0.864" stop-color="#17b217"/><stop offset="0.891" stop-color="#17af17"/><stop offset="0.918" stop-color="#17a817"/><stop offset="0.945" stop-color="#179e17"/><stop offset="0.973" stop-color="#179317"/><stop offset="1.000" stop-color="#177d17"/></radialGradient>
<radialGradient id="r26" gradientUnits="userSpaceOnUse" cx="447.3" cy="274.3" r="108"><stop offset="0.509" stop-color="#176217"/><stop offset="0.537" stop-color="#177517"/><stop offset="0.564" stop-color="#177a17"/><stop offset="0.591" stop-color="#178917"/><stop offset="0.618" stop-color="#179517"/><stop offset="0.646" stop-color="#19a019"/><stop offset="0.673" stop-color="#1eac1e"/><stop offset="0.700" stop-color="#1fb21f"/><stop offset="0.727" stop-color="#1ab11a"/><stop offset="0.755" stop-color="#17b117"/><stop offset="0.782" stop-color="#17b217"/><stop offset="0.809" stop-color="#17b117"/><stop offset="0.836" stop-color="#17b017"/><stop offset="0.864" stop-color="#17ac17"/><stop offset="0.891" stop-color="#17a617"/><stop offset="0.918" stop-color="#179e17"/><stop offset="0.945" stop-color="#179317"/><stop offset="0.973" stop-color="#178917"/><stop offset="1.000" stop-color="#177217"/></radialGradient>
<radialGradient id="r27" gradientUnits="userSpaceOnUse" cx="447.3" cy="274.3" r="108"><stop offset="0.509" stop-color="#176517"/><stop offset="0.537" stop-color="#177817"/><stop offset="0.564" stop-color="#178617"/><stop offset="0.591" stop-color="#179317"/><stop offset="0.618" stop-color="#179d17"/><stop offset="0.646" stop-color="#1ca91c"/><stop offset="0.673" stop-color="#25b825"/><stop offset="0.700" stop-color="#23ba23"/><stop offset="0.727" stop-color="#1bb41b"/><stop offset="0.755" stop-color="#17b117"/><stop offset="0.782" stop-color="#17b017"/><stop offset="0.809" stop-color="#17ae17"/><stop offset="0.836" stop-color="#17ab17"/><stop offset="0.864" stop-color="#17a517"/><stop offset="0.891" stop-color="#179e17"/><stop offset="0.918" stop-color="#179517"/><stop offset="0.945" stop-color="#178817"/><stop offset="0.973" stop-color="#177e17"/><stop offset="1.000" stop-color="#176617"/></radialGradient>
<radialGradient id="r28" gradientUnits="userSpaceOnUse" cx="447.3" cy="274.3" r="108"><stop offset="0.509" stop-color="#176817"/><stop offset="0.537" stop-color="#178017"/><stop offset="0.564" stop-color="#179117"/><stop offset="0.591" stop-color="#179d17"/><stop offset="0.618" stop-color="#18a618"/><stop offset="0.646" stop-color="#22b622"/><stop offset="0.673" stop-color="#30c730"/><stop offset="0.700" stop-color="#29c329"/><stop offset="0.727" stop-color="#1bb61b"/><stop offset="0.755" stop-color="#17b117"/><stop offset="0.782" stop-color="#17af17"/><stop offset="0.809" stop-color="#17ab17"/><stop offset="0.836" stop-color="#17a617"/><stop offset="0.864" stop-color="#179f17"/><stop offset="0.891" stop-color="#179617"/><stop offset="0.918" stop-color="#178b17"/><stop offset="0.945" stop-color="#177c17"/><stop offset="0.973" stop-color="#177417"/><stop offset="1.000" stop-color="#175a17"/></radialGradient>
<radialGradient id="r29" gradientUnits="userSpaceOnUse" cx="447.3" cy="274.3" r="108"><stop offset="0.509" stop-color="#176a17"/><stop offset="0.537" stop-color="#178d17"/><stop offset="0.564" stop-color="#179d17"/><stop offset="0.591" stop-color="#17a717"/><stop offset="0.618" stop-color="#1ab01a"/><stop offset="0.646" stop-color="#2dc82d"/><stop offset="0.673" stop-color="#41dd41"/><stop offset="0.700" stop-color="#30cd30"/><stop offset="0.727" stop-color="#1cb91c"/><stop offset="0.755" stop-color="#17b117"/><stop offset="0.782" stop-color="#17ad17"/><stop offset="0.809" stop-color="#17a817"/><stop offset="0.836" stop-color="#17a117"/><stop offset="0.864" stop-color="#179817"/><stop offset="0.891" stop-color="#178e17"/><stop offset="0.918" stop-color="#178117"/><stop offset="0.945" stop-color="#177217"/><stop offset="0.973" stop-color="#176917"/><stop offset="1.000" stop-color="#174e17"/></radialGradient>
<radialGradient id="r30" gradientUnits="userSpaceOnUse" cx="447.3" cy="274.3" r="108"><stop offset="0.509" stop-color="#176d17"/><stop offset="0.537" stop-color="#179917"/><stop offset="0.564" stop-color="#17a817"/><stop offset="0.591" stop-color="#17b017"/><stop offset="0.618" stop-color="#1ebc1e"/><stop offset="0.646" stop-color="#40e140"/><stop offset="0.673" stop-color="#59fa59"/><stop offset="0.700" stop-color="#39da39"/><stop offset="0.727" stop-color="#1dbb1d"/><stop offset="0.755" stop-color="#17b117"/><stop offset="0.782" stop-color="#17ab17"/><stop offset="0.809" stop-color="#17a417"/><stop offset="0.836" stop-color="#179c17"/><stop offset="0.864" stop-color="#179217"/><stop offset="0.891" stop-color="#178617"/><stop offset="0.918" stop-color="#177817"/><stop offset="0.945" stop-color="#176917"/><stop offset="0.973" stop-color="#175e17"/><stop offset="1.000" stop-color="#174217"/></radialGradient>
<radialGradient id="r31" gradientUnits="userSpaceOnUse" cx="447.3" cy="274.3" r="108"><stop offset="0.509" stop-color="#177817"/><stop offset="0.537" stop-color="#17a617"/><stop offset="0.564" stop-color="#17b317"/><stop offset="0.591" stop-color="#17ba17"/><stop offset="0.618" stop-color="#24ca24"/><stop offset="0.646" stop-color="#5cff5c"/><stop offset="0.673" stop-color="#77ff77"/><stop offset="0.700" stop-color="#43e743"/><stop offset="0.727" stop-color="#1ebe1e"/><stop offset="0.755" stop-color="#17b117"/><stop offset="0.782" stop-color="#17aa17"/><stop offset="0.809" stop-color="#17a117"/><stop offset="0.836" stop-color="#179717"/><stop offset="0.864" stop-color="#178c17"/><stop offset="0.891" stop-color="#177e17"/><stop offset="0.918" stop-color="#176e17"/><stop offset="0.945" stop-color="#175f17"/><stop offset="0.973" stop-color="#175417"/><stop offset="1.000" stop-color="#174017"/></radialGradient>
<radialGradient id="r32" gradientUnits="userSpaceOnUse" cx="447.3" cy="274.3" r="108"><stop offset="0.509" stop-color="#178617"/><stop offset="0.537" stop-color="#17b217"/><stop offset="0.564" stop-color="#17bd17"/><stop offset="0.591" stop-color="#18c418"/><stop offset="0.618" stop-color="#2ddb2d"/><stop offset="0.646" stop-color="#7eff7e"/><stop offset="0.673" stop-color="#99ff99"/><stop offset="0.700" stop-color="#4df44d"/><stop offset="0.727" stop-color="#1fc01f"/><stop offset="0.755" stop-color="#17b117"/><stop offset="0.782" stop-color="#17a817"/><stop offset="0.809" stop-color="#179e17"/><stop offset="0.836" stop-color="#179317"/><stop offset="0.864" stop-color="#178617"/><stop offset="0.891" stop-color="#177717"/><stop offset="0.918" stop-color="#176517"/><stop offset="0.945" stop-color="#175617"/><stop offset="0.973" stop-color="#174917"/><stop offset="1.000" stop-color="#174017"/></radialGradient>
<radialGradient id="r33" gradientUnits="userSpaceOnUse" cx="447.3" cy="274.3" r="108"><stop offset="0.509" stop-color="#179317"/><stop offset="0.537" stop-color="#17bd17"/><stop offset="0.564" stop-color="#17c717"/><stop offset="0.591" stop-color="#18cd18"/><stop offset="0.618" stop-color="#38ed38"/><stop offset="0.646" stop-color="#a4ffa4"/><stop offset="0.673" stop-color="#bcffbc"/><stop offset="0.700" stop-color="#56ff56"/><stop offset="0.727" stop-color="#20c220"/><stop offset="0.755" stop-color="#17b117"/><stop offset="0.782" stop-color="#17a717"/><stop offset="0.809" stop-color="#179b17"/><stop offset="0.836" stop-color="#178e17"/><stop offset="0.864" stop-color="#178017"/><stop offset="0.891" stop-color="#176f17"/><stop offset="0.918" stop-color="#175c17"/><stop offset="0.945" stop-color="#174d17"/><stop offset="0.973" stop-color="#174017"/><stop offset="1.000" stop-color="#174017"/></radialGradient>
<radialGradient id="r34" gradientUnits="userSpaceOnUse" cx="447.3" cy="274.3" r="108"><stop offset="0.509" stop-color="#179f17"/><stop offset="0.537" stop-color="#17c917"/><stop offset="0.564" stop-color="#17d117"/><stop offset="0.591" stop-color="#19d619"/><stop offset="0.618" stop-color="#42fe42"/><stop offset="0.646" stop-color="#c5ffc5"/><stop offset="0.673" stop-color="#d7ffd7"/><stop offset="0.700" stop-color="#5dff5d"/><stop offset="0.727" stop-color="#20c420"/><stop offset="0.755" stop-color="#17b117"/><stop offset="0.782" stop-color="#17a517"/><stop offset="0.809" stop-color="#179917"/><stop offset="0.836" stop-color="#178a17"/><stop offset="0.864" stop-color="#177a17"/><stop offset="0.891" stop-color="#176917"/><stop offset="0.918" stop-color="#175417"/><stop offset="0.945" stop-color="#174417"/><stop offset="0.973" stop-color="#174017"/><stop offset="1.000" stop-color="#174017"/></radialGradient>
<radialGradient id="r35" gradientUnits="userSpaceOnUse" cx="447.3" cy="274.3" r="108"><stop offset="0.509" stop-color="#17ab17"/><stop offset="0.537" stop-color="#17d317"/><stop offset="0.564" stop-color="#17da17"/><stop offset="0.591" stop-color="#19de19"/><stop offset="0.618" stop-color="#48ff48"/><stop offset="0.646" stop-color="#d8ffd8"/><stop offset="0.673" stop-color="#e7ffe7"/><stop offset="0.700" stop-color="#61ff61"/><stop offset="0.727" stop-color="#20c520"/><stop offset="0.755" stop-color="#17b117"/><stop offset="0.782" stop-color="#17a417"/><stop offset="0.809" stop-color="#179617"/><stop offset="0.836" stop-color="#178617"/><stop offset="0.864" stop-color="#177517"/><stop offset="0.891" stop-color="#176217"/><stop offset="0.918" stop-color="#174c17"/><stop offset="0.945" stop-color="#174017"/><stop offset="0.973" stop-color="#174017"/><stop offset="1.000" stop-color="#174017"/></radialGradient>
<radialGradient id="r36" gradientUnits="userSpaceOnUse" cx="447.3" cy="274.3" r="108"><stop offset="0.509" stop-color="#17b617"/><stop offset="0.537" stop-color="#17dd17"/><stop offset="0.564" stop-color="#17e317"/><stop offset="0.591" stop-color="#19e519"/><stop offset="0.618" stop-color="#48ff48"/><stop offset="0.646" stop-color="#d8ffd8"/><stop offset="0.673" stop-color="#e7ffe7"/><stop offset="0.700" stop-color="#61ff61"/><stop offset="0.727" stop-color="#20c720"/><stop offset="0.755" stop-color="#17b117"/><stop offset="0.782" stop-color="#17a317"/><stop offset="0.809" stop-color="#179417"/><stop offset="0.836" stop-color="#178317"/><stop offset="0.864" stop-color="#177017"/><stop offset="0.891" stop-color="#175c17"/><stop offset="0.918" stop-color="#174517"/><stop offset="0.945" stop-color="#174017"/><stop offset="0.973" stop-color="#174017"/><stop offset="1.000" stop-color="#174017"/></radialGradient>
<radialGradient id="r37" gradientUnits="userSpaceOnUse" cx="447.3" cy="274.3" r="108"><stop offset="0.509" stop-color="#17c017"/><stop offset="0.537" stop-color="#17e617"/><stop offset="0.564" stop-color="#17eb17"/><stop offset="0.591" stop-color="#19eb19"/><stop offset="0.618" stop-color="#42ff42"/><stop offset="0.646" stop-color="#c5ffc5"/><stop offset="0.673" stop-color="#d7ffd7"/><stop offset="0.700" stop-color="#5eff5e"/><stop offset="0.727" stop-color="#20c720"/><stop offset="0.755" stop-color="#17b117"/><stop offset="0.782" stop-color="#17a217"/><stop offset="0.809" stop-color="#179117"/><stop offset="0.836" stop-color="#177f17"/><stop offset="0.864" stop-color="#176c17"/><stop offset="0.891" stop-color="#175617"/><stop offset="0.918" stop-color="#174417"/><stop offset="0.945" stop-color="#174017"/><stop offset="0.973" stop-color="#174017"/><stop offset="1.000" stop-color="#174017"/></radialGradient>
<radialGradient id="r38" gradientUnits="userSpaceOnUse" cx="447.3" cy="274.3" r="108"><stop offset="0.509" stop-color="#17c917"/><stop offset="0.537" stop-color="#17ee17"/><stop offset="0.564" stop-color="#17f217"/><stop offset="0.591" stop-color="#18f118"/><stop offset="0.618" stop-color="#38ff38"/><stop offset="0.646" stop-color="#a4ffa4"/><stop offset="0.673" stop-color="#bcffbc"/><stop offset="0.700" stop-color="#56ff56"/><stop offset="0.727" stop-color="#20c820"/><stop offset="0.755" stop-color="#17b117"/><stop offset="0.782" stop-color="#17a117"/><stop offset="0.809" stop-color="#178f17"/><stop offset="0.836" stop-color="#177c17"/><stop offset="0.864" stop-color="#176817"/><stop offset="0.891" stop-color="#175117"/><stop offset="0.918" stop-color="#174517"/><stop offset="0.945" stop-color="#174017"/><stop offset="0.973" stop-color="#174017"/><stop offset="1.000" stop-color="#174017"/></radialGradient>
<radialGradient id="r39" gradientUnits="userSpaceOnUse" cx="447.3" cy="274.3" r="108"><stop offset="0.509" stop-color="#17d117"/><stop offset="0.537" stop-color="#17f517"/><stop offset="0.564" stop-color="#17f817"/><stop offset="0.591" stop-color="#18f618"/><stop offset="0.618" stop-color="#2dff2d"/><stop offset="0.646" stop-color="#7fff7f"/><stop offset="0.673" stop-color="#9aff9a"/><stop offset="0.700" stop-color="#4dff4d"/><stop offset="0.727" stop-color="#1fc81f"/><stop offset="0.755" stop-color="#17b117"/><stop offset="0.782" stop-color="#17a017"/><stop offset="0.809" stop-color="#178e17"/><stop offset="0.836" stop-color="#177a17"/><stop offset="0.864" stop-color="#176417"/><stop offset="0.891" stop-color="#174f17"/><stop offset="0.918" stop-color="#174517"/><stop offset="0.945" stop-color="#174017"/><stop offset="0.973" stop-color="#174017"/><stop offset="1.000" stop-color="#174017"/></radialGradient>
<radialGradient id="r40" gradientUnits="userSpaceOnUse" cx="447.3" cy="274.3" r="108"><stop offset="0.509" stop-color="#17d817"/><stop offset="0.537" stop-color="#17fb17"/><stop offset="0.564" stop-color="#17fd17"/><stop offset="0.591" stop-color="#17fa17"/><stop offset="0.618" stop-color="#24ff24"/><stop offset="0.646" stop-color="#5cff5c"/><stop offset="0.673" stop-color="#77ff77"/><stop offset="0.700" stop-color="#43fc43"/><stop offset="0.727" stop-color="#1ec81e"/><stop offset="0.755" stop-color="#17b117"/><stop offset="0.782" stop-color="#179f17"/><stop offset="0.809" stop-color="#178c17"/><stop offset="0.836" stop-color="#177817"/><stop offset="0.864" stop-color="#176117"/><stop offset="0.891" stop-color="#175017"/><stop offset="0.918" stop-color="#174617"/><stop offset="0.945" stop-color="#174017"/><stop offset="0.973" stop-color="#174017"/><stop offset="1.000" stop-color="#174017"/></radialGradient>
<radialGradient id="r41" gradientUnits="userSpaceOnUse" cx="447.3" cy="274.3" r="108"><stop offset="0.509" stop-color="#17de17"/><stop offset="0.537" stop-color="#17ff17"/><stop offset="0.564" stop-color="#17ff17"/><stop offset="0.591" stop-color="#17fd17"/><stop offset="0.618" stop-color="#1ffd1f"/><stop offset="0.646" stop-color="#41ff41"/><stop offset="0.673" stop-color="#59ff59"/><stop offset="0.700" stop-color="#39f339"/><stop offset="0.727" stop-color="#1dc81d"/><stop offset="0.755" stop-color="#17b117"/><stop offset="0.782" stop-color="#179e17"/><stop offset="0.809" stop-color="#178b17"/><stop offset="0.836" stop-color="#177617"/><stop offset="0.864" stop-color="#175f17"/><stop offset="0.891" stop-color="#175117"/><stop offset="0.918" stop-color="#174817"/><stop offset="0.945" stop-color="#174017"/><stop offset="0.973" stop-color="#174017"/><stop offset="1.000" stop-color="#174017"/></radialGradient>
<radialGradient id="r42" gradientUnits="userSpaceOnUse" cx="447.3" cy="274.3" r="108"><stop offset="0.509" stop-color="#17e217"/><stop offset="0.537" stop-color="#17ff17"/><stop offset="0.564" stop-color="#17ff17"/><stop offset="0.591" stop-color="#17ff17"/><stop offset="0.618" stop-color="#1dfe1d"/><stop offset="0.646" stop-color="#30ff30"/><stop offset="0.673" stop-color="#42ff42"/><stop offset="0.700" stop-color="#30eb30"/><stop offset="0.727" stop-color="#1cc71c"/><stop offset="0.755" stop-color="#17b117"/><stop offset="0.782" stop-color="#179e17"/><stop offset="0.809" stop-color="#178a17"/><stop offset="0.836" stop-color="#177417"/><stop offset="0.864" stop-color="#175d17"/><stop offset="0.891" stop-color="#175217"/><stop offset="0.918" stop-color="#174917"/><stop offset="0.945" stop-color="#174017"/><stop offset="0.973" stop-color="#174017"/><stop offset="1.000" stop-color="#174017"/></radialGradient>
<radialGradient id="r43" gradientUnits="userSpaceOnUse" cx="447.3" cy="274.3" r="108"><stop offset="0.509" stop-color="#17e517"/><stop offset="0.537" stop-color="#17ff17"/><stop offset="0.564" stop-color="#17ff17"/><stop offset="0.591" stop-color="#19ff19"/><stop offset="0.618" stop-color="#20ff20"/><stop offset="0.646" stop-color="#29ff29"/><stop offset="0.673" stop-color="#32fc32"/><stop offset="0.700" stop-color="#29e529"/><stop offset="0.727" stop-color="#1bc71b"/><stop offset="0.755" stop-color="#17b117"/><stop offset="0.782" stop-color="#179e17"/><stop offset="0.809" stop-color="#178917"/><stop offset="0.836" stop-color="#177317"/><stop offset="0.864" stop-color="#175b17"/><stop offset="0.891" stop-color="#175317"/><stop offset="0.918" stop-color="#174b17"/><stop offset="0.945" stop-color="#174017"/><stop offset="0.973" stop-color="#174017"/><stop offset="1.000" stop-color="#174017"/></radialGradient>
<radialGradient id="r44" gradientUnits="userSpaceOnUse" cx="447.3" cy="274.3" r="108"><stop offset="0.509" stop-color="#17e717"/><stop offset="0.537" stop-color="#17ff17"/><stop offset="0.564" stop-color="#17ff17"/><stop offset="0.591" stop-color="#1cff1c"/><stop offset="0.618" stop-color="#29ff29"/><stop offset="0.646" stop-color="#2aff2a"/><stop offset="0.673" stop-color="#28f328"/><stop offset="0.700" stop-color="#23df23"/><stop offset="0.727" stop-color="#1bc61b"/><stop offset="0.755" stop-color="#17b117"/><stop offset="0.782" stop-color="#179d17"/><stop offset="0.809" stop-color="#178917"/><stop offset="0.836" stop-color="#177217"/><stop offset="0.864" stop-color="#175c17"/><stop offset="0.891" stop-color="#175517"/><stop offset="0.918" stop-color="#174d17"/><stop offset="0.945" stop-color="#174317"/><stop offset="0.973" stop-color="#174017"/><stop offset="1.000" stop-color="#174017"/></radialGradient>
<radialGradient id="r45" gradientUnits="userSpaceOnUse" cx="447.3" cy="274.3" r="108"><stop offset="0.509" stop-color="#17e817"/><stop offset="0.537" stop-color="#17ff17"/><stop offset="0.564" stop-color="#17ff17"/><stop offset="0.591" stop-color="#22ff22"/><stop offset="0.618" stop-color="#39ff39"/><stop offset="0.646" stop-color="#32ff32"/><stop offset="0.673" stop-color="#23ef23"/><stop offset="0.700" stop-color="#1fdb1f"/><stop offset="0.727" stop-color="#1ac61a"/><stop offset="0.755" stop-color="#17b117"/><stop offset="0.782" stop-color="#179d17"/><stop offset="0.809" stop-color="#178817"/><stop offset="0.836" stop-color="#177217"/><stop offset="0.864" stop-color="#175e17"/><stop offset="0.891" stop-color="#175717"/><stop offset="0.918" stop-color="#174f17"/><stop offset="0.945" stop-color="#174517"/><stop offset="0.973" stop-color="#174017"/><stop offset="1.000" stop-color="#174017"/></radialGradient>
<radialGradient id="r46" gradientUnits="userSpaceOnUse" cx="447.3" cy="274.3" r="108"><stop offset="0.509" stop-color="#17e817"/><stop offset="0.537" stop-color="#17ff17"/><stop offset="0.564" stop-color="#18ff18"/><stop offset="0.591" stop-color="#2bff2b"/><stop offset="0.618" stop-color="#4fff4f"/><stop offset="0.646" stop-color="#3cff3c"/><stop offset="0.673" stop-color="#22ed22"/><stop offset="0.700" stop-color="#1cd81c"/><stop offset="0.727" stop-color="#19c519"/><stop offset="0.755" stop-color="#17b117"/><stop offset="0.782" stop-color="#179d17"/><stop offset="0.809" stop-color="#178917"/><stop offset="0.836" stop-color="#177217"/><stop offset="0.864" stop-color="#175f17"/><stop offset="0.891" stop-color="#175917"/><stop offset="0.918" stop-color="#175117"/><stop offset="0.945" stop-color="#174817"/><stop offset="0.973" stop-color="#174017"/><stop offset="1.000" stop-color="#174017"/></radialGradient>
<radialGradient id="r47" gradientUnits="userSpaceOnUse" cx="447.3" cy="274.3" r="108"><stop offset="0.509" stop-color="#17e617"/><stop offset="0.537" stop-color="#17ff17"/><stop offset="0.564" stop-color="#18ff18"/><stop offset="0.591" stop-color="#34ff34"/><stop offset="0.618" stop-color="#64ff64"/><stop offset="0.646" stop-color="#46ff46"/><stop offset="0.673" stop-color="#21ec21"/><stop offset="0.700" stop-color="#1ad61a"/><stop offset="0.727" stop-color="#19c419"/><stop offset="0.755" stop-color="#17b117"/><stop offset="0.782" stop-color="#179e17"/><stop offset="0.809" stop-color="#178917"/><stop offset="0.836" stop-color="#177317"/><stop offset="0.864" stop-color="#176117"/><stop offset="0.891" stop-color="#175b17"/><stop offset="0.918" stop-color="#175317"/><stop offset="0.945" stop-color="#174a17"/><stop offset="0.973" stop-color="#174017"/><stop offset="1.000" stop-color="#174017"/></radialGradient>
<radialGradient id="r48" gradientUnits="userSpaceOnUse" cx="447.3" cy="274.3" r="108"><stop offset="0.509" stop-color="#17e317"/><stop offset="0.537" stop-color="#17ff17"/><stop offset="0.564" stop-color="#18ff18"/><stop offset="0.591" stop-color="#39ff39"/><stop offset="0.618" stop-color="#6eff6e"/><stop offset="0.646" stop-color="#4bff4b"/><stop offset="0.673" stop-color="#21eb21"/><stop offset="0.700" stop-color="#19d419"/><stop offset="0.727" stop-color="#18c318"/><stop offset="0.755" stop-color="#17b117"/><stop offset="0.782" stop-color="#179e17"/><stop offset="0.809" stop-color="#178a17"/><stop offset="0.836" stop-color="#177417"/><stop offset="0.864" stop-color="#176317"/><stop offset="0.891" stop-color="#175d17"/><stop offset="0.918" stop-color="#175617"/><stop offset="0.945" stop-color="#174d17"/><stop offset="0.973" stop-color="#174217"/><stop offset="1.000" stop-color="#174017"/></radialGradient>
<radialGradient id="r49" gradientUnits="userSpaceOnUse" cx="447.3" cy="274.3" r="108"><stop offset="0.509" stop-color="#17de17"/><stop offset="0.537" stop-color="#17ff17"/><stop offset="0.564" stop-color="#18ff18"/><stop offset="0.591" stop-color="#36ff36"/><stop offset="0.618" stop-color="#69ff69"/><stop offset="0.646" stop-color="#48ff48"/><stop offset="0.673" stop-color="#20e820"/><stop offset="0.700" stop-color="#18d318"/><stop offset="0.727" stop-color="#18c318"/><stop offset="0.755" stop-color="#17b117"/><stop offset="0.782" stop-color="#179e17"/><stop offset="0.809" stop-color="#178b17"/><stop offset="0.836" stop-color="#177517"/><stop offset="0.864" stop-color="#176417"/><stop offset="0.891" stop-color="#175f17"/><stop offset="0.918" stop-color="#175917"/><stop offset="0.945" stop-color="#175017"/><stop offset="0.973" stop-color="#174617"/><stop offset="1.000" stop-color="#174017"/></radialGradient>
<radialGradient id="r50" gradientUnits="userSpaceOnUse" cx="447.3" cy="274.3" r="108"><stop offset="0.509" stop-color="#17d917"/><stop offset="0.537" stop-color="#17fc17"/><stop offset="0.564" stop-color="#18ff18"/><stop offset="0.591" stop-color="#2eff2e"/><stop offset="0.618" stop-color="#57ff57"/><stop offset="0.646" stop-color="#40ff40"/><stop offset="0.673" stop-color="#1fe51f"/><stop offset="0.700" stop-color="#18d118"/><stop offset="0.727" stop-color="#18c218"/><stop offset="0.755" stop-color="#17b117"/><stop offset="0.782" stop-color="#179f17"/><stop offset="0.809" stop-color="#178c17"/><stop offset="0.836" stop-color="#177717"/><stop offset="0.864" stop-color="#176617"/><stop offset="0.891" stop-color="#176117"/><stop offset="0.918" stop-color="#175b17"/><stop offset="0.945" stop-color="#175417"/><stop offset="0.973" stop-color="#174917"/><stop offset="1.000" stop-color="#174017"/></radialGradient>
<radialGradient id="r51" gradientUnits="userSpaceOnUse" cx="447.3" cy="274.3" r="108"><stop offset="0.509" stop-color="#17d217"/><stop offset="0.537" stop-color="#17f617"/><stop offset="0.564" stop-color="#17f917"/><stop offset="0.591" stop-color="#25ff25"/><stop offset="0.618" stop-color="#41ff41"/><stop offset="0.646" stop-color="#34ff34"/><stop offset="0.673" stop-color="#1de11d"/><stop offset="0.700" stop-color="#18cf18"/><stop offset="0.727" stop-color="#18c118"/><stop offset="0.755" stop-color="#17b117"/><stop offset="0.782" stop-color="#17a017"/><stop offset="0.809" stop-color="#178d17"/><stop offset="0.836" stop-color="#177917"/><stop offset="0.864" stop-color="#176817"/><stop offset="0.891" stop-color="#176417"/><stop offset="0.918" stop-color="#175e17"/><stop offset="0.945" stop-color="#175717"/><stop offset="0.973" stop-color="#174d17"/><stop offset="1.000" stop-color="#174017"/></radialGradient>
<radialGradient id="r52" gradientUnits="userSpaceOnUse" cx="447.3" cy="274.3" r="108"><stop offset="0.509" stop-color="#17ca17"/><stop offset="0.537" stop-color="#17ef17"/><stop offset="0.564" stop-color="#17f317"/><stop offset="0.591" stop-color="#1ef71e"/><stop offset="0.618" stop-color="#2eff2e"/><stop offset="0.646" stop-color="#29f429"/><stop offset="0.673" stop-color="#1bdd1b"/><stop offset="0.700" stop-color="#17cd17"/><stop offset="0.727" stop-color="#17c017"/><stop offset="0.755" stop-color="#17b117"/><stop offset="0.782" stop-color="#17a117"/><stop offset="0.809" stop-color="#178f17"/><stop offset="0.836" stop-color="#177c17"/><stop offset="0.864" stop-color="#176a17"/><stop offset="0.891" stop-color="#176617"/><stop offset="0.918" stop-color="#176117"/><stop offset="0.945" stop-color="#175a17"/><stop offset="0.973" stop-color="#175117"/><stop offset="1.000" stop-color="#174017"/></radialGradient>
<radialGradient id="r53" gradientUnits="userSpaceOnUse" cx="447.3" cy="274.3" r="108"><stop offset="0.509" stop-color="#17c117"/><stop offset="0.537" stop-color="#17e717"/><stop offset="0.564" stop-color="#17ec17"/><stop offset="0.591" stop-color="#19ed19"/><stop offset="0.618" stop-color="#21f021"/><stop offset="0.646" stop-color="#20e820"/><stop offset="0.673" stop-color="#1ad81a"/><stop offset="0.700" stop-color="#17cb17"/><stop offset="0.727" stop-color="#17bf17"/><stop offset="0.755" stop-color="#17b117"/><stop offset="0.782" stop-color="#17a217"/><stop offset="0.809" stop-color="#179117"/><stop offset="0.836" stop-color="#177f17"/><stop offset="0.864" stop-color="#176c17"/><stop offset="0.891" stop-color="#176917"/><stop offset="0.918" stop-color="#176417"/><stop offset="0.945" stop-color="#175e17"/><stop offset="0.973" stop-color="#175517"/><stop offset="1.000" stop-color="#174017"/></radialGradient>
<radialGradient id="r54" gradientUnits="userSpaceOnUse" cx="447.3" cy="274.3" r="108"><stop offset="0.509" stop-color="#17ba17"/><stop offset="0.537" stop-color="#17de17"/><stop offset="0.564" stop-color="#17e417"/><stop offset="0.591" stop-color="#18e518"/><stop offset="0.618" stop-color="#1be41b"/><stop offset="0.646" stop-color="#1bdf1b"/><stop offset="0.673" stop-color="#18d418"/><stop offset="0.700" stop-color="#17c917"/><stop offset="0.727" stop-color="#17be17"/><stop offset="0.755" stop-color="#17b117"/><stop offset="0.782" stop-color="#17a317"/><stop offset="0.809" stop-color="#179317"/><stop offset="0.836" stop-color="#178217"/><stop offset="0.864" stop-color="#177017"/><stop offset="0.891" stop-color="#176b17"/><stop offset="0.918" stop-color="#176717"/><stop offset="0.945" stop-color="#176117"/><stop offset="0.973" stop-color="#175917"/><stop offset="1.000" stop-color="#174217"/></radialGradient>
<radialGradient id="r55" gradientUnits="userSpaceOnUse" cx="447.3" cy="274.3" r="108"><stop offset="0.509" stop-color="#17b317"/><stop offset="0.537" stop-color="#17d417"/><stop offset="0.564" stop-color="#17dc17"/><stop offset="0.591" stop-color="#17dd17"/><stop offset="0.618" stop-color="#18dc18"/><stop offset="0.646" stop-color="#19d719"/><stop offset="0.673" stop-color="#18cf18"/><stop offset="0.700" stop-color="#17c617"/><stop offset="0.727" stop-color="#17bc17"/><stop offset="0.755" stop-color="#17b117"/><stop offset="0.782" stop-color="#17a417"/><stop offset="0.809" stop-color="#179617"/><stop offset="0.836" stop-color="#178617"/><stop offset="0.864" stop-color="#177417"/><stop offset="0.891" stop-color="#176d17"/><stop offset="0.918" stop-color="#176a17"/><stop offset="0.945" stop-color="#176517"/><stop offset="0.973" stop-color="#175d17"/><stop offset="1.000" stop-color="#174617"/></radialGradient>
<radialGradient id="r56" gradientUnits="userSpaceOnUse" cx="447.3" cy="274.3" r="108"><stop offset="0.509" stop-color="#17ac17"/><stop offset="0.537" stop-color="#17ca17"/><stop offset="0.564" stop-color="#17d317"/><stop offset="0.591" stop-color="#17d517"/><stop offset="0.618" stop-color="#17d417"/><stop offset="0.646" stop-color="#18d118"/><stop offset="0.673" stop-color="#17cb17"/><stop offset="0.700" stop-color="#17c417"/><stop offset="0.727" stop-color="#17bb17"/><stop offset="0.755" stop-color="#17b117"/><stop offset="0.782" stop-color="#18a618"/><stop offset="0.809" stop-color="#179817"/><stop offset="0.836" stop-color="#178a17"/><stop offset="0.864" stop-color="#177a17"/><stop offset="0.891" stop-color="#177017"/><stop offset="0.918" stop-color="#176d17"/><stop offset="0.945" stop-color="#176817"/><stop offset="0.973" stop-color="#176117"/><stop offset="1.000" stop-color="#174b17"/></radialGradient>
<radialGradient id="r57" gradientUnits="userSpaceOnUse" cx="447.3" cy="274.3" r="108"><stop offset="0.509" stop-color="#17a417"/><stop offset="0.537" stop-color="#17bf17"/><stop offset="0.564" stop-color="#17c917"/><stop offset="0.591" stop-color="#17cd17"/><stop offset="0.618" stop-color="#17cd17"/><stop offset="0.646" stop-color="#17cb17"/><stop offset="0.673" stop-color="#17c717"/><stop offset="0.700" stop-color="#17c117"/><stop offset="0.727" stop-color="#17ba17"/><stop offset="0.755" stop-color="#17b117"/><stop offset="0.782" stop-color="#18a718"/><stop offset="0.809" stop-color="#179b17"/><stop offset="0.836" stop-color="#178e17"/><stop offset="0.864" stop-color="#177f17"/><stop offset="0.891" stop-color="#177217"/><stop offset="0.918" stop-color="#177017"/><stop offset="0.945" stop-color="#176b17"/><stop offset="0.973" stop-color="#176417"/><stop offset="1.000" stop-color="#174f17"/></radialGradient>
<radialGradient id="r58" gradientUnits="userSpaceOnUse" cx="447.3" cy="274.3" r="108"><stop offset="0.509" stop-color="#179b17"/><stop offset="0.537" stop-color="#17b417"/><stop offset="0.564" stop-color="#17bf17"/><stop offset="0.591" stop-color="#17c417"/><stop offset="0.618" stop-color="#17c617"/><stop offset="0.646" stop-color="#17c517"/><stop offset="0.673" stop-color="#17c217"/><stop offset="0.700" stop-color="#17be17"/><stop offset="0.727" stop-color="#17b817"/><stop offset="0.755" stop-color="#17b117"/><stop offset="0.782" stop-color="#18a918"/><stop offset="0.809" stop-color="#189f18"/><stop offset="0.836" stop-color="#179217"/><stop offset="0.864" stop-color="#178517"/><stop offset="0.891" stop-color="#177617"/><stop offset="0.918" stop-color="#177217"/><stop offset="0.945" stop-color="#176f17"/><stop offset="0.973" stop-color="#176817"/><stop offset="1.000" stop-color="#175317"/></radialGradient>
<radialGradient id="r59" gradientUnits="userSpaceOnUse" cx="447.3" cy="274.3" r="108"><stop offset="0.509" stop-color="#179217"/><stop offset="0.537" stop-color="#17a817"/><stop offset="0.564" stop-color="#17b417"/><stop offset="0.591" stop-color="#17bb17"/><stop offset="0.618" stop-color="#17be17"/><stop offset="0.646" stop-color="#17bf17"/><stop offset="0.673" stop-color="#17be17"/><stop offset="0.700" stop-color="#17bb17"/><stop offset="0.727" stop-color="#17b717"/><stop offset="0.755" stop-color="#17b117"/><stop offset="0.782" stop-color="#18ab18"/><stop offset="0.809" stop-color="#19a319"/><stop offset="0.836" stop-color="#189718"/><stop offset="0.864" stop-color="#178b17"/><stop offset="0.891" stop-color="#177d17"/><stop offset="0.918" stop-color="#177517"/><stop offset="0.945" stop-color="#177217"/><stop offset="0.973" stop-color="#176c17"/><stop offset="1.000" stop-color="#175717"/></radialGradient>
<radialGradient id="r60" gradientUnits="userSpaceOnUse" cx="447.3" cy="274.3" r="108"><stop offset="0.509" stop-color="#178817"/><stop offset="0.537" stop-color="#179c17"/><stop offset="0.564" stop-color="#17a917"/><stop offset="0.591" stop-color="#17b217"/><stop offset="0.618" stop-color="#17b617"/><stop offset="0.646" stop-color="#17b917"/><stop offset="0.673" stop-color="#17b917"/><stop offset="0.700" stop-color="#17b817"/><stop offset="0.727" stop-color="#17b517"/><stop offset="0.755" stop-color="#17b117"/><stop offset="0.782" stop-color="#19ad19"/><stop offset="0.809" stop-color="#1aa71a"/><stop offset="0.836" stop-color="#199d19"/><stop offset="0.864" stop-color="#179117"/><stop offset="0.891" stop-color="#178517"/><stop offset="0.918" stop-color="#177717"/><stop offset="0.945" stop-color="#177517"/><stop offset="0.973" stop-color="#176f17"/><stop offset="1.000" stop-color="#175b17"/></radialGradient>
<radialGradient id="r61" gradientUnits="userSpaceOnUse" cx="447.3" cy="274.3" r="108"><stop offset="0.509" stop-color="#177d17"/><stop offset="0.537" stop-color="#179317"/><stop offset="0.564" stop-color="#179e17"/><stop offset="0.591" stop-color="#17a817"/><stop offset="0.618" stop-color="#17af17"/><stop offset="0.646" stop-color="#17b217"/><stop offset="0.673" stop-color="#17b417"/><stop offset="0.700" stop-color="#17b517"/><stop offset="0.727" stop-color="#17b317"/><stop offset="0.755" stop-color="#17b117"/><stop offset="0.782" stop-color="#19af19"/><stop offset="0.809" stop-color="#1cac1c"/><stop offset="0.836" stop-color="#1aa41a"/><stop offset="0.864" stop-color="#189818"/><stop offset="0.891" stop-color="#178d17"/><stop offset="0.918" stop-color="#178017"/><stop offset="0.945" stop-color="#177717"/><stop offset="0.973" stop-color="#177217"/><stop offset="1.000" stop-color="#175e17"/></radialGradient>
<radialGradient id="r62" gradientUnits="userSpaceOnUse" cx="447.3" cy="274.3" r="108"><stop offset="0.509" stop-color="#177217"/><stop offset="0.537" stop-color="#178917"/><stop offset="0.564" stop-color="#179317"/><stop offset="0.591" stop-color="#179e17"/><stop offset="0.618" stop-color="#17a617"/><stop offset="0.646" stop-color="#17ac17"/><stop offset="0.673" stop-color="#17b017"/><stop offset="0.700" stop-color="#17b117"/><stop offset="0.727" stop-color="#17b217"/><stop offset="0.755" stop-color="#17b117"/><stop offset="0.782" stop-color="#1ab11a"/><stop offset="0.809" stop-color="#1fb21f"/><stop offset="0.836" stop-color="#1eac1e"/><stop offset="0.864" stop-color="#19a019"/><stop offset="0.891" stop-color="#179517"/><stop offset="0.918" stop-color="#178917"/><stop offset="0.945" stop-color="#177a17"/><stop offset="0.973" stop-color="#177517"/><stop offset="1.000" stop-color="#176217"/></radialGradient>
<radialGradient id="r63" gradientUnits="userSpaceOnUse" cx="447.3" cy="274.3" r="108"><stop offset="0.509" stop-color="#176617"/><stop offset="0.537" stop-color="#177e17"/><stop offset="0.564" stop-color="#178817"/><stop offset="0.591" stop-color="#179517"/><stop offset="0.618" stop-color="#179e17"/><stop offset="0.646" stop-color="#17a517"/><stop offset="0.673" stop-color="#17ab17"/><stop offset="0.700" stop-color="#17ae17"/><stop offset="0.727" stop-color="#17b017"/><stop offset="0.755" stop-color="#17b117"/><stop offset="0.782" stop-color="#1bb41b"/><stop offset="0.809" stop-color="#23ba23"/><stop offset="0.836" stop-color="#25b825"/><stop offset="0.864" stop-color="#1ca91c"/><stop offset="0.891" stop-color="#179d17"/><stop offset="0.918" stop-color="#179317"/><stop offset="0.945" stop-color="#178617"/><stop offset="0.973" stop-color="#177817"/><stop offset="1.000" stop-color="#176517"/></radialGradient>
<radialGradient id="r64" gradientUnits="userSpaceOnUse" cx="447.3" cy="274.3" r="108"><stop offset="0.509" stop-color="#175a17"/><stop offset="0.537" stop-color="#177417"/><stop offset="0.564" stop-color="#177c17"/><stop offset="0.591" stop-color="#178b17"/><stop offset="0.618" stop-color="#179617"/><stop offset="0.646" stop-color="#179f17"/><stop offset="0.673" stop-color="#17a617"/><stop offset="0.700" stop-color="#17ab17"/><stop offset="0.727" stop-color="#17af17"/><stop offset="0.755" stop-color="#17b117"/><stop offset="0.782" stop-color="#1bb61b"/><stop offset="0.809" stop-color="#29c329"/><stop offset="0.836" stop-color="#30c730"/><stop offset="0.864" stop-color="#22b622"/><stop offset="0.891" stop-color="#18a618"/><stop offset="0.918" stop-color="#179d17"/><stop offset="0.945" stop-color="#179117"/><stop offset="0.973" stop-color="#178017"/><stop offset="1.000" stop-color="#176817"/></radialGradient>
<radialGradient id="r65" gradientUnits="userSpaceOnUse" cx="447.3" cy="274.3" r="108"><stop offset="0.509" stop-color="#174e17"/><stop offset="0.537" stop-color="#176917"/><stop offset="0.564" stop-color="#177217"/><stop offset="0.591" stop-color="#178117"/><stop offset="0.618" stop-color="#178e17"/><stop offset="0.646" stop-color="#179817"/><stop offset="0.673" stop-color="#17a117"/><stop offset="0.700" stop-color="#17a817"/><stop offset="0.727" stop-color="#17ad17"/><stop offset="0.755" stop-color="#17b117"/><stop offset="0.782" stop-color="#1cb91c"/><stop offset="0.809" stop-color="#30cd30"/><stop offset="0.836" stop-color="#41dd41"/><stop offset="0.864" stop-color="#2dc82d"/><stop offset="0.891" stop-color="#1ab01a"/><stop offset="0.918" stop-color="#17a717"/><stop offset="0.945" stop-color="#179d17"/><stop offset="0.973" stop-color="#178d17"/><stop offset="1.000" stop-color="#176a17"/></radialGradient>
<radialGradient id="r66" gradientUnits="userSpaceOnUse" cx="447.3" cy="274.3" r="108"><stop offset="0.509" stop-color="#174217"/><stop offset="0.537" stop-color="#175e17"/><stop offset="0.564" stop-color="#176917"/><stop offset="0.591" stop-color="#177817"/><stop offset="0.618" stop-color="#178617"/><stop offset="0.646" stop-color="#179217"/><stop offset="0.673" stop-color="#179c17"/><stop offset="0.700" stop-color="#17a417"/><stop offset="0.727" stop-color="#17ab17"/><stop offset="0.755" stop-color="#17b117"/><stop offset="0.782" stop-color="#1dbb1d"/><stop offset="0.809" stop-color="#39da39"/><stop offset="0.836" stop-color="#59fa59"/><stop offset="0.864" stop-color="#40e140"/><stop offset="0.891" stop-color="#1ebc1e"/><stop offset="0.918" stop-color="#17b017"/><stop offset="0.945" stop-color="#17a817"/><stop offset="0.973" stop-color="#179917"/><stop offset="1.000" stop-color="#176d17"/></radialGradient>
<radialGradient id="r67" gradientUnits="userSpaceOnUse" cx="447.3" cy="274.3" r="108"><stop offset="0.509" stop-color="#174017"/><stop offset="0.537" stop-color="#175417"/><stop offset="0.564" stop-color="#175f17"/><stop offset="0.591" stop-color="#176e17"/><stop offset="0.618" stop-color="#177e17"/><stop offset="0.646" stop-color="#178c17"/><stop offset="0.673" stop-color="#179717"/><stop offset="0.700" stop-color="#17a117"/><stop offset="0.727" stop-color="#17aa17"/><stop offset="0.755" stop-color="#17b117"/><stop offset="0.782" stop-color="#1ebe1e"/><stop offset="0.809" stop-color="#43e743"/><stop offset="0.836" stop-color="#77ff77"/><stop offset="0.864" stop-color="#5cff5c"/><stop offset="0.891" stop-color="#24ca24"/><stop offset="0.918" stop-color="#17ba17"/><stop offset="0.945" stop-color="#17b317"/><stop offset="0.973" stop-color="#17a617"/><stop offset="1.000" stop-color="#177817"/></radialGradient>
<radialGradient id="r68" gradientUnits="userSpaceOnUse" cx="447.3" cy="274.3" r="108"><stop offset="0.509" stop-color="#174017"/><stop offset="0.537" stop-color="#174917"/><stop offset="0.564" stop-color="#175617"/><stop offset="0.591" stop-color="#176517"/><stop offset="0.618" stop-color="#177717"/><stop offset="0.646" stop-color="#178617"/><stop offset="0.673" stop-color="#179317"/><stop offset="0.700" stop-color="#179e17"/><stop offset="0.727" stop-color="#17a817"/><stop offset="0.755" stop-color="#17b117"/><stop offset="0.782" stop-color="#1fc01f"/><stop offset="0.809" stop-color="#4df44d"/><stop offset="0.836" stop-color="#99ff99"/><stop offset="0.864" stop-color="#7eff7e"/><stop offset="0.891" stop-color="#2ddb2d"/><stop offset="0.918" stop-color="#18c418"/><stop offset="0.945" stop-color="#17bd17"/><stop offset="0.973" stop-color="#17b217"/><stop offset="1.000" stop-color="#178617"/></radialGradient>
<radialGradient id="r69" gradientUnits="userSpaceOnUse" cx="447.3" cy="274.3" r="108"><stop offset="0.509" stop-color="#174017"/><stop offset="0.537" stop-color="#174017"/><stop offset="0.564" stop-color="#174d17"/><stop offset="0.591" stop-color="#175c17"/><stop offset="0.618" stop-color="#176f17"/><stop offset="0.646" stop-color="#178017"/><stop offset="0.673" stop-color="#178e17"/><stop offset="0.700" stop-color="#179b17"/><stop offset="0.727" stop-color="#17a717"/><stop offset="0.755" stop-color="#17b117"/><stop offset="0.782" stop-color="#20c220"/><stop offset="0.809" stop-color="#56ff56"/><stop offset="0.836" stop-color="#bcffbc"/><stop offset="0.864" stop-color="#a4ffa4"/><stop offset="0.891" stop-color="#38ed38"/><stop offset="0.918" stop-color="#18cd18"/><stop offset="0.945" stop-color="#17c717"/><stop offset="0.973" stop-color="#17bd17"/><stop offset="1.000" stop-color="#179317"/></radialGradient>
<radialGradient id="r70" gradientUnits="userSpaceOnUse" cx="447.3" cy="274.3" r="108"><stop offset="0.509" stop-color="#174017"/><stop offset="0.537" stop-color="#174017"/><stop offset="0.564" stop-color="#174417"/><stop offset="0.591" stop-color="#175417"/><stop offset="0.618" stop-color="#176917"/><stop offset="0.646" stop-color="#177a17"/><stop offset="0.673" stop-color="#178a17"/><stop offset="0.700" stop-color="#179917"/><stop offset="0.727" stop-color="#17a517"/><stop offset="0.755" stop-color="#17b117"/><stop offset="0.782" stop-color="#20c420"/><stop offset="0.809" stop-color="#5dff5d"/><stop offset="0.836" stop-color="#d7ffd7"/><stop offset="0.864" stop-color="#c5ffc5"/><stop offset="0.891" stop-color="#42fe42"/><stop offset="0.918" stop-color="#19d619"/><stop offset="0.945" stop-color="#17d117"/><stop offset="0.973" stop-color="#17c917"/><stop offset="1.000" stop-color="#179f17"/></radialGradient>
<radialGradient id="r71" gradientUnits="userSpaceOnUse" cx="447.3" cy="274.3" r="108"><stop offset="0.509" stop-color="#174017"/><stop offset="0.537" stop-color="#174017"/><stop offset="0.564" stop-color="#174017"/><stop offset="0.591" stop-color="#174c17"/><stop offset="0.618" stop-color="#176217"/><stop offset="0.646" stop-color="#177517"/><stop offset="0.673" stop-color="#178617"/><stop offset="0.700" stop-color="#179617"/><stop offset="0.727" stop-color="#17a417"/><stop offset="0.755" stop-color="#17b117"/><stop offset="0.782" stop-color="#20c520"/><stop offset="0.809" stop-color="#61ff61"/><stop offset="0.836" stop-color="#e7ffe7"/><stop offset="0.864" stop-color="#d8ffd8"/><stop offset="0.891" stop-color="#48ff48"/><stop offset="0.918" stop-color="#19de19"/><stop offset="0.945" stop-color="#17da17"/><stop offset="0.973" stop-color="#17d317"/><stop offset="1.000" stop-color="#17ab17"/></radialGradient>
<linearGradient id="nk" gradientUnits="userSpaceOnUse" x1="413" y1="0" x2="494" y2="0"><stop offset="0.000" stop-color="#164616"/><stop offset="0.037" stop-color="#174c17"/><stop offset="0.080" stop-color="#1f8a1f"/><stop offset="0.173" stop-color="#1f9f1f"/><stop offset="0.296" stop-color="#22b522"/><stop offset="0.420" stop-color="#25c825"/><stop offset="0.506" stop-color="#2ce02c"/><stop offset="0.580" stop-color="#34f834"/><stop offset="0.679" stop-color="#38ff38"/><stop offset="0.778" stop-color="#30ff30"/><stop offset="0.852" stop-color="#25f025"/><stop offset="1.000" stop-color="#22e822"/></linearGradient>
<linearGradient id="nk2" gradientUnits="userSpaceOnUse" x1="413" y1="0" x2="494" y2="0"><stop offset="0.000" stop-color="#164616"/><stop offset="0.037" stop-color="#174c17"/><stop offset="0.086" stop-color="#1f8f1f"/><stop offset="0.235" stop-color="#1fa51f"/><stop offset="0.383" stop-color="#25d025"/><stop offset="0.469" stop-color="#30fa30"/><stop offset="0.753" stop-color="#30ff30"/><stop offset="0.852" stop-color="#28ee28"/><stop offset="1.000" stop-color="#22e022"/></linearGradient>
<linearGradient id="mk1" gradientUnits="userSpaceOnUse" x1="445.4" y1="390.6" x2="457.7" y2="420.2"><stop offset="0" stop-color="#fff"/><stop offset="1" stop-color="#000"/></linearGradient>
<mask id="m1" maskUnits="userSpaceOnUse" x="400" y="320" width="130" height="150"><rect x="400" y="320" width="130" height="150" fill="url(#mk1)"/></mask>
<linearGradient id="mk2" gradientUnits="userSpaceOnUse" x1="0" y1="352" x2="0" y2="364"><stop offset="0" stop-color="#fff"/><stop offset="1" stop-color="#000"/></linearGradient>
<mask id="m2" maskUnits="userSpaceOnUse" x="400" y="320" width="110" height="120"><rect x="400" y="320" width="110" height="120" fill="url(#mk2)"/></mask>
<filter id="bl3" x="-40%" y="-20%" width="180%" height="140%"><feGaussianBlur stdDeviation="3"/></filter>
<filter id="bl15" x="-40%" y="-20%" width="180%" height="140%"><feGaussianBlur stdDeviation="2.1"/></filter>
<clipPath id="cn"><path d="M470.0 330.0C482.5 331.7 496.0 338.0 500.0 345.0C504.0 352.0 495.7 365.3 494.0 372.0C492.3 378.7 489.7 380.5 490.0 385.0C490.3 389.5 491.0 393.8 496.0 399.0C501.0 404.2 509.8 409.7 520.0 416.0C530.2 422.3 545.3 430.5 557.0 437.0C568.7 443.5 580.8 447.8 590.0 455.0C599.2 462.2 605.8 471.5 612.0 480.0C618.2 488.5 623.2 496.8 627.0 506.0C630.8 515.2 633.4 527.2 635.0 535.0C636.6 542.8 636.7 546.3 636.5 553.0C636.3 559.7 635.6 567.2 634.0 575.0C632.4 582.8 630.2 590.8 627.0 600.0C623.8 609.2 619.5 620.8 615.0 630.0C610.5 639.2 604.7 648.7 600.0 655.0C595.3 661.3 592.5 662.8 587.0 668.0C581.5 673.2 574.5 680.3 567.0 686.0C559.5 691.7 550.3 697.3 542.0 702.0C533.7 706.7 525.3 710.8 517.0 714.0C508.7 717.2 501.5 719.2 492.0 721.0C482.5 722.8 470.3 724.8 460.0 725.0C449.7 725.2 439.2 724.0 430.0 722.5C420.8 721.0 413.3 718.9 405.0 716.0C396.7 713.1 388.3 709.8 380.0 705.0C371.7 700.2 363.3 694.5 355.0 687.0C346.7 679.5 337.0 670.3 330.0 660.0C323.0 649.7 317.0 635.5 313.0 625.0C309.0 614.5 307.4 606.2 306.0 597.0C304.6 587.8 305.3 580.0 304.5 570.0C303.7 560.0 302.9 547.0 301.0 537.0C299.1 527.0 295.2 516.6 293.0 510.0C290.8 503.4 288.2 500.8 287.5 497.5C286.8 494.2 287.3 491.8 289.0 490.0C290.7 488.2 294.7 486.7 297.5 486.5C300.3 486.3 299.8 485.1 306.0 489.0C312.2 492.9 326.0 502.3 335.0 510.0C344.0 517.7 353.0 526.7 360.0 535.0C367.0 543.3 372.0 551.3 377.0 560.0C382.0 568.7 384.5 579.5 390.0 587.0C395.5 594.5 402.5 600.2 410.0 605.0C417.5 609.8 428.3 613.9 435.0 616.0C441.7 618.1 443.8 617.8 450.0 617.5C456.2 617.2 464.5 617.4 472.0 614.0C479.5 610.6 488.7 604.3 495.0 597.0C501.3 589.7 506.8 577.8 510.0 570.0C513.2 562.2 513.8 557.5 514.0 550.0C514.2 542.5 513.3 532.5 511.0 525.0C508.7 517.5 506.5 513.0 500.0 505.0C493.5 497.0 481.7 486.2 472.0 477.0C462.3 467.8 452.2 459.9 442.0 450.0C431.8 440.1 416.5 426.7 411.0 417.5C405.5 408.3 409.0 404.6 409.0 395.0C409.0 385.4 408.3 370.0 411.0 360.0C413.7 350.0 415.2 340.0 425.0 335.0C434.8 330.0 457.5 328.3 470.0 330.0Z"/><circle cx="447.3" cy="274.3" r="108.0"/></clipPath>
<clipPath id="cb"><path d="M470.0 330.0C482.5 331.7 496.0 338.0 500.0 345.0C504.0 352.0 495.7 365.3 494.0 372.0C492.3 378.7 489.7 380.5 490.0 385.0C490.3 389.5 491.0 393.8 496.0 399.0C501.0 404.2 509.8 409.7 520.0 416.0C530.2 422.3 545.3 430.5 557.0 437.0C568.7 443.5 580.8 447.8 590.0 455.0C599.2 462.2 605.8 471.5 612.0 480.0C618.2 488.5 623.2 496.8 627.0 506.0C630.8 515.2 633.4 527.2 635.0 535.0C636.6 542.8 636.7 546.3 636.5 553.0C636.3 559.7 635.6 567.2 634.0 575.0C632.4 582.8 630.2 590.8 627.0 600.0C623.8 609.2 619.5 620.8 615.0 630.0C610.5 639.2 604.7 648.7 600.0 655.0C595.3 661.3 592.5 662.8 587.0 668.0C581.5 673.2 574.5 680.3 567.0 686.0C559.5 691.7 550.3 697.3 542.0 702.0C533.7 706.7 525.3 710.8 517.0 714.0C508.7 717.2 501.5 719.2 492.0 721.0C482.5 722.8 470.3 724.8 460.0 725.0C449.7 725.2 439.2 724.0 430.0 722.5C420.8 721.0 413.3 718.9 405.0 716.0C396.7 713.1 388.3 709.8 380.0 705.0C371.7 700.2 363.3 694.5 355.0 687.0C346.7 679.5 337.0 670.3 330.0 660.0C323.0 649.7 317.0 635.5 313.0 625.0C309.0 614.5 307.4 606.2 306.0 597.0C304.6 587.8 305.3 580.0 304.5 570.0C303.7 560.0 302.9 547.0 301.0 537.0C299.1 527.0 295.2 516.6 293.0 510.0C290.8 503.4 288.2 500.8 287.5 497.5C286.8 494.2 287.3 491.8 289.0 490.0C290.7 488.2 294.7 486.7 297.5 486.5C300.3 486.3 299.8 485.1 306.0 489.0C312.2 492.9 326.0 502.3 335.0 510.0C344.0 517.7 353.0 526.7 360.0 535.0C367.0 543.3 372.0 551.3 377.0 560.0C382.0 568.7 384.5 579.5 390.0 587.0C395.5 594.5 402.5 600.2 410.0 605.0C417.5 609.8 428.3 613.9 435.0 616.0C441.7 618.1 443.8 617.8 450.0 617.5C456.2 617.2 464.5 617.4 472.0 614.0C479.5 610.6 488.7 604.3 495.0 597.0C501.3 589.7 506.8 577.8 510.0 570.0C513.2 562.2 513.8 557.5 514.0 550.0C514.2 542.5 513.3 532.5 511.0 525.0C508.7 517.5 506.5 513.0 500.0 505.0C493.5 497.0 481.7 486.2 472.0 477.0C462.3 467.8 452.2 459.9 442.0 450.0C431.8 440.1 416.5 426.7 411.0 417.5C405.5 408.3 409.0 404.6 409.0 395.0C409.0 385.4 408.3 370.0 411.0 360.0C413.7 350.0 415.2 340.0 425.0 335.0C434.8 330.0 457.5 328.3 470.0 330.0Z"/></clipPath>
<clipPath id="cr"><path clip-rule="evenodd" d="M339.3 274.3a108 108 0 1 0 216 0a108 108 0 1 0 -216 0ZM392.3 274.3a55 55 0 1 0 110 0a55 55 0 1 0 -110 0Z"/></clipPath></defs>
<rect x="9" y="726" width="906" height="2" fill="#1cf01e"/>
<path d="M369 348L369 392Q369 397.5 374 400L412 418.5L412 376L396 352Z" fill="#164616"/><path d="M369 349L369 392Q369 397.5 374 400L410.5 417.8L410.5 391Q410.5 383.5 403 380.5Q386 370 369 349Z" fill="url(#lp)" filter="url(#bl07)"/>
<path d="M369 350V392Q369 397.5 374 400L412 418.5" fill="none" stroke="#164616" stroke-width="1.8"/>
<circle cx="384.3" cy="386.3" r="14.5" fill="url(#bo)"/>
<path d="M393.6 375.2A14.5 14.5 0 0 1 392.6 398.2" fill="none" stroke="#a8ffa8" stroke-width="1.1"/>
<circle cx="383.4" cy="386.4" r="11.6" fill="#1c701c"/>
<circle cx="382.3" cy="386.3" r="10.2" fill="#23b623"/>
<path d="M388.2 378A10.2 10.2 0 0 1 388.2 394.6" fill="none" stroke="#d0ffd0" stroke-width="1.2"/>
<g clip-path="url(#cb)">
<path d="M470.0 330.0C482.5 331.7 496.0 338.0 500.0 345.0C504.0 352.0 495.7 365.3 494.0 372.0C492.3 378.7 489.7 380.5 490.0 385.0C490.3 389.5 491.0 393.8 496.0 399.0C501.0 404.2 509.8 409.7 520.0 416.0C530.2 422.3 545.3 430.5 557.0 437.0C568.7 443.5 580.8 447.8 590.0 455.0C599.2 462.2 605.8 471.5 612.0 480.0C618.2 488.5 623.2 496.8 627.0 506.0C630.8 515.2 633.4 527.2 635.0 535.0C636.6 542.8 636.7 546.3 636.5 553.0C636.3 559.7 635.6 567.2 634.0 575.0C632.4 582.8 630.2 590.8 627.0 600.0C623.8 609.2 619.5 620.8 615.0 630.0C610.5 639.2 604.7 648.7 600.0 655.0C595.3 661.3 592.5 662.8 587.0 668.0C581.5 673.2 574.5 680.3 567.0 686.0C559.5 691.7 550.3 697.3 542.0 702.0C533.7 706.7 525.3 710.8 517.0 714.0C508.7 717.2 501.5 719.2 492.0 721.0C482.5 722.8 470.3 724.8 460.0 725.0C449.7 725.2 439.2 724.0 430.0 722.5C420.8 721.0 413.3 718.9 405.0 716.0C396.7 713.1 388.3 709.8 380.0 705.0C371.7 700.2 363.3 694.5 355.0 687.0C346.7 679.5 337.0 670.3 330.0 660.0C323.0 649.7 317.0 635.5 313.0 625.0C309.0 614.5 307.4 606.2 306.0 597.0C304.6 587.8 305.3 580.0 304.5 570.0C303.7 560.0 302.9 547.0 301.0 537.0C299.1 527.0 295.2 516.6 293.0 510.0C290.8 503.4 288.2 500.8 287.5 497.5C286.8 494.2 287.3 491.8 289.0 490.0C290.7 488.2 294.7 486.7 297.5 486.5C300.3 486.3 299.8 485.1 306.0 489.0C312.2 492.9 326.0 502.3 335.0 510.0C344.0 517.7 353.0 526.7 360.0 535.0C367.0 543.3 372.0 551.3 377.0 560.0C382.0 568.7 384.5 579.5 390.0 587.0C395.5 594.5 402.5 600.2 410.0 605.0C417.5 609.8 428.3 613.9 435.0 616.0C441.7 618.1 443.8 617.8 450.0 617.5C456.2 617.2 464.5 617.4 472.0 614.0C479.5 610.6 488.7 604.3 495.0 597.0C501.3 589.7 506.8 577.8 510.0 570.0C513.2 562.2 513.8 557.5 514.0 550.0C514.2 542.5 513.3 532.5 511.0 525.0C508.7 517.5 506.5 513.0 500.0 505.0C493.5 497.0 481.7 486.2 472.0 477.0C462.3 467.8 452.2 459.9 442.0 450.0C431.8 440.1 416.5 426.7 411.0 417.5C405.5 408.3 409.0 404.6 409.0 395.0C409.0 385.4 408.3 370.0 411.0 360.0C413.7 350.0 415.2 340.0 425.0 335.0C434.8 330.0 457.5 328.3 470.0 330.0Z" fill="#22c522"/>
<path fill="url(#b0)" d="M383.3 393.5L469.7 357.5L477.2 365.6L390.8 401.7Z"/>
<path fill="url(#b1)" d="M389.3 400.0L475.7 364.0L483.2 372.1L396.8 408.2Z"/>
<path fill="url(#b2)" d="M395.3 406.5L481.7 370.5L489.2 378.6L402.8 414.7Z"/>
<path fill="url(#b3)" d="M401.3 413.0L487.7 377.0L495.2 385.1L408.8 421.2Z"/>
<path fill="url(#b4)" d="M407.3 419.5L493.7 383.5L494.9 387.1L412.7 425.0Z"/>
<path fill="url(#b5)" d="M411.6 423.9L494.6 386.4L495.8 390.0L417.0 429.4Z"/>
<path fill="url(#b6)" d="M415.9 428.3L495.6 389.2L496.8 392.8L421.3 433.7Z"/>
<path fill="url(#b7)" d="M420.2 432.6L496.5 392.1L497.7 395.7L425.6 438.1Z"/>
<path fill="url(#b8)" d="M424.5 437.0L497.5 395.0L498.9 396.0L430.0 442.6Z"/>
<path fill="url(#b9)" d="M428.9 441.4L498.6 395.8L500.0 396.8L434.4 447.0Z"/>
<path fill="url(#b10)" d="M433.3 445.9L499.7 396.6L501.1 397.6L438.8 451.4Z"/>
<path fill="url(#b11)" d="M437.7 450.3L500.8 397.4L502.2 398.5L443.2 455.9Z"/>
<path fill="url(#b12)" d="M442.1 454.7L501.9 398.3L508.6 403.0L446.1 458.4Z"/>
<path fill="url(#b13)" d="M445.3 457.7L507.2 402.1L513.9 406.9L449.3 461.3Z"/>
<path fill="url(#b14)" d="M448.5 460.6L512.5 405.9L519.2 410.7L452.4 464.3Z"/>
<path fill="url(#b15)" d="M451.6 463.5L517.9 409.7L524.5 414.5L455.6 467.2Z"/>
<path fill="url(#b16)" d="M454.8 466.4L523.2 413.6L529.4 417.0L459.2 470.5Z"/>
<path fill="url(#b17)" d="M458.3 469.7L528.2 416.3L534.4 419.8L462.7 473.7Z"/>
<path fill="url(#b18)" d="M461.8 472.9L533.2 419.1L539.5 422.6L466.2 476.9Z"/>
<path fill="url(#b19)" d="M465.3 476.1L538.2 421.9L544.5 425.3L469.6 480.2Z"/>
<path fill="url(#b20)" d="M468.8 479.4L543.2 424.6L548.8 427.7L473.5 483.8Z"/>
<path fill="url(#b21)" d="M472.5 482.9L547.7 427.1L553.3 430.2L477.2 487.3Z"/>
<path fill="url(#b22)" d="M476.3 486.4L552.2 429.6L557.8 432.7L481.0 490.8Z"/>
<path fill="url(#b23)" d="M480.1 489.9L556.7 432.1L562.3 435.2L484.8 494.3Z"/>
<path fill="url(#b24)" d="M483.8 493.4L561.2 434.6L567.1 437.7L487.2 497.1Z"/>
<path fill="url(#b25)" d="M486.5 496.4L566.0 437.1L571.9 440.3L490.0 500.1Z"/>
<path fill="url(#b26)" d="M489.3 499.4L570.7 439.6L576.7 442.8L492.7 503.1Z"/>
<path fill="url(#b27)" d="M492.0 502.3L575.5 442.2L581.5 445.3L495.4 506.1Z"/>
<path fill="url(#b28)" d="M494.7 505.3L580.3 444.7L586.3 449.1L497.2 509.3Z"/>
<path fill="url(#b29)" d="M496.7 508.5L585.1 448.2L591.0 452.7L499.1 512.5Z"/>
<path fill="url(#b30)" d="M498.7 511.7L589.8 451.8L595.8 456.2L501.1 515.7Z"/>
<path fill="url(#b31)" d="M500.6 514.9L594.6 455.4L600.6 459.8L503.1 518.9Z"/>
<path fill="url(#b32)" d="M502.6 518.1L599.4 458.9L604.7 465.4L504.5 521.8Z"/>
<path fill="url(#b33)" d="M504.1 521.1L603.7 464.1L609.0 470.7L505.9 524.8Z"/>
<path fill="url(#b34)" d="M505.6 524.1L607.9 469.4L613.2 475.9L507.4 527.8Z"/>
<path fill="url(#b35)" d="M507.1 527.1L612.1 474.6L617.4 481.1L508.9 530.8Z"/>
<path fill="url(#b36)" d="M508.6 530.1L616.4 479.8L621.9 488.2L509.5 533.3Z"/>
<path fill="url(#b37)" d="M509.3 532.7L620.8 486.5L625.9 495.2L510.0 536.0Z"/>
<path fill="url(#b38)" d="M509.9 535.3L624.9 493.4L629.6 502.4L510.4 538.6Z"/>
<path fill="url(#b39)" d="M510.3 537.9L628.7 500.6L632.7 509.9L510.8 541.2Z"/>
<path fill="url(#b40)" d="M510.7 540.5L631.9 508.1L635.0 517.7L511.0 543.8Z"/>
<path fill="url(#b41)" d="M510.9 543.2L634.3 515.8L637.0 525.6L511.0 546.4Z"/>
<path fill="url(#b42)" d="M511.0 545.8L636.4 523.7L638.7 533.6L511.0 549.0Z"/>
<path fill="url(#b43)" d="M511.0 548.4L638.2 531.6L639.7 541.7L510.9 551.6Z"/>
<path fill="url(#b44)" d="M510.9 550.9L639.4 539.7L640.4 549.9L510.6 554.1Z"/>
<path fill="url(#b45)" d="M510.6 553.5L640.2 547.8L640.3 558.0L510.2 556.6Z"/>
<path fill="url(#b46)" d="M510.3 556.0L640.3 556.0L639.4 566.2L509.7 559.1Z"/>
<path fill="url(#b47)" d="M509.8 558.5L639.6 564.1L638.2 574.3L509.0 561.5Z"/>
<path fill="url(#b48)" d="M509.2 560.9L638.5 572.2L636.6 582.2L508.2 563.9Z"/>
<path fill="url(#b49)" d="M508.4 563.3L637.0 580.2L634.5 590.1L507.4 566.2Z"/>
<path fill="url(#b50)" d="M507.6 565.6L635.0 588.1L632.1 597.8L506.4 568.5Z"/>
<path fill="url(#b51)" d="M506.7 567.9L632.7 595.8L629.5 605.4L505.6 570.7Z"/>
<path fill="url(#b52)" d="M505.8 570.2L630.1 603.5L626.9 612.9L505.0 573.0Z"/>
<path fill="url(#b53)" d="M505.2 572.4L627.5 611.0L623.9 620.3L504.2 575.3Z"/>
<path fill="url(#b54)" d="M504.4 574.7L624.6 618.5L620.6 627.6L503.3 577.5Z"/>
<path fill="url(#b55)" d="M503.5 576.9L621.4 625.8L617.0 634.7L502.3 579.7Z"/>
<path fill="url(#b56)" d="M502.6 579.1L617.9 632.9L613.2 641.6L501.3 581.8Z"/>
<path fill="url(#b57)" d="M501.5 581.3L614.2 639.9L609.1 648.4L500.1 583.9Z"/>
<path fill="url(#b58)" d="M500.4 583.4L610.1 646.7L604.7 655.0L498.8 585.9Z"/>
<path fill="url(#b59)" d="M499.1 585.4L605.8 653.3L599.7 661.1L497.5 587.9Z"/>
<path fill="url(#b60)" d="M497.8 587.4L600.9 659.6L594.1 666.8L496.0 589.8Z"/>
<path fill="url(#b61)" d="M496.4 589.3L595.5 665.3L588.4 672.2L494.5 591.6Z"/>
<path fill="url(#b62)" d="M494.9 591.2L589.8 670.8L583.0 677.7L492.9 593.4Z"/>
<path fill="url(#b63)" d="M493.3 593.0L584.3 676.3L577.2 683.0L491.3 595.2Z"/>
<path fill="url(#b64)" d="M491.7 594.7L578.6 681.6L571.2 687.9L489.8 597.0Z"/>
<path fill="url(#b65)" d="M490.1 596.5L572.7 686.7L565.1 692.6L488.1 598.7Z"/>
<path fill="url(#b66)" d="M488.5 598.3L566.6 691.4L558.7 696.9L486.3 600.4Z"/>
<path fill="url(#b67)" d="M486.7 600.0L560.3 695.8L552.2 701.0L484.4 601.9Z"/>
<path fill="url(#b68)" d="M484.9 601.5L553.8 699.9L545.5 704.7L482.5 603.4Z"/>
<path fill="url(#b69)" d="M483.0 603.1L547.1 703.8L538.8 708.4L480.5 604.9Z"/>
<path fill="url(#b70)" d="M481.0 604.5L540.5 707.5L532.0 711.9L478.4 606.2Z"/>
<path fill="url(#b71)" d="M479.0 605.9L533.7 711.0L525.1 715.1L476.3 607.5Z"/>
<path fill="url(#b72)" d="M476.8 607.1L526.8 714.3L518.0 718.0L474.1 608.6Z"/>
<path fill="url(#b73)" d="M474.7 608.3L519.8 717.2L510.8 720.4L471.9 609.7Z"/>
<path fill="url(#b74)" d="M472.4 609.4L512.6 719.8L503.5 722.5L469.6 610.6Z"/>
<path fill="url(#b75)" d="M470.1 610.4L505.3 721.9L496.1 724.2L467.2 611.3Z"/>
<path fill="url(#b76)" d="M467.8 611.1L498.0 723.8L488.7 725.7L464.8 612.0Z"/>
<path fill="url(#b77)" d="M465.4 611.8L490.5 725.4L481.2 727.1L462.3 612.5Z"/>
<path fill="url(#b78)" d="M462.9 612.4L483.1 726.7L473.7 728.0L459.9 612.9Z"/>
<path fill="url(#b79)" d="M460.5 612.8L475.6 727.8L466.2 728.6L457.4 613.2Z"/>
<path fill="url(#b80)" d="M458.0 613.2L468.1 728.5L458.7 728.9L454.9 613.4Z"/>
<path fill="url(#b81)" d="M455.5 613.4L460.5 728.8L451.1 728.7L452.4 613.5Z"/>
<path fill="url(#b82)" d="M453.0 613.5L453.0 728.8L443.6 728.3L449.9 613.5Z"/>
<path fill="url(#b83)" d="M450.5 613.5L445.5 728.4L436.1 727.4L447.3 613.5Z"/>
<path fill="url(#b84)" d="M448.0 613.5L438.0 727.6L428.7 726.3L444.8 613.4Z"/>
<path fill="url(#b85)" d="M445.4 613.4L430.5 726.6L421.3 724.8L442.3 613.2Z"/>
<path fill="url(#b86)" d="M442.9 613.2L423.2 725.2L414.1 723.0L439.8 612.8Z"/>
<path fill="url(#b87)" d="M440.4 612.9L415.9 723.4L406.9 720.8L437.2 612.4Z"/>
<path fill="url(#b88)" d="M437.9 612.5L408.7 721.4L399.8 718.4L434.7 611.8Z"/>
<path fill="url(#b89)" d="M435.4 611.9L401.6 719.0L392.9 715.7L432.2 611.2Z"/>
<path fill="url(#b90)" d="M432.9 611.3L394.6 716.4L386.1 712.7L429.7 610.5Z"/>
<path fill="url(#b91)" d="M430.4 610.6L387.8 713.4L379.4 709.4L427.3 609.6Z"/>
<path fill="url(#b92)" d="M427.9 609.8L381.1 710.2L373.0 705.6L424.8 608.7Z"/>
<path fill="url(#b93)" d="M425.5 608.9L374.7 706.5L366.9 701.4L422.4 607.6Z"/>
<path fill="url(#b94)" d="M423.1 607.9L368.4 702.5L360.9 697.1L420.1 606.4Z"/>
<path fill="url(#b95)" d="M420.7 606.7L362.4 698.2L355.2 692.5L417.8 605.2Z"/>
<path fill="url(#b96)" d="M418.4 605.5L356.6 693.6L349.7 687.7L415.5 603.8Z"/>
<path fill="url(#b97)" d="M416.1 604.1L351.1 688.9L344.3 682.7L413.3 602.3Z"/>
<path fill="url(#b98)" d="M413.9 602.7L345.7 683.9L339.3 677.4L411.0 600.9Z"/>
<path fill="url(#b99)" d="M411.6 601.2L340.5 678.7L334.4 672.0L408.7 599.4Z"/>
<path fill="url(#b100)" d="M409.3 599.7L335.6 673.4L329.9 666.4L406.4 597.8Z"/>
<path fill="url(#b101)" d="M407.0 598.2L331.0 667.8L325.6 660.6L404.2 596.0Z"/>
<path fill="url(#b102)" d="M404.8 596.5L326.7 662.0L321.9 654.3L402.1 594.2Z"/>
<path fill="url(#b103)" d="M402.6 594.7L322.9 655.9L318.5 648.0L400.0 592.3Z"/>
<path fill="url(#b104)" d="M400.5 592.7L319.4 649.6L315.4 641.6L398.0 590.2Z"/>
<path fill="url(#b105)" d="M398.5 590.7L316.2 643.2L312.5 635.1L396.1 588.0Z"/>
<path fill="url(#b106)" d="M396.6 588.6L313.3 636.7L310.0 628.4L394.3 585.8Z"/>
<path fill="url(#b107)" d="M394.7 586.3L310.7 630.1L307.8 621.8L392.5 583.4Z"/>
<path fill="url(#b108)" d="M392.9 584.0L308.3 623.5L305.8 615.1L390.7 581.0Z"/>
<path fill="url(#b109)" d="M391.2 581.6L306.3 616.8L304.1 608.4L389.1 578.5Z"/>
<path fill="url(#b110)" d="M389.5 579.1L304.5 610.0L302.7 601.6L387.5 575.9Z"/>
<path fill="url(#b111)" d="M387.9 576.5L303.1 603.3L301.7 594.8L386.1 573.2Z"/>
<path fill="url(#b112)" d="M386.5 573.8L301.9 596.5L301.0 588.0L384.8 570.4Z"/>
<path fill="url(#b113)" d="M385.1 571.0L301.2 589.7L300.6 581.1L383.6 567.5Z"/>
<path fill="url(#b114)" d="M383.9 568.2L300.7 582.9L300.7 578.6L383.2 566.3Z"/>
<path fill="url(#b115)" d="M383.4 566.7L300.7 579.5L300.7 575.3L382.7 564.8Z"/>
<path fill="url(#b116)" d="M382.8 565.2L300.7 576.1L300.6 571.9L382.2 563.4Z"/>
<path fill="url(#b117)" d="M382.3 563.7L300.6 572.7L300.6 568.5L381.7 561.9Z"/>
<path fill="url(#b118)" d="M381.8 562.3L300.6 569.3L300.4 566.6L379.7 558.2Z"/>
<path fill="url(#b119)" d="M380.1 559.0L300.5 567.2L300.3 564.4L377.9 555.0Z"/>
<path fill="url(#b120)" d="M378.4 555.8L300.3 565.0L300.1 562.2L376.2 551.8Z"/>
<path fill="url(#b121)" d="M376.7 552.6L300.2 562.8L300.0 560.0L374.5 548.6Z"/>
<path fill="url(#b122)" d="M375.0 549.4L300.0 560.6L299.6 557.2L372.1 545.3Z"/>
<path fill="url(#b123)" d="M372.7 546.1L299.7 557.9L299.2 554.5L369.9 542.0Z"/>
<path fill="url(#b124)" d="M370.4 542.8L299.3 555.2L298.9 551.8L367.6 538.7Z"/>
<path fill="url(#b125)" d="M368.2 539.5L298.9 552.5L298.5 549.1L365.4 535.4Z"/>
<path fill="url(#b126)" d="M365.9 536.2L298.6 549.8L298.0 546.4L362.5 532.4Z"/>
<path fill="url(#b127)" d="M363.2 533.2L298.1 547.1L297.5 543.7L359.7 529.4Z"/>
<path fill="url(#b128)" d="M360.4 530.1L297.6 544.4L297.0 541.0L356.9 526.3Z"/>
<path fill="url(#b129)" d="M357.6 527.1L297.1 541.7L296.5 538.3L354.2 523.2Z"/>
<path fill="url(#b130)" d="M354.9 524.0L296.6 539.0L295.5 535.3L351.1 520.4Z"/>
<path fill="url(#b131)" d="M351.9 521.1L295.8 536.0L294.7 532.3L348.1 517.5Z"/>
<path fill="url(#b132)" d="M348.9 518.2L294.9 533.1L293.8 529.4L345.1 514.5Z"/>
<path fill="url(#b133)" d="M345.8 515.3L294.0 530.1L293.0 526.4L342.1 511.6Z"/>
<path fill="url(#b134)" d="M342.8 512.4L293.2 527.1L291.9 523.4L338.8 508.9Z"/>
<path fill="url(#b135)" d="M339.6 509.6L292.2 524.2L290.9 520.5L335.5 506.1Z"/>
<path fill="url(#b136)" d="M336.3 506.8L291.2 521.2L290.0 517.5L332.2 503.3Z"/>
<path fill="url(#b137)" d="M333.0 504.0L290.2 518.3L289.0 514.6L329.0 500.5Z"/>
<path fill="url(#b138)" d="M329.8 501.2L289.2 515.3L288.1 511.9L326.0 498.3Z"/>
<path fill="url(#b139)" d="M326.8 498.9L288.4 512.6L287.3 509.2L323.0 496.1Z"/>
<path fill="url(#b140)" d="M323.8 496.6L287.5 509.9L286.4 506.5L320.0 493.8Z"/>
<path fill="url(#b141)" d="M320.7 494.3L286.6 507.2L285.6 503.8L317.0 491.5Z"/>
<path fill="url(#b142)" d="M317.7 492.1L285.8 504.4L285.2 502.0L314.9 490.3Z"/>
<path fill="url(#b143)" d="M315.5 490.6L285.3 502.5L284.7 500.0L312.7 488.8Z"/>
<path fill="url(#b144)" d="M313.2 489.2L284.8 500.5L284.2 498.0L310.4 487.4Z"/>
<path fill="url(#b145)" d="M311.0 487.7L284.3 498.5L283.7 496.0L308.1 485.9Z"/>
<path fill="url(#b146)" d="M308.7 486.3L283.8 496.5L283.3 494.3L306.5 485.1Z"/>
<path fill="url(#b147)" d="M307.0 485.4L283.4 494.7L282.9 492.5L304.8 484.3Z"/>
<path fill="url(#b148)" d="M305.2 484.5L283.0 492.9L282.5 490.6L303.1 483.4Z"/>
<path fill="url(#b149)" d="M303.5 483.6L282.6 491.1L282.1 488.8L301.4 482.5Z"/>
<path d="M543.5 503.8L599.8 471.2" stroke="#6dff6d" stroke-opacity="0.08" stroke-width="1.4"/>
<path d="M545.2 506.8L603.4 475.6" stroke="#0a4a0a" stroke-opacity="0.04" stroke-width="1.0"/>
<path d="M547.0 510.3L607.5 480.9" stroke="#6dff6d" stroke-opacity="0.06" stroke-width="2.2"/>
<path d="M548.7 513.0L610.5 485.2" stroke="#0a4a0a" stroke-opacity="0.07" stroke-width="1.8"/>
<path d="M549.8 515.1L612.7 488.5" stroke="#0a4a0a" stroke-opacity="0.09" stroke-width="1.6"/>
<path d="M551.6 518.4L616.0 493.9" stroke="#0a4a0a" stroke-opacity="0.04" stroke-width="1.9"/>
<path d="M553.1 521.6L618.9 498.9" stroke="#6dff6d" stroke-opacity="0.04" stroke-width="2.0"/>
<path d="M554.4 524.5L621.4 503.6" stroke="#0a4a0a" stroke-opacity="0.09" stroke-width="1.9"/>
<path d="M555.9 528.5L624.2 510.2" stroke="#6dff6d" stroke-opacity="0.10" stroke-width="1.5"/>
<path d="M557.4 532.6L626.4 517.1" stroke="#0a4a0a" stroke-opacity="0.05" stroke-width="1.2"/>
<path d="M558.2 535.0L627.6 521.2" stroke="#0a4a0a" stroke-opacity="0.07" stroke-width="1.8"/>
<path d="M558.9 537.7L628.7 525.7" stroke="#0a4a0a" stroke-opacity="0.06" stroke-width="1.4"/>
<path d="M559.8 541.1L630.0 531.4" stroke="#0a4a0a" stroke-opacity="0.09" stroke-width="1.8"/>
<path d="M560.3 545.4L631.2 538.5" stroke="#0a4a0a" stroke-opacity="0.10" stroke-width="1.8"/>
<path d="M560.3 547.9L631.7 542.5" stroke="#0a4a0a" stroke-opacity="0.10" stroke-width="2.1"/>
<path d="M560.2 551.4L632.2 548.3" stroke="#0a4a0a" stroke-opacity="0.05" stroke-width="2.0"/>
<path d="M560.1 554.8L632.4 554.1" stroke="#6dff6d" stroke-opacity="0.04" stroke-width="2.0"/>
<path d="M559.7 559.3L631.8 561.5" stroke="#6dff6d" stroke-opacity="0.10" stroke-width="1.5"/>
<path d="M559.4 561.7L631.4 565.5" stroke="#6dff6d" stroke-opacity="0.09" stroke-width="2.0"/>
<path d="M559.1 563.8L630.9 569.1" stroke="#0a4a0a" stroke-opacity="0.04" stroke-width="1.9"/>
<path d="M558.6 566.6L630.2 573.8" stroke="#0a4a0a" stroke-opacity="0.10" stroke-width="1.6"/>
<path d="M557.7 571.0L628.6 581.1" stroke="#6dff6d" stroke-opacity="0.05" stroke-width="1.7"/>
<path d="M557.2 573.1L627.7 584.6" stroke="#6dff6d" stroke-opacity="0.07" stroke-width="1.7"/>
<path d="M556.6 575.4L626.6 588.5" stroke="#6dff6d" stroke-opacity="0.10" stroke-width="1.4"/>
<path d="M555.4 579.5L624.4 595.4" stroke="#0a4a0a" stroke-opacity="0.06" stroke-width="1.6"/>
<path d="M554.4 582.6L622.7 600.6" stroke="#0a4a0a" stroke-opacity="0.08" stroke-width="1.7"/>
<path d="M553.3 585.9L620.8 606.1" stroke="#0a4a0a" stroke-opacity="0.07" stroke-width="1.5"/>
<path d="M552.0 589.4L618.7 611.9" stroke="#6dff6d" stroke-opacity="0.06" stroke-width="2.2"/>
<path d="M550.7 592.4L616.6 617.0" stroke="#0a4a0a" stroke-opacity="0.04" stroke-width="1.5"/>
<path d="M549.3 595.5L614.3 622.1" stroke="#6dff6d" stroke-opacity="0.08" stroke-width="1.8"/>
<path d="M548.4 597.4L612.7 625.4" stroke="#0a4a0a" stroke-opacity="0.07" stroke-width="1.8"/>
<path d="M547.1 599.9L610.6 629.6" stroke="#0a4a0a" stroke-opacity="0.08" stroke-width="1.0"/>
<path d="M546.0 601.8L609.0 632.8" stroke="#0a4a0a" stroke-opacity="0.10" stroke-width="1.3"/>
<path d="M544.5 604.4L606.5 637.2" stroke="#0a4a0a" stroke-opacity="0.06" stroke-width="1.4"/>
<path d="M543.0 606.7L604.1 641.2" stroke="#6dff6d" stroke-opacity="0.08" stroke-width="1.4"/>
<path d="M541.4 609.1L601.6 645.2" stroke="#0a4a0a" stroke-opacity="0.04" stroke-width="1.7"/>
<path d="M539.4 612.2L598.1 650.4" stroke="#6dff6d" stroke-opacity="0.06" stroke-width="2.0"/>
<path d="M538.0 614.3L595.5 653.8" stroke="#6dff6d" stroke-opacity="0.07" stroke-width="1.8"/>
<path d="M536.8 616.2L592.9 656.5" stroke="#6dff6d" stroke-opacity="0.06" stroke-width="2.0"/>
<path d="M535.1 618.7L589.4 660.2" stroke="#0a4a0a" stroke-opacity="0.05" stroke-width="1.4"/>
<path d="M533.0 621.5L585.2 664.2" stroke="#0a4a0a" stroke-opacity="0.07" stroke-width="1.3"/>
<path d="M531.6 623.3L582.5 666.9" stroke="#0a4a0a" stroke-opacity="0.05" stroke-width="2.0"/>
<path d="M529.1 626.4L577.9 671.5" stroke="#6dff6d" stroke-opacity="0.06" stroke-width="2.0"/>
<path d="M526.8 629.0L573.7 675.4" stroke="#0a4a0a" stroke-opacity="0.06" stroke-width="1.2"/>
<path d="M524.9 630.9L570.4 678.2" stroke="#0a4a0a" stroke-opacity="0.06" stroke-width="1.4"/>
<path d="M522.8 633.0L566.6 681.3" stroke="#6dff6d" stroke-opacity="0.07" stroke-width="2.1"/>
<path d="M521.1 634.7L563.6 683.7" stroke="#6dff6d" stroke-opacity="0.11" stroke-width="2.1"/>
<path d="M517.9 637.6L557.9 687.8" stroke="#6dff6d" stroke-opacity="0.11" stroke-width="2.1"/>
<path d="M515.9 639.2L554.5 690.1" stroke="#0a4a0a" stroke-opacity="0.09" stroke-width="1.8"/>
<path d="M513.4 641.2L550.1 692.9" stroke="#6dff6d" stroke-opacity="0.06" stroke-width="1.3"/>
<path d="M511.7 642.5L547.1 694.7" stroke="#0a4a0a" stroke-opacity="0.06" stroke-width="2.0"/>
<path d="M510.0 643.7L544.1 696.3" stroke="#0a4a0a" stroke-opacity="0.08" stroke-width="2.1"/>
<path d="M506.5 646.1L538.3 699.5" stroke="#0a4a0a" stroke-opacity="0.07" stroke-width="1.0"/>
<path d="M503.3 648.1L533.0 702.4" stroke="#6dff6d" stroke-opacity="0.06" stroke-width="1.8"/>
<path d="M500.5 649.7L528.4 704.7" stroke="#6dff6d" stroke-opacity="0.11" stroke-width="1.7"/>
<path d="M498.0 651.1L524.3 706.7" stroke="#6dff6d" stroke-opacity="0.10" stroke-width="1.6"/>
<path d="M494.5 652.8L518.7 709.1" stroke="#6dff6d" stroke-opacity="0.05" stroke-width="1.6"/>
<path d="M490.9 654.4L512.8 711.3" stroke="#6dff6d" stroke-opacity="0.10" stroke-width="2.1"/>
<path d="M487.2 655.9L506.8 713.2" stroke="#0a4a0a" stroke-opacity="0.04" stroke-width="1.8"/>
<path d="M483.4 657.3L500.6 714.9" stroke="#6dff6d" stroke-opacity="0.06" stroke-width="1.3"/>
<path d="M480.2 658.4L495.6 716.1" stroke="#6dff6d" stroke-opacity="0.07" stroke-width="1.9"/>
<path d="M478.3 658.9L492.5 716.8" stroke="#6dff6d" stroke-opacity="0.05" stroke-width="1.1"/>
<path d="M476.2 659.5L489.1 717.5" stroke="#0a4a0a" stroke-opacity="0.09" stroke-width="1.1"/>
<path d="M473.0 660.3L484.1 718.4" stroke="#6dff6d" stroke-opacity="0.06" stroke-width="1.4"/>
<path d="M469.5 661.1L478.6 719.3" stroke="#0a4a0a" stroke-opacity="0.06" stroke-width="1.2"/>
<path d="M466.7 661.6L474.2 719.9" stroke="#6dff6d" stroke-opacity="0.08" stroke-width="1.9"/>
<path d="M463.8 662.0L469.7 720.3" stroke="#6dff6d" stroke-opacity="0.05" stroke-width="1.4"/>
<path d="M460.3 662.5L464.2 720.7" stroke="#0a4a0a" stroke-opacity="0.06" stroke-width="2.0"/>
<path d="M456.7 662.8L458.7 720.9" stroke="#6dff6d" stroke-opacity="0.07" stroke-width="1.6"/>
<path d="M453.0 663.0L452.9 720.8" stroke="#6dff6d" stroke-opacity="0.09" stroke-width="1.6"/>
<path d="M450.3 663.4L448.9 720.6" stroke="#0a4a0a" stroke-opacity="0.08" stroke-width="1.1"/>
<path d="M447.2 663.8L444.1 720.2" stroke="#6dff6d" stroke-opacity="0.10" stroke-width="2.1"/>
<path d="M444.2 664.0L439.6 719.8" stroke="#0a4a0a" stroke-opacity="0.09" stroke-width="1.3"/>
<path d="M440.9 664.2L434.8 719.1" stroke="#6dff6d" stroke-opacity="0.10" stroke-width="1.8"/>
<path d="M436.6 664.3L428.4 718.1" stroke="#0a4a0a" stroke-opacity="0.08" stroke-width="1.9"/>
<path d="M433.0 664.3L423.3 717.0" stroke="#6dff6d" stroke-opacity="0.08" stroke-width="1.0"/>
<path d="M430.5 664.2L419.7 716.1" stroke="#0a4a0a" stroke-opacity="0.04" stroke-width="1.1"/>
<path d="M428.1 664.0L416.3 715.2" stroke="#0a4a0a" stroke-opacity="0.05" stroke-width="1.0"/>
<path d="M423.8 663.6L410.3 713.5" stroke="#6dff6d" stroke-opacity="0.10" stroke-width="1.8"/>
<path d="M419.5 663.0L404.4 711.5" stroke="#0a4a0a" stroke-opacity="0.07" stroke-width="2.0"/>
<path d="M417.3 662.7L401.3 710.4" stroke="#0a4a0a" stroke-opacity="0.07" stroke-width="1.9"/>
<path d="M414.9 662.2L398.0 709.1" stroke="#0a4a0a" stroke-opacity="0.10" stroke-width="1.1"/>
<path d="M411.9 661.6L394.0 707.4" stroke="#0a4a0a" stroke-opacity="0.09" stroke-width="1.3"/>
<path d="M409.3 661.0L390.6 705.9" stroke="#6dff6d" stroke-opacity="0.08" stroke-width="1.9"/>
<path d="M406.2 660.1L386.5 703.9" stroke="#6dff6d" stroke-opacity="0.07" stroke-width="1.4"/>
<path d="M403.0 659.2L382.3 701.8" stroke="#6dff6d" stroke-opacity="0.08" stroke-width="2.2"/>
<path d="M399.8 658.1L378.4 699.4" stroke="#0a4a0a" stroke-opacity="0.05" stroke-width="1.8"/>
<path d="M395.9 656.7L373.4 696.2" stroke="#0a4a0a" stroke-opacity="0.07" stroke-width="1.6"/>
<path d="M392.2 655.2L369.0 693.1" stroke="#0a4a0a" stroke-opacity="0.05" stroke-width="1.1"/>
<path d="M388.3 653.4L364.3 689.5" stroke="#0a4a0a" stroke-opacity="0.07" stroke-width="1.5"/>
<path d="M384.5 651.6L359.9 685.9" stroke="#6dff6d" stroke-opacity="0.06" stroke-width="1.2"/>
<path d="M381.2 649.6L356.0 682.5" stroke="#6dff6d" stroke-opacity="0.06" stroke-width="1.8"/>
<path d="M377.2 646.9L351.2 678.1" stroke="#6dff6d" stroke-opacity="0.09" stroke-width="1.5"/>
<path d="M373.4 644.3L346.8 673.8" stroke="#0a4a0a" stroke-opacity="0.06" stroke-width="1.3"/>
<path d="M371.5 642.9L344.7 671.5" stroke="#6dff6d" stroke-opacity="0.07" stroke-width="1.2"/>
<path d="M369.0 640.8L341.8 668.3" stroke="#6dff6d" stroke-opacity="0.09" stroke-width="1.2"/>
<path d="M365.2 637.6L337.6 663.2" stroke="#6dff6d" stroke-opacity="0.08" stroke-width="1.6"/>
<path d="M361.8 634.5L333.9 658.4" stroke="#0a4a0a" stroke-opacity="0.07" stroke-width="1.6"/>
<path d="M358.7 631.4L330.8 653.7" stroke="#0a4a0a" stroke-opacity="0.06" stroke-width="1.9"/>
<path d="M355.3 627.8L327.6 648.1" stroke="#6dff6d" stroke-opacity="0.06" stroke-width="1.3"/>
<path d="M352.4 624.6L325.0 643.2" stroke="#0a4a0a" stroke-opacity="0.10" stroke-width="2.0"/>
<path d="M350.4 622.3L323.3 639.8" stroke="#6dff6d" stroke-opacity="0.06" stroke-width="1.2"/>
<path d="M347.7 618.9L321.1 634.8" stroke="#0a4a0a" stroke-opacity="0.09" stroke-width="1.3"/>
<path d="M344.9 615.0L318.8 629.2" stroke="#6dff6d" stroke-opacity="0.07" stroke-width="1.9"/>
<path d="M343.4 612.9L317.7 626.2" stroke="#6dff6d" stroke-opacity="0.10" stroke-width="1.4"/>
<path d="M341.5 610.0L316.3 622.2" stroke="#0a4a0a" stroke-opacity="0.08" stroke-width="1.0"/>
<path d="M339.7 607.2L315.0 618.3" stroke="#6dff6d" stroke-opacity="0.07" stroke-width="1.3"/>
<path d="M337.7 603.7L313.6 613.6" stroke="#0a4a0a" stroke-opacity="0.06" stroke-width="1.7"/>
<path d="M336.4 601.2L312.8 610.4" stroke="#6dff6d" stroke-opacity="0.09" stroke-width="1.1"/>
</g>
<g clip-path="url(#cr)">
<path fill="url(#r0)" d="M500.3 274.5 L557.3 274.7 L556.8 263.6 L500.0 269.1Z"/>
<path fill="url(#r1)" d="M500.1 269.9 L556.9 265.1 L555.4 254.1 L499.4 264.6Z"/>
<path fill="url(#r2)" d="M499.5 265.3 L555.7 255.6 L553.2 244.7 L498.3 260.0Z"/>
<path fill="url(#r3)" d="M498.5 260.8 L553.7 246.2 L550.3 235.6 L496.9 255.7Z"/>
<path fill="url(#r4)" d="M497.2 256.3 L550.8 237.0 L546.5 226.8 L495.1 251.4Z"/>
<path fill="url(#r5)" d="M495.4 252.1 L547.2 228.2 L542.0 218.3 L492.9 247.3Z"/>
<path fill="url(#r6)" d="M493.3 248.0 L542.8 219.6 L536.7 210.3 L490.4 243.4Z"/>
<path fill="url(#r7)" d="M490.8 244.1 L537.6 211.5 L530.8 202.7 L487.5 239.8Z"/>
<path fill="url(#r8)" d="M488.0 240.4 L531.8 203.9 L524.3 195.7 L484.4 236.4Z"/>
<path fill="url(#r9)" d="M484.9 237.0 L525.4 196.8 L517.1 189.3 L480.9 233.3Z"/>
<path fill="url(#r10)" d="M481.5 233.8 L518.3 190.3 L509.4 183.5 L477.2 230.6Z"/>
<path fill="url(#r11)" d="M477.9 231.0 L510.7 184.4 L501.3 178.5 L473.3 228.1Z"/>
<path fill="url(#r12)" d="M474.0 228.5 L502.6 179.2 L492.7 174.1 L469.2 226.0Z"/>
<path fill="url(#r13)" d="M469.9 226.3 L494.1 174.8 L483.8 170.5 L464.9 224.3Z"/>
<path fill="url(#r14)" d="M465.6 224.6 L485.3 171.1 L474.7 167.8 L460.5 223.0Z"/>
<path fill="url(#r15)" d="M461.2 223.2 L476.1 168.1 L465.3 165.8 L456.0 222.0Z"/>
<path fill="url(#r16)" d="M456.7 222.1 L466.8 166.0 L455.7 164.6 L451.4 221.5Z"/>
<path fill="url(#r17)" d="M452.1 221.5 L457.3 164.8 L446.1 164.3 L446.7 221.3Z"/>
<path fill="url(#r18)" d="M447.5 221.3 L447.7 164.3 L436.6 164.8 L442.1 221.6Z"/>
<path fill="url(#r19)" d="M442.9 221.5 L438.1 164.7 L427.1 166.2 L437.6 222.2Z"/>
<path fill="url(#r20)" d="M438.3 222.1 L428.6 165.9 L417.7 168.4 L433.0 223.3Z"/>
<path fill="url(#r21)" d="M433.8 223.1 L419.2 167.9 L408.6 171.3 L428.7 224.7Z"/>
<path fill="url(#r22)" d="M429.3 224.4 L410.0 170.8 L399.8 175.1 L424.4 226.5Z"/>
<path fill="url(#r23)" d="M425.1 226.2 L401.2 174.4 L391.3 179.6 L420.3 228.7Z"/>
<path fill="url(#r24)" d="M421.0 228.3 L392.6 178.8 L383.3 184.9 L416.4 231.2Z"/>
<path fill="url(#r25)" d="M417.1 230.8 L384.5 184.0 L375.7 190.8 L412.8 234.1Z"/>
<path fill="url(#r26)" d="M413.4 233.6 L376.9 189.8 L368.7 197.3 L409.4 237.2Z"/>
<path fill="url(#r27)" d="M410.0 236.7 L369.8 196.2 L362.3 204.5 L406.3 240.7Z"/>
<path fill="url(#r28)" d="M406.8 240.1 L363.3 203.3 L356.5 212.2 L403.6 244.4Z"/>
<path fill="url(#r29)" d="M404.0 243.7 L357.4 210.9 L351.5 220.3 L401.1 248.3Z"/>
<path fill="url(#r30)" d="M401.5 247.6 L352.2 219.0 L347.1 228.9 L399.0 252.4Z"/>
<path fill="url(#r31)" d="M399.3 251.7 L347.8 227.5 L343.5 237.8 L397.3 256.7Z"/>
<path fill="url(#r32)" d="M397.6 256.0 L344.1 236.3 L340.8 246.9 L396.0 261.1Z"/>
<path fill="url(#r33)" d="M396.2 260.4 L341.1 245.5 L338.8 256.3 L395.0 265.6Z"/>
<path fill="url(#r34)" d="M395.1 264.9 L339.0 254.8 L337.6 265.9 L394.5 270.2Z"/>
<path fill="url(#r35)" d="M394.5 269.5 L337.8 264.3 L337.3 275.5 L394.3 274.9Z"/>
<path fill="url(#r36)" d="M394.3 274.1 L337.3 273.9 L337.8 285.0 L394.6 279.5Z"/>
<path fill="url(#r37)" d="M394.5 278.7 L337.7 283.5 L339.2 294.5 L395.2 284.0Z"/>
<path fill="url(#r38)" d="M395.1 283.3 L338.9 293.0 L341.4 303.9 L396.3 288.6Z"/>
<path fill="url(#r39)" d="M396.1 287.8 L340.9 302.4 L344.3 313.0 L397.7 292.9Z"/>
<path fill="url(#r40)" d="M397.4 292.3 L343.8 311.6 L348.1 321.8 L399.5 297.2Z"/>
<path fill="url(#r41)" d="M399.2 296.5 L347.4 320.4 L352.6 330.3 L401.7 301.3Z"/>
<path fill="url(#r42)" d="M401.3 300.6 L351.8 329.0 L357.9 338.3 L404.2 305.2Z"/>
<path fill="url(#r43)" d="M403.8 304.5 L357.0 337.1 L363.8 345.9 L407.1 308.8Z"/>
<path fill="url(#r44)" d="M406.6 308.2 L362.8 344.7 L370.3 352.9 L410.2 312.2Z"/>
<path fill="url(#r45)" d="M409.7 311.6 L369.2 351.8 L377.5 359.3 L413.7 315.3Z"/>
<path fill="url(#r46)" d="M413.1 314.8 L376.3 358.3 L385.2 365.1 L417.4 318.0Z"/>
<path fill="url(#r47)" d="M416.7 317.6 L383.9 364.2 L393.3 370.1 L421.3 320.5Z"/>
<path fill="url(#r48)" d="M420.6 320.1 L392.0 369.4 L401.9 374.5 L425.4 322.6Z"/>
<path fill="url(#r49)" d="M424.7 322.3 L400.5 373.8 L410.8 378.1 L429.7 324.3Z"/>
<path fill="url(#r50)" d="M429.0 324.0 L409.3 377.5 L419.9 380.8 L434.1 325.6Z"/>
<path fill="url(#r51)" d="M433.4 325.4 L418.5 380.5 L429.3 382.8 L438.6 326.6Z"/>
<path fill="url(#r52)" d="M437.9 326.5 L427.8 382.6 L438.9 384.0 L443.2 327.1Z"/>
<path fill="url(#r53)" d="M442.5 327.1 L437.3 383.8 L448.5 384.3 L447.9 327.3Z"/>
<path fill="url(#r54)" d="M447.1 327.3 L446.9 384.3 L458.0 383.8 L452.5 327.0Z"/>
<path fill="url(#r55)" d="M451.7 327.1 L456.5 383.9 L467.5 382.4 L457.0 326.4Z"/>
<path fill="url(#r56)" d="M456.3 326.5 L466.0 382.7 L476.9 380.2 L461.6 325.3Z"/>
<path fill="url(#r57)" d="M460.8 325.5 L475.4 380.7 L486.0 377.3 L465.9 323.9Z"/>
<path fill="url(#r58)" d="M465.3 324.2 L484.6 377.8 L494.8 373.5 L470.2 322.1Z"/>
<path fill="url(#r59)" d="M469.5 322.4 L493.4 374.2 L503.3 369.0 L474.3 319.9Z"/>
<path fill="url(#r60)" d="M473.6 320.3 L502.0 369.8 L511.3 363.7 L478.2 317.4Z"/>
<path fill="url(#r61)" d="M477.5 317.8 L510.1 364.6 L518.9 357.8 L481.8 314.5Z"/>
<path fill="url(#r62)" d="M481.2 315.0 L517.7 358.8 L525.9 351.3 L485.2 311.4Z"/>
<path fill="url(#r63)" d="M484.6 311.9 L524.8 352.4 L532.3 344.1 L488.3 307.9Z"/>
<path fill="url(#r64)" d="M487.8 308.5 L531.3 345.3 L538.1 336.4 L491.0 304.2Z"/>
<path fill="url(#r65)" d="M490.6 304.9 L537.2 337.7 L543.1 328.3 L493.5 300.3Z"/>
<path fill="url(#r66)" d="M493.1 301.0 L542.4 329.6 L547.5 319.7 L495.6 296.2Z"/>
<path fill="url(#r67)" d="M495.3 296.9 L546.8 321.1 L551.1 310.8 L497.3 291.9Z"/>
<path fill="url(#r68)" d="M497.0 292.6 L550.5 312.3 L553.8 301.7 L498.6 287.5Z"/>
<path fill="url(#r69)" d="M498.4 288.2 L553.5 303.1 L555.8 292.3 L499.6 283.0Z"/>
<path fill="url(#r70)" d="M499.5 283.7 L555.6 293.8 L557.0 282.7 L500.1 278.4Z"/>
<path fill="url(#r71)" d="M500.1 279.1 L556.8 284.3 L557.3 273.1 L500.3 273.7Z"/>
</g>
<g clip-path="url(#cn)"><g mask="url(#m1)" filter="url(#bl07)"><path d="M406 440L406 372L413 372L434 332Q447 327 459 332L490 372Q487.5 385 496 399L520 416L470 450Z" fill="url(#nk)"/><path d="M406 440L406 372L413 372L434 332Q447 327 459 332L490 372Q487.5 385 496 399L520 416L470 450Z" fill="url(#nk2)" mask="url(#m2)"/></g></g>
<g clip-path="url(#cn)"><rect x="457" y="353" width="22" height="49" rx="7" fill="#8cff8c" filter="url(#bl3)"/><rect x="462.3" y="361" width="9.7" height="34" rx="4" fill="#f4fff4" filter="url(#bl15)"/><path d="M472 355.5L479.5 365.5" stroke="#c8ffc8" stroke-width="2.6" stroke-linecap="round" filter="url(#bl1)"/></g>
</svg>
<!--/HOOK-->
</div>

<!-- BOTTOM TABS -->
<div id="btabs">
<div class="lbl" style="left:13px;top:845px">3D</div><div class="abs" style="left:7px;top:857px;width:43px;height:2px;background:#8a8778"></div>
<div class="btab" style="left:50px;width:41px">2D</div>
<div class="btab" style="left:92px;width:47px">Preview</div>
<div class="btab" style="left:141px;width:43px">Layers</div>
</div>

<!-- RIGHT PANEL -->
<div id="right">
<div class="lbl" style="left:921px;top:66px">Print settings:</div>
<div class="lbl" style="left:944px;top:91px">Filament:</div>
<div class="lbl" style="left:953px;top:116px">Printer:</div>
<div class="combo" style="top:60px"><svg class="abs" width="16" height="16" viewBox="0 0 16 16" style="left:6px;top:3px"><g transform="translate(8 8)"><g fill="#b8b8b8" stroke="#a0a0a0" stroke-width=".4"><rect x="-1.5" y="-7.6" width="3" height="4" rx=".6" transform="rotate(0)"/><rect x="-1.5" y="-7.6" width="3" height="4" rx=".6" transform="rotate(45)"/><rect x="-1.5" y="-7.6" width="3" height="4" rx=".6" transform="rotate(90)"/><rect x="-1.5" y="-7.6" width="3" height="4" rx=".6" transform="rotate(135)"/><rect x="-1.5" y="-7.6" width="3" height="4" rx=".6" transform="rotate(180)"/><rect x="-1.5" y="-7.6" width="3" height="4" rx=".6" transform="rotate(225)"/><rect x="-1.5" y="-7.6" width="3" height="4" rx=".6" transform="rotate(270)"/><rect x="-1.5" y="-7.6" width="3" height="4" rx=".6" transform="rotate(315)"/></g><circle r="5.2" fill="#c4c4c4" stroke="#a4a4a4" stroke-width=".6"/><circle r="2.3" fill="#f4f3ee" stroke="#a4a4a4" stroke-width=".6"/></g></svg><span class="t">- default -</span><div class="dd"><svg width="9" height="7" viewBox="0 0 9 7" style="position:absolute;left:3px;top:7px"><path d="M1 1.2L4.5 4.8L8 1.2" fill="none" stroke="#4d6185" stroke-width="2"/></svg></div></div>
<div class="combo" style="top:85px"><span class="t">My Settings</span><div class="dd"><svg width="9" height="7" viewBox="0 0 9 7" style="position:absolute;left:3px;top:7px"><path d="M1 1.2L4.5 4.8L8 1.2" fill="none" stroke="#4d6185" stroke-width="2"/></svg></div></div>
<div class="combo" style="top:110px"><svg class="abs" width="16" height="16" viewBox="0 0 16 16" style="left:6px;top:3px"><rect x="3.5" y="2.5" width="9" height="4" fill="#f6f6f6" stroke="#8a8a8a" stroke-width=".8"/><rect x="1" y="6" width="14" height="6.4" rx="1.2" fill="#d8d8d8" stroke="#6e6e6e" stroke-width=".8"/><rect x="3" y="10" width="10" height="3.6" fill="#fafafa" stroke="#7a7a7a" stroke-width=".7"/><path d="M2.4 8.2H13.6" stroke="#9a9a9a" stroke-width=".8"/></svg><span class="t">My Settings</span><div class="dd"><svg width="9" height="7" viewBox="0 0 9 7" style="position:absolute;left:3px;top:7px"><path d="M1 1.2L4.5 4.8L8 1.2" fill="none" stroke="#4d6185" stroke-width="2"/></svg></div></div>
<svg class="abs" width="16" height="16" viewBox="0 0 16 16" style="left:1256px;top:64px"><g transform="translate(8 8)"><g fill="#b8b8b8" stroke="#a0a0a0" stroke-width=".4"><rect x="-1.5" y="-7.6" width="3" height="4" rx=".6" transform="rotate(0)"/><rect x="-1.5" y="-7.6" width="3" height="4" rx=".6" transform="rotate(45)"/><rect x="-1.5" y="-7.6" width="3" height="4" rx=".6" transform="rotate(90)"/><rect x="-1.5" y="-7.6" width="3" height="4" rx=".6" transform="rotate(135)"/><rect x="-1.5" y="-7.6" width="3" height="4" rx=".6" transform="rotate(180)"/><rect x="-1.5" y="-7.6" width="3" height="4" rx=".6" transform="rotate(225)"/><rect x="-1.5" y="-7.6" width="3" height="4" rx=".6" transform="rotate(270)"/><rect x="-1.5" y="-7.6" width="3" height="4" rx=".6" transform="rotate(315)"/></g><circle r="5.2" fill="#c4c4c4" stroke="#a4a4a4" stroke-width=".6"/><circle r="2.3" fill="#f4f3ee" stroke="#a4a4a4" stroke-width=".6"/></g></svg>
<svg class="abs" width="16" height="16" viewBox="0 0 16 16" style="left:1256px;top:89px"><g transform="translate(8 8)"><g fill="#b8b8b8" stroke="#a0a0a0" stroke-width=".4"><rect x="-1.5" y="-7.6" width="3" height="4" rx=".6" transform="rotate(0)"/><rect x="-1.5" y="-7.6" width="3" height="4" rx=".6" transform="rotate(45)"/><rect x="-1.5" y="-7.6" width="3" height="4" rx=".6" transform="rotate(90)"/><rect x="-1.5" y="-7.6" width="3" height="4" rx=".6" transform="rotate(135)"/><rect x="-1.5" y="-7.6" width="3" height="4" rx=".6" transform="rotate(180)"/><rect x="-1.5" y="-7.6" width="3" height="4" rx=".6" transform="rotate(225)"/><rect x="-1.5" y="-7.6" width="3" height="4" rx=".6" transform="rotate(270)"/><rect x="-1.5" y="-7.6" width="3" height="4" rx=".6" transform="rotate(315)"/></g><circle r="5.2" fill="#c4c4c4" stroke="#a4a4a4" stroke-width=".6"/><circle r="2.3" fill="#f4f3ee" stroke="#a4a4a4" stroke-width=".6"/></g></svg>
<svg class="abs" width="16" height="16" viewBox="0 0 16 16" style="left:1256px;top:114px"><g transform="translate(8 8)"><g fill="#b8b8b8" stroke="#a0a0a0" stroke-width=".4"><rect x="-1.5" y="-7.6" width="3" height="4" rx=".6" transform="rotate(0)"/><rect x="-1.5" y="-7.6" width="3" height="4" rx=".6" transform="rotate(45)"/><rect x="-1.5" y="-7.6" width="3" height="4" rx=".6" transform="rotate(90)"/><rect x="-1.5" y="-7.6" width="3" height="4" rx=".6" transform="rotate(135)"/><rect x="-1.5" y="-7.6" width="3" height="4" rx=".6" transform="rotate(180)"/><rect x="-1.5" y="-7.6" width="3" height="4" rx=".6" transform="rotate(225)"/><rect x="-1.5" y="-7.6" width="3" height="4" rx=".6" transform="rotate(270)"/><rect x="-1.5" y="-7.6" width="3" height="4" rx=".6" transform="rotate(315)"/></g><circle r="5.2" fill="#c4c4c4" stroke="#a4a4a4" stroke-width=".6"/><circle r="2.3" fill="#f4f3ee" stroke="#a4a4a4" stroke-width=".6"/></g></svg>
<div class="btn" style="left:1050px;top:135px;width:101px;height:28px;line-height:27px"><svg width="16" height="16" viewBox="0 0 16 16" style="left:1px;top:5px"><path d="M1 4.8L1 10.6L8 15L15.2 11L15.2 5.2L11.6 3.2L8.2 1.2L4.4 2.6Z" fill="#ececec" stroke="#a9a9a9" stroke-width=".9" stroke-linejoin="round"/><path d="M1 4.8L8 8.8L15.2 5.2M8 8.8L8 15" fill="none" stroke="#b9b9b9" stroke-width=".8"/><ellipse cx="4.6" cy="4.2" rx="2" ry="1.1" fill="#fbfbfb" stroke="#b0b0b0" stroke-width=".6"/><ellipse cx="8.4" cy="2.6" rx="2" ry="1.1" fill="#fbfbfb" stroke="#b0b0b0" stroke-width=".6"/><ellipse cx="8.2" cy="6.2" rx="2" ry="1.1" fill="#fbfbfb" stroke="#b0b0b0" stroke-width=".6"/><ellipse cx="12" cy="4.6" rx="2" ry="1.1" fill="#fbfbfb" stroke="#b0b0b0" stroke-width=".6"/><path d="M5.5 9.5H10V7L15 11L10 15V12.5H5.5Z" fill="#5bb04a" stroke="#3f8f30" stroke-width=".7" stroke-linejoin="round"/></svg><span style="left:16px">Export STL...</span></div>
<div class="btn" style="left:1153px;top:135px;width:118px;height:28px;line-height:27px"><svg width="16" height="16" viewBox="0 0 16 16" style="left:1px;top:5px"><g transform="translate(8 8)"><g fill="#b8b8b8" stroke="#a0a0a0" stroke-width=".4"><rect x="-1.5" y="-7.6" width="3" height="4" rx=".6" transform="rotate(0)"/><rect x="-1.5" y="-7.6" width="3" height="4" rx=".6" transform="rotate(45)"/><rect x="-1.5" y="-7.6" width="3" height="4" rx=".6" transform="rotate(90)"/><rect x="-1.5" y="-7.6" width="3" height="4" rx=".6" transform="rotate(135)"/><rect x="-1.5" y="-7.6" width="3" height="4" rx=".6" transform="rotate(180)"/><rect x="-1.5" y="-7.6" width="3" height="4" rx=".6" transform="rotate(225)"/><rect x="-1.5" y="-7.6" width="3" height="4" rx=".6" transform="rotate(270)"/><rect x="-1.5" y="-7.6" width="3" height="4" rx=".6" transform="rotate(315)"/></g><circle r="5.2" fill="#c4c4c4" stroke="#a4a4a4" stroke-width=".6"/><circle r="2.3" fill="#f4f3ee" stroke="#a4a4a4" stroke-width=".6"/></g><path d="M5.5 9.5H10V7L15 11L10 15V12.5H5.5Z" fill="#5bb04a" stroke="#3f8f30" stroke-width=".7" stroke-linejoin="round"/></svg><span style="left:16px">Export G-code...</span></div>
<div class="grp" style="left:922px;top:176px;width:350px;height:52px"><b>Support material</b></div>
<div class="lbl" style="left:932px;top:192px;line-height:13px">Generate support<br>material:</div>
<div class="abs" style="left:1249px;top:197px;width:13px;height:13px;border:1px solid #1c5180;background:linear-gradient(135deg,#dcdcd7,#fff)"><svg width="11" height="11" viewBox="0 0 11 11" style="position:absolute;left:0;top:0"><path d="M2.2 4.6L4.4 6.8L8.6 2.6" fill="none" stroke="#21a121" stroke-width="2"/></svg></div>
<div class="grp" style="left:922px;top:766px;width:350px;height:110px"><b>Info</b></div>
<div class="lbl" style="left:926px;top:781px">Object:</div>
<div class="combo" style="left:963px;top:777px;width:305px;height:21px"><span class="t" style="left:2px;top:4px">PM3D_Hook.stl</span><div class="dd" style="height:17px"><svg width="9" height="7" viewBox="0 0 9 7" style="position:absolute;left:3px;top:6px"><path d="M1 1.2L4.5 4.8L8 1.2" fill="none" stroke="#4d6185" stroke-width="2"/></svg></div></div>
<div class="lbl" style="left:926px;top:804px">Copies:</div><div class="lbl" style="left:979px;top:804px">1</div><div class="lbl" style="left:1069px;top:804px">Size:</div><div class="lbl" style="left:1119px;top:804px">14.96 x 57.55 x 92.21</div>
<div class="lbl" style="left:926px;top:823px">Volume:</div><div class="lbl" style="left:979px;top:823px">22620.45</div><div class="lbl" style="left:1069px;top:823px">Facets:</div><div class="lbl" style="left:1119px;top:823px">554266 (1 shells)</div>
<div class="lbl" style="left:926px;top:842px">Materials:</div><div class="lbl" style="left:979px;top:842px">1</div><div class="lbl" style="left:1069px;top:842px">Manifold:</div><div class="lbl" style="left:1119px;top:842px">Yes</div>
</div>
</body>
</html>
